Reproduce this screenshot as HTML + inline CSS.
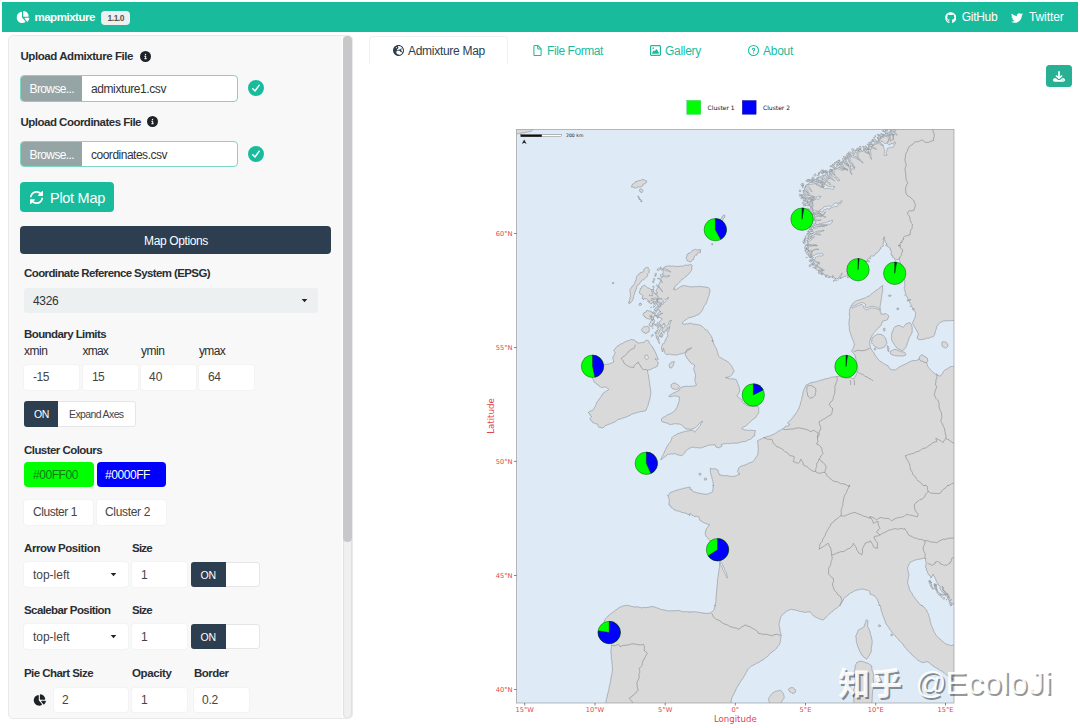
<!DOCTYPE html>
<html lang="en"><head><meta charset="utf-8"><title>mapmixture</title>
<style>
*{box-sizing:border-box;margin:0;padding:0}
html,body{width:1080px;height:728px;overflow:hidden;background:#fff}
body{font-family:"Liberation Sans",sans-serif;font-size:11px;color:#212529;position:relative}
svg{display:block}
.abs{position:absolute}
.t{position:absolute;white-space:nowrap;line-height:16px;height:16px;color:#2a2e33}
#nav{left:2px;top:2px;width:1076px;height:30px;background:#18bc9c}
#nav .t{color:#fff}
.badge{position:absolute;left:101px;top:11px;width:29px;height:13px;border-radius:3px;background:#ecf0f1;color:#555;font-size:8.5px;font-weight:bold;text-align:center;line-height:13px}
#side{left:8px;top:35px;width:345px;height:684px;background:#f8f8f8;border:1px solid #e9e9e9;border-radius:5px}
#sbt{left:343.3px;top:36px;width:8.6px;height:681.5px;background:#f0f0f0;border-radius:4.3px;box-shadow:inset 1px 0 1px #dedede,inset -1px 0 1px #dedede}
#sbh{left:343.3px;top:36px;width:8.6px;height:506px;background:#c8c8cb;border-radius:4.3px}
.inp{position:absolute;background:#fff;border-radius:3px;height:25px;box-shadow:0 0 0 1px #f3f3f3}
.file{position:absolute;left:20px;width:218px;height:26.5px;border-radius:4px;overflow:hidden;background:#fff;border:1px solid #7fd6c2}
.file .br{position:absolute;left:-1px;top:-1px;width:62px;height:27px;background:#95a5a6}
.btn{position:absolute;border-radius:4px;color:#fff}
.dark{background:#2c3e50}
.on{position:absolute;background:#2c3e50;border-radius:3px 0 0 3px}
.tog{position:absolute;background:#fff;border:1px solid #e6e6e6;border-radius:3px}
.teal{color:#18bc9c}
</style></head><body>
<!-- NAVBAR -->
<div id="nav" class="abs">
 <svg class="abs" style="left:14px;top:8.6px" width="13.5" height="12" viewBox="0 0 576 512"><path fill="#fff" d="M512.4 240h-176c-17.700 0-32-14.300-32-32V32c0-17.700 14.400-32.200 31.900-29.900 107 14.200 191.800 99 206 206 2.300 17.500-12.200 31.900-29.900 31.900M222.600 37.200c18.100-3.800 33.800 11 33.800 29.500V264c0 5.600 2 11 5.500 15.300L394 438.700c11.700 14.100 9.200 35.400-6.900 44.100C353 501.400 313.900 512 272.400 512c-132.500 0-240-107.500-240-240 0-115.500 81.500-211.900 190.200-234.800M477.800 288h64c18.500 0 33.300 15.700 29.500 33.800-10.200 48.400-35 91.400-69.600 124.200-12.300 11.700-31.600 9.200-42.400-3.900l-84.400-101.700c-17.300-20.900-2.400-52.400 24.600-52.400h78.200z"/></svg>
 <div class="t" style="left:32.4px;top:7px;font-size:11.5px;letter-spacing:-0.459px;font-weight:bold;color:#fff">mapmixture</div>
 <div class="badge" style="left:99px;top:8.5px;height:14px;width:29px;border-radius:4px"></div><div class="t" style="left:105.5px;top:7.5px;font-size:8.5px;letter-spacing:-0.481px;font-weight:bold;color:#555">1.1.0</div>
 <svg class="abs" style="left:942.5px;top:9.6px" width="11.5" height="11.5" viewBox="0 0 512 512"><path fill="#fff" d="M173.9 397.4c0 2-2.300 3.600-5.200 3.600-3.300.3-5.600-1.300-5.600-3.600 0-2 2.300-3.600 5.200-3.600 3-.3 5.600 1.300 5.600 3.600m-31.100-4.500c-.7 2 1.300 4.300 4.300 4.900 2.600 1 5.600 0 6.200-2s-1.300-4.300-4.300-5.200c-2.600-.7-5.500.3-6.200 2.300m44.200-1.700c-2.900.7-4.900 2.600-4.600 4.900.3 2 2.900 3.300 5.900 2.600 2.900-.7 4.900-2.600 4.600-4.600-.3-1.900-3-3.200-5.900-2.900M252.800 8C114.100 8 8 113.300 8 252c0 110.900 69.800 205.800 169.500 239.200 12.800 2.300 17.300-5.600 17.300-12.100 0-6.200-.3-40.400-.3-61.400 0 0-70 15-84.700-29.800 0 0-11.400-29.100-27.800-36.600 0 0-22.900-15.700 1.600-15.400 0 0 24.900 2 38.600 25.800 21.900 38.600 58.600 27.500 72.900 20.900 2.300-16 8.800-27.100 16-33.700-55.900-6.200-112.300-14.300-112.300-110.500 0-27.500 7.600-41.300 23.600-58.900-2.600-6.500-11.100-33.300 2.600-67.900 20.900-6.500 69 27 69 27 20-5.600 41.500-8.500 62.800-8.500s42.800 2.900 62.800 8.500c0 0 48.100-33.600 69-27 13.700 34.700 5.200 61.400 2.600 67.900 16 17.700 25.800 31.500 25.800 58.900 0 96.500-58.900 104.200-114.800 110.500 9.200 7.900 17 22.900 17 46.400 0 33.700-.3 75.400-.3 83.600 0 6.500 4.600 14.400 17.300 12.100C436.200 457.800 504 362.900 504 252 504 113.300 391.500 8 252.800 8"/></svg>
 <div class="t" style="left:959.7px;top:7px;font-size:12px;letter-spacing:-0.275px;color:#fff">GitHub</div>
 <svg class="abs" style="left:1009px;top:9.6px" width="12" height="12" viewBox="0 0 512 512"><path fill="#fff" d="M459.400 151.700c.3 4.500.3 9.100.3 13.600 0 138.700-105.600 298.600-298.600 298.600-59.500 0-114.700-17.200-161.100-47.100 8.400 1 16.600 1.300 25.300 1.300 49.100 0 94.200-16.600 130.300-44.800-46.100-1-84.800-31.200-98.100-72.800 6.500 1 13 1.600 19.800 1.600 9.400 0 18.800-1.300 27.600-3.600-48.100-9.700-84.100-52-84.100-103v-1.300c14 7.800 30.200 12.700 47.400 13.300-28.300-18.800-46.800-51-46.800-87.400 0-19.500 5.200-37.400 14.300-53C87.400 130.800 165 172.400 252.100 176.900c-1.600-7.800-2.600-15.900-2.600-24C249.500 95.100 296.300 48 354.400 48c30.200 0 57.500 12.700 76.700 33.100 23.700-4.500 46.500-13.300 66.600-25.300-7.800 24.400-24.400 44.800-46.100 57.800 21.100-2.300 41.600-8.100 60.400-16.200-14.300 20.800-32.200 39.300-52.600 54.300"/></svg>
 <div class="t" style="left:1027px;top:7px;font-size:12px;letter-spacing:-0.106px;color:#fff">Twitter</div>
</div>
<!-- SIDEBAR -->
<div id="side" class="abs"></div>
<div class="abs" style="left:340.6px;top:36px;width:2.8px;height:682px;background:linear-gradient(90deg,#f8f8f8,#fff)"></div><div id="sbt" class="abs"></div><div id="sbh" class="abs"></div>
<div class="t" style="left:20.5px;top:48px;font-size:11.5px;letter-spacing:-0.434px;font-weight:bold">Upload Admixture File</div>
<svg class="abs" style="left:140px;top:51px" width="11" height="11" viewBox="0 0 512 512"><path fill="#1f2327" d="M256 512a256 256 0 1 0 0-512 256 256 0 1 0 0 512m-32-352a32 32 0 1 1 64 0 32 32 0 1 1-64 0m-8 64h48c13.300 0 24 10.700 24 24v88h8c13.300 0 24 10.700 24 24s-10.700 24-24 24h-80c-13.300 0-24-10.700-24-24s10.700-24 24-24h24v-64h-24c-13.300 0-24-10.700-24-24s10.700-24 24-24"/></svg>
<div class="file" style="top:75px"><div class="br"></div></div><div class="t" style="left:29.5px;top:81px;font-size:12px;letter-spacing:-0.613px;color:#fff">Browse...</div><div class="t" style="left:91px;top:81px;font-size:12px;letter-spacing:-0.407px;color:#333">admixture1.csv</div>
<svg class="abs" style="left:248px;top:80px" width="16" height="16" viewBox="0 0 512 512"><path fill="#18bc9c" d="M256 512a256 256 0 1 1 0-512 256 256 0 1 1 0 512m118-366.300c-10.700-7.800-25.700-5.400-33.500 5.300L221.100 315.200 169 263.100c-9.400-9.400-24.600-9.400-33.900 0s-9.400 24.600 0 33.900l72 72c5 5 11.800 7.500 18.800 7s13.400-4.100 17.500-9.800l135.900-187c7.800-10.700 5.400-25.700-5.300-33.500"/></svg>
<div class="t" style="left:20.5px;top:114px;font-size:11.5px;letter-spacing:-0.511px;font-weight:bold">Upload Coordinates File</div>
<svg class="abs" style="left:147px;top:116px" width="11" height="11" viewBox="0 0 512 512"><path fill="#1f2327" d="M256 512a256 256 0 1 0 0-512 256 256 0 1 0 0 512m-32-352a32 32 0 1 1 64 0 32 32 0 1 1-64 0m-8 64h48c13.300 0 24 10.700 24 24v88h8c13.300 0 24 10.700 24 24s-10.700 24-24 24h-80c-13.300 0-24-10.700-24-24s10.700-24 24-24h24v-64h-24c-13.300 0-24-10.700-24-24s10.700-24 24-24"/></svg>
<div class="file" style="top:140.5px"><div class="br"></div></div><div class="t" style="left:29.5px;top:146.5px;font-size:12px;letter-spacing:-0.613px;color:#fff">Browse...</div><div class="t" style="left:91px;top:146.5px;font-size:12px;letter-spacing:-0.492px;color:#333">coordinates.csv</div>
<svg class="abs" style="left:248px;top:146px" width="16" height="16" viewBox="0 0 512 512"><path fill="#18bc9c" d="M256 512a256 256 0 1 1 0-512 256 256 0 1 1 0 512m118-366.300c-10.700-7.800-25.700-5.400-33.500 5.300L221.100 315.200 169 263.100c-9.400-9.400-24.600-9.400-33.900 0s-9.400 24.600 0 33.900l72 72c5 5 11.800 7.500 18.800 7s13.400-4.100 17.500-9.800l135.900-187c7.800-10.700 5.400-25.700-5.300-33.500"/></svg>
<div class="btn" style="left:20px;top:182px;width:94px;height:30px;background:#18bc9c">
 <svg class="abs" style="left:10px;top:9px" width="13" height="13" viewBox="0 0 512 512"><path fill="#fff" d="M480.100 192h7.900c13.300 0 24-10.700 24-24V24c0-9.700-5.800-18.500-14.800-22.200S477.900.2 471 7l-51.700 51.800C375 22.100 318 0 256 0 127 0 20.300 95.400 2.600 219.500c-2.500 17.500 9.600 33.700 27.100 36.200s33.700-9.700 36.200-27.100C79.200 135.500 159.300 64 256 64c44.400 0 85.200 15 117.700 40.300L327 151c-6.900 6.900-8.900 17.200-5.200 26.200S334.300 192 344 192zm29.400 100.500c2.500-17.500-9.700-33.700-27.100-36.200s-33.700 9.700-36.200 27.100c-13.300 93-93.400 164.500-190.100 164.500-44.400 0-85.200-15-117.700-40.300L185 361c6.900-6.900 8.900-17.200 5.200-26.200S177.700 320 168 320H24c-13.300 0-24 10.700-24 24v144c0 9.700 5.800 18.500 14.800 22.200s19.300 1.600 26.200-5.200l51.800-51.800C137 489.900 194 512 256 512c129 0 235.700-95.400 253.400-219.500z"/></svg>
 <div class="t" style="left:30px;top:7.7px;font-size:14.5px;letter-spacing:-0.278px;color:#fff">Plot Map</div>
</div>
<div class="btn dark" style="left:20px;top:226px;width:311px;height:28px;border-radius:4px"></div><div class="t" style="left:144px;top:233px;font-size:12px;letter-spacing:-0.367px;color:#fff">Map Options</div>
<div class="t" style="left:24px;top:265px;font-size:11.5px;letter-spacing:-0.601px;font-weight:bold">Coordinate Reference System (EPSG)</div>
<div class="abs" style="left:24px;top:288px;width:294px;height:25px;background:#ecf0f1;border-radius:3px"></div><div class="t" style="left:33px;top:292.5px;font-size:12px;letter-spacing:-0.299px;color:#333">4326</div>
<svg class="abs" style="left:301px;top:297px" width="7" height="7" viewBox="0 0 10 10"><path fill="#222" d="M1 3h8L5 7.500z"/></svg>
<div class="t" style="left:24px;top:326px;font-size:11.5px;letter-spacing:-0.582px;font-weight:bold">Boundary Limits</div>
<div class="t" style="left:24px;top:342.5px;font-size:12px;letter-spacing:-0.459px">xmin</div><div class="t" style="left:82.5px;top:342.5px;font-size:12px;letter-spacing:-0.793px">xmax</div><div class="t" style="left:141px;top:342.5px;font-size:12px;letter-spacing:-0.459px">ymin</div><div class="t" style="left:199px;top:342.5px;font-size:12px;letter-spacing:-0.668px">ymax</div>
<div class="inp" style="left:24px;top:365px;width:55px"></div><div class="inp" style="left:83px;top:365px;width:55px"></div><div class="inp" style="left:141px;top:365px;width:55px"></div><div class="inp" style="left:199px;top:365px;width:55px"></div><div class="t" style="left:33px;top:369px;font-size:12px;letter-spacing:-0.448px;color:#444">-15</div><div class="t" style="left:92px;top:369px;font-size:12px;letter-spacing:-0.674px;color:#444">15</div><div class="t" style="left:149px;top:369px;font-size:12px;letter-spacing:0.076px;color:#444">40</div><div class="t" style="left:208px;top:369px;font-size:12px;letter-spacing:-0.424px;color:#444">64</div>
<div class="tog" style="left:24px;top:401px;width:112px;height:26px"></div>
<div class="on" style="left:24px;top:401px;width:34px;height:26px"></div><div class="t" style="left:34px;top:406px;font-size:10.5px;letter-spacing:-0.375px;color:#fff">ON</div>
<div class="t" style="left:69px;top:406px;font-size:10.5px;letter-spacing:-0.618px;color:#444">Expand Axes</div>
<div class="t" style="left:24px;top:442px;font-size:11.5px;letter-spacing:-0.551px;font-weight:bold">Cluster Colours</div>
<div class="abs" style="left:24px;top:462px;width:70px;height:25px;border-radius:4px;background:#00ff00"></div><div class="t" style="left:33px;top:466.5px;font-size:12px;letter-spacing:-0.433px;color:#127a12">#00FF00</div>
<div class="abs" style="left:97px;top:462px;width:69px;height:25px;border-radius:4px;background:#0000ff"></div><div class="t" style="left:105px;top:466.5px;font-size:12px;letter-spacing:-0.433px;color:#fff">#0000FF</div>
<div class="inp" style="left:24px;top:500px;width:69px"></div><div class="inp" style="left:97px;top:500px;width:69px"></div><div class="t" style="left:33px;top:504px;font-size:12px;letter-spacing:-0.447px;color:#444">Cluster 1</div><div class="t" style="left:105px;top:504px;font-size:12px;letter-spacing:-0.335px;color:#444">Cluster 2</div>
<div class="t" style="left:24px;top:540px;font-size:11.5px;letter-spacing:-0.413px;font-weight:bold">Arrow Position</div><div class="t" style="left:132px;top:540px;font-size:11.5px;letter-spacing:-0.753px;font-weight:bold">Size</div>
<div class="inp" style="left:24px;top:562px;width:104px"></div><div class="t" style="left:33px;top:567px;font-size:12px;letter-spacing:-0.023px;color:#444">top-left</div>
<svg class="abs" style="left:110px;top:571px" width="7" height="7" viewBox="0 0 10 10"><path fill="#222" d="M1 3h8L5 7.500z"/></svg>
<div class="inp" style="left:132px;top:562px;width:55px"></div><div class="t" style="left:141px;top:567px;font-size:12px;letter-spacing:-0.674px;color:#444">1</div>
<div class="tog" style="left:191px;top:562px;width:69px;height:25px"></div><div class="on" style="left:191px;top:562px;width:35px;height:25px"></div><div class="t" style="left:200.5px;top:567px;font-size:10.5px;letter-spacing:-0.125px;color:#fff">ON</div>
<div class="t" style="left:24px;top:601.5px;font-size:11.5px;letter-spacing:-0.589px;font-weight:bold">Scalebar Position</div><div class="t" style="left:132px;top:601.5px;font-size:11.5px;letter-spacing:-0.753px;font-weight:bold">Size</div>
<div class="inp" style="left:24px;top:624px;width:104px"></div><div class="t" style="left:33px;top:629px;font-size:12px;letter-spacing:-0.023px;color:#444">top-left</div>
<svg class="abs" style="left:110px;top:633px" width="7" height="7" viewBox="0 0 10 10"><path fill="#222" d="M1 3h8L5 7.500z"/></svg>
<div class="inp" style="left:132px;top:624px;width:55px"></div><div class="t" style="left:141px;top:629px;font-size:12px;letter-spacing:-0.674px;color:#444">1</div>
<div class="tog" style="left:191px;top:624px;width:69px;height:25px"></div><div class="on" style="left:191px;top:624px;width:35px;height:25px"></div><div class="t" style="left:200.5px;top:629px;font-size:10.5px;letter-spacing:-0.125px;color:#fff">ON</div>
<div class="t" style="left:24px;top:664.8px;font-size:11.5px;letter-spacing:-0.550px;font-weight:bold">Pie Chart Size</div><div class="t" style="left:132px;top:664.8px;font-size:11.5px;letter-spacing:-0.383px;font-weight:bold">Opacity</div><div class="t" style="left:194px;top:664.8px;font-size:11.5px;letter-spacing:-0.534px;font-weight:bold">Border</div>
<svg class="abs" style="left:33px;top:694px" width="13" height="12" viewBox="0 0 576 512"><path fill="#1f2327" d="M512.4 240h-176c-17.700 0-32-14.300-32-32V32c0-17.700 14.400-32.200 31.900-29.900 107 14.200 191.800 99 206 206 2.300 17.500-12.200 31.900-29.900 31.900M222.600 37.200c18.100-3.800 33.800 11 33.800 29.500V264c0 5.600 2 11 5.500 15.300L394 438.700c11.700 14.100 9.200 35.400-6.900 44.100C353 501.400 313.900 512 272.400 512c-132.500 0-240-107.500-240-240 0-115.500 81.500-211.900 190.200-234.800M477.800 288h64c18.500 0 33.300 15.700 29.500 33.800-10.200 48.400-35 91.400-69.600 124.200-12.300 11.700-31.600 9.200-42.400-3.900l-84.400-101.700c-17.300-20.900-2.400-52.400 24.600-52.400h78.200z"/></svg>
<div class="inp" style="left:54px;top:688px;width:74px;height:23.5px"></div><div class="inp" style="left:132px;top:688px;width:55px;height:23.5px"></div><div class="inp" style="left:194px;top:688px;width:55px;height:23.5px"></div><div class="t" style="left:62px;top:692px;font-size:12px;letter-spacing:-0.674px;color:#444">2</div><div class="t" style="left:141px;top:692px;font-size:12px;letter-spacing:-0.674px;color:#444">1</div><div class="t" style="left:202px;top:692px;font-size:12px;letter-spacing:-0.227px;color:#444">0.2</div>
<!-- TABS -->
<div class="abs" style="left:369px;top:36px;width:139px;height:28px;border:1px solid #eef1f2;border-bottom:none;border-radius:4px 4px 0 0"></div>
<svg class="abs" style="left:393px;top:45px" width="11" height="11" viewBox="0 0 512 512"><path fill="#2c3e50" d="M256.200 48C371 48.100 464 141.200 464 256c0 22.100-3.400 43.400-9.800 63.400-2 .4-4.100.6-6.200.6h-2.700c-8.500 0-16.600-3.400-22.600-9.400l-29.300-29.300c-6-6-9.400-14.100-9.400-22.600V208c0-8.800 7.200-16 16-16s16-7.200 16-16-7.200-16-16-16h-24c-13.300 0-24 10.700-24 24s-10.700 24-24 24h-56c-8.800 0-16 7.200-16 16s-7.200 16-16 16h-25.400c-12.500 0-22.600-10.100-22.600-22.600 0-6 2.400-11.800 6.600-16l70.100-70.100c2.100-2.100 3.300-5 3.300-8 0-6.200-5.100-11.300-11.300-11.300h-14.100c-12.500 0-22.600-10.100-22.600-22.600 0-6 2.400-11.800 6.600-16l23.100-23.100c.8-.8 1.600-1.500 2.500-2.200zm182.200 308.100c-32.800 59.600-93.900 101.400-165.200 107.200-.7-2.300-1.100-4.800-1.100-7.300 0-13.300-10.700-24-24-24h-26.700c-8.500 0-16.600-3.400-22.600-9.400l-29.300-29.300c-6-6-9.400-14.100-9.400-22.600V304c0-17.700 14.300-32 32-32h98.700c8.500 0 16.600 3.400 22.600 9.400l29.300 29.300c6 6 14.100 9.400 22.600 9.400h5.500c8.500 0 16.600 3.400 22.600 9.400l16 16c4.200 4.200 10 6.600 16 6.600 4.800 0 9.300 1.500 13 4.100zM282.200 510.700C411.300 497.600 512 388.600 512 256 512 114.600 397.400 0 256 0S0 114.600 0 256c0 127.500 93.200 233.300 215.300 252.800 13.200 2.100 26.800 3.200 40.700 3.200zm-94.900-387.400-32 32c-6.200 6.200-16.400 6.200-22.600 0s-6.200-16.400 0-22.600l32-32c6.200-6.200 16.400-6.200 22.600 0s6.200 16.400 0 22.600"/></svg>
<div class="t" style="left:408px;top:42.5px;font-size:12px;letter-spacing:-0.284px;color:#2c3e50">Admixture Map</div>
<svg class="abs" style="left:533px;top:45px" width="9" height="11" viewBox="0 0 384 512"><path fill="#18bc9c" d="M176 48H64c-8.800 0-16 7.200-16 16v384c0 8.800 7.200 16 16 16h256c8.800 0 16-7.200 16-16V208h-88c-39.800 0-72-32.200-72-72zm140.100 112L224 67.900V136c0 13.300 10.700 24 24 24zM0 64C0 28.700 28.700 0 64 0h133.500c17 0 33.300 6.700 45.300 18.700l122.500 122.600c12 12 18.700 28.300 18.700 45.300V448c0 35.300-28.700 64-64 64H64c-35.300 0-64-28.700-64-64z"/></svg>
<div class="t" style="left:547px;top:42.5px;font-size:12px;letter-spacing:-0.425px;color:#18bc9c">File Format</div>
<svg class="abs" style="left:650px;top:45px" width="11" height="11" viewBox="0 32 448 448" preserveAspectRatio="none"><path fill="#18bc9c" d="M64 80c-8.800 0-16 7.200-16 16v320c0 8.800 7.200 16 16 16h320c8.800 0 16-7.200 16-16V96c0-8.800-7.200-16-16-16zM0 96c0-35.300 28.700-64 64-64h320c35.300 0 64 28.700 64 64v320c0 35.300-28.700 64-64 64H64c-35.300 0-64-28.700-64-64zm128 32a32 32 0 1 1 0 64 32 32 0 1 1 0-64m136 72c8.500 0 16.400 4.500 20.700 11.800l80 136c4.400 7.400 4.400 16.600.1 24.100S352.600 384 344 384H104c-8.900 0-17.200-5-21.300-12.900s-3.500-17.500 1.600-24.800l56-80c4.500-6.400 11.800-10.200 19.700-10.200s15.200 3.800 19.700 10.200l17.200 24.600 46.500-79c4.300-7.300 12.200-11.800 20.700-11.800z"/></svg>
<div class="t" style="left:665px;top:42.5px;font-size:12px;letter-spacing:-0.287px;color:#18bc9c">Gallery</div>
<svg class="abs" style="left:748px;top:45px" width="11" height="11" viewBox="0 0 512 512"><path fill="#18bc9c" d="M464 256a208 208 0 1 0-416 0 208 208 0 1 0 416 0M0 256a256 256 0 1 1 512 0 256 256 0 1 1-512 0m256-80c-17.700 0-32 14.300-32 32 0 13.300-10.700 24-24 24s-24-10.700-24-24c0-44.200 35.800-80 80-80s80 35.800 80 80c0 47.200-36 67.200-56 74.500v3.800c0 13.300-10.700 24-24 24s-24-10.700-24-24v-8.100c0-20.500 14.800-35.200 30.100-40.200 6.400-2.100 13.200-5.500 18.200-10.300 4.300-4.200 7.700-10 7.700-19.600 0-17.700-14.300-32-32-32zm-32 192a32 32 0 1 1 64 0 32 32 0 1 1-64 0"/></svg>
<div class="t" style="left:763px;top:42.5px;font-size:12px;letter-spacing:-0.272px;color:#18bc9c">About</div>
<div class="btn" style="left:1046.4px;top:65px;width:25.4px;height:22.3px;background:#27b093;border-radius:3.5px">
 <svg class="abs" style="left:6.8px;top:5.6px" width="12" height="11.5" preserveAspectRatio="none" viewBox="0 0 448 512"><path fill="#fff" d="M256 32c0-17.700-14.300-32-32-32s-32 14.300-32 32v210.700l-41.400-41.400c-12.500-12.500-32.800-12.500-45.300 0s-12.500 32.800 0 45.300l96 96c12.500 12.500 32.800 12.500 45.300 0l96-96c12.500-12.500 12.500-32.800 0-45.300s-32.800-12.500-45.300 0L256 242.700zM64 320c-35.300 0-64 28.700-64 64v32c0 35.300 28.700 64 64 64h320c35.300 0 64-28.700 64-64v-32c0-35.300-28.700-64-64-64h-46.900l-56.600 56.600c-31.200 31.200-81.900 31.200-113.100 0L110.900 320zm304 56a24 24 0 1 1 0 48 24 24 0 1 1 0-48"/></svg>
</div>
<svg class="abs" style="left:0;top:0" width="1080" height="728" viewBox="0 0 1080 728" font-family="'DejaVu Sans','Liberation Sans',sans-serif">
<defs><clipPath id="fr"><rect x="516.5" y="129.5" width="437.5" height="573.5"/></clipPath></defs>
<rect x="686.8" y="100.4" width="14" height="14" fill="#00ff00" stroke="#2a6" stroke-width=".3"/>
<text x="707.6" y="109.7" font-size="6" fill="#111">Cluster 1</text>
<rect x="742.2" y="100.4" width="14" height="14" fill="#0000ff" stroke="#226" stroke-width=".3"/>
<text x="763" y="109.7" font-size="6" fill="#111">Cluster 2</text>
<rect x="516.5" y="129.5" width="437.5" height="573.5" fill="#deebf7"/>
<g clip-path="url(#fr)">
<g fill="#d9d9d9" stroke="#6f747a" stroke-width=".45" stroke-linejoin="round">
<path d="M513.3,126.7 534.2,126.7 533.0,129.7 532.3,130.3 531.7,130.9 530.8,131.2 530.0,131.7 528.7,131.7 527.5,132.0 526.2,132.2 525.0,132.5 523.8,132.8 522.5,133.0 521.3,133.1 520.0,133.3 516.2,134.2 513.3,134.2Z"/>
<path d="M631.3,187.0 631.9,186.2 631.9,185.2 632.3,184.3 633.0,183.7 633.8,183.6 634.5,183.1 635.1,182.5 635.3,181.7 636.2,181.6 637.0,181.8 637.4,181.0 638.3,180.8 639.1,180.5 639.9,180.6 640.6,180.4 641.3,180.0 641.9,179.5 642.7,179.3 643.4,179.6 644.2,179.7 644.8,180.1 645.2,180.7 645.9,181.0 646.7,180.8 646.6,181.6 646.0,182.0 646.3,182.7 645.8,183.3 645.2,183.5 644.6,183.8 643.9,183.8 643.3,184.2 642.8,184.9 643.1,185.7 642.3,185.9 641.7,186.3 641.0,186.5 640.5,186.8 639.9,187.3 639.2,187.0 638.5,186.6 637.8,186.8 637.4,187.4 636.7,187.5 636.2,188.0 635.5,188.1 634.8,188.3 634.2,188.0 633.8,187.2 633.0,186.8 632.2,187.2Z"/>
<path d="M639.7,189.7 639.8,189.0 640.5,188.8 641.1,188.6 641.7,189.0 642.1,189.5 642.6,190.0 643.0,190.6 642.7,191.3 642.5,191.9 642.2,192.3 641.6,192.5 641.3,193.0 641.1,192.6 641.0,192.0 640.6,191.6 640.0,191.7 639.6,191.3 639.6,190.7 639.3,190.2Z"/>
<path d="M637.7,196.3 638.4,196.1 639.0,196.7 639.4,197.6 639.1,198.5 639.7,199.3 640.7,199.3 641.1,199.9 641.6,200.5 642.1,201.2 642.0,202.0 641.4,201.7 640.7,201.7 640.9,200.8 640.5,200.0 639.9,199.4 639.0,199.3 638.9,198.5 638.9,197.6 638.2,197.1Z"/>
<path d="M895.8,129.7 895.9,130.3 895.4,130.7 895.0,131.1 894.6,131.4 894.1,131.9 893.4,131.8 893.1,131.2 892.5,131.0 891.9,131.3 891.3,131.6 890.6,131.5 890.0,132.0 889.5,132.0 889.0,131.9 888.6,132.3 888.2,132.6 887.7,133.0 887.8,133.6 887.2,133.9 886.7,133.7 885.9,133.8 885.0,133.9 884.4,134.5 884.2,135.3 883.4,135.8 882.6,136.3 881.9,137.0 881.0,137.3 881.4,137.9 881.0,138.4 880.7,138.9 880.4,139.3 879.8,139.5 879.4,139.9 878.9,139.8 878.3,139.7 878.3,140.6 877.7,141.3 877.2,140.9 876.6,141.1 876.1,141.4 876.0,142.0 876.2,142.5 876.4,143.0 876.2,143.5 875.8,143.8 874.8,144.0 874.2,144.7 873.2,145.0 872.6,145.7 872.2,146.1 871.8,146.3 871.7,146.8 871.7,147.3 871.1,148.0 871.2,148.9 870.7,149.6 870.0,150.0 869.5,149.5 869.2,148.9 869.0,148.2 869.2,147.5 868.7,148.3 868.5,149.3 868.3,149.9 867.7,150.0 867.2,150.1 866.7,150.0 865.8,149.6 864.8,149.8 864.3,149.7 863.8,149.9 863.6,150.4 863.3,150.8 862.8,151.0 862.4,151.3 862.0,150.9 861.5,150.7 860.7,150.2 860.0,149.7 859.5,149.8 859.0,149.9 858.7,150.4 858.4,150.8 858.3,150.2 857.7,150.0 857.2,150.1 856.7,150.0 856.0,150.2 855.7,150.8 855.1,151.1 854.8,151.7 855.2,152.4 854.8,153.0 854.3,153.5 854.2,154.2 853.8,154.8 853.1,154.9 852.8,155.5 853.1,156.2 852.5,155.8 851.9,155.6 851.6,156.3 850.8,156.3 850.3,157.2 849.3,157.0 848.7,157.6 848.3,158.3 847.4,158.4 846.5,158.9 846.4,159.9 845.8,160.7 845.4,161.4 844.6,161.5 843.8,161.9 843.3,162.5 842.9,163.2 842.1,163.1 841.5,163.5 841.5,164.2 841.1,164.8 840.9,165.4 840.7,166.0 840.8,166.7 840.0,166.9 839.6,167.7 838.8,167.7 838.0,168.0 837.4,168.6 836.6,168.8 835.8,169.1 835.0,169.2 834.1,169.2 833.3,169.6 833.1,170.5 832.5,171.2 831.7,171.2 830.9,171.2 830.4,171.8 830.0,172.5 829.1,173.0 829.2,173.9 828.3,173.5 827.5,174.0 826.8,174.2 826.1,174.1 825.7,174.8 825.0,175.0 824.3,175.4 824.1,176.3 823.2,176.1 822.5,176.5 822.0,177.1 821.3,177.2 820.6,177.1 820.0,177.5 819.5,177.4 819.0,177.2 818.4,177.4 818.2,177.9 817.6,178.6 817.0,179.3 816.6,179.6 816.2,180.0 815.8,179.5 815.3,179.5 814.5,180.0 814.2,180.8 813.3,180.7 812.4,180.8 812.2,181.7 811.7,182.3 810.9,182.1 810.3,182.4 809.6,182.8 809.2,183.3 809.2,183.9 808.7,184.2 808.2,184.4 807.7,184.2 807.3,185.1 806.7,185.7 806.2,186.2 805.5,186.3 805.6,187.0 805.0,187.5 804.6,188.4 805.2,189.1 804.7,189.8 803.8,190.0 803.5,190.7 803.9,191.3 803.2,191.7 803.3,192.5 803.6,193.0 804.0,193.5 804.2,194.1 804.2,194.7 804.3,195.3 804.9,195.5 805.3,196.1 805.0,196.7 804.9,197.3 805.2,197.8 805.3,198.5 805.8,198.8 805.7,199.4 806.2,199.9 806.2,200.5 806.7,200.8 807.2,201.3 807.0,202.0 807.2,202.7 807.8,203.0 808.6,203.1 808.9,203.7 809.2,204.3 809.2,205.0 809.7,205.3 810.0,205.8 810.4,206.2 810.8,206.7 811.5,206.8 811.9,207.3 812.0,207.9 812.5,208.3 812.6,208.9 813.1,209.2 813.1,209.8 812.7,210.1 813.4,210.8 813.7,211.7 813.1,212.0 813.2,212.6 813.1,213.1 813.5,213.5 814.1,214.3 814.7,215.0 814.1,215.2 814.0,215.8 813.6,216.3 814.0,216.8 814.1,217.4 814.1,217.9 814.7,218.1 815.2,218.3 814.5,219.1 814.7,220.0 814.8,220.9 815.3,221.7 815.7,222.4 815.3,223.0 815.4,223.8 814.8,224.3 814.1,224.6 813.9,225.3 814.5,225.9 814.2,226.7 813.8,227.4 813.6,228.1 813.0,228.7 812.5,229.3 812.0,230.1 812.4,231.0 811.5,231.2 810.8,231.7 810.7,232.4 810.5,233.2 810.1,233.8 809.5,234.3 808.9,234.7 808.9,235.4 808.7,236.0 808.7,236.7 808.9,237.4 808.7,238.1 808.2,238.6 808.2,239.3 808.0,239.9 807.7,240.5 807.5,241.2 808.0,241.7 807.6,242.3 808.1,242.9 808.0,243.5 808.5,244.0 809.0,244.4 809.4,244.8 809.7,245.5 809.2,246.0 808.7,245.6 808.6,245.0 808.1,245.2 807.5,245.0 807.2,245.8 807.7,246.5 807.8,247.3 808.2,248.0 807.8,248.7 807.7,249.5 808.1,250.2 808.7,250.8 808.9,251.5 809.3,252.1 810.0,252.5 809.8,253.3 810.1,254.2 811.0,254.3 811.2,255.1 810.8,255.8 811.3,256.4 811.8,256.9 811.7,257.7 812.0,258.3 812.4,259.1 813.2,259.3 813.0,260.1 813.0,260.8 813.5,261.3 813.8,262.0 813.5,262.6 813.7,263.3 813.9,264.0 813.7,264.6 813.8,265.3 814.2,265.8 814.8,266.2 815.3,266.6 815.6,267.3 815.7,268.0 815.9,268.7 816.2,269.4 816.7,270.0 817.5,270.0 818.1,270.7 818.9,271.0 819.8,271.2 820.3,272.0 820.9,272.7 821.6,273.3 822.5,273.4 823.3,273.7 823.7,274.5 824.6,274.9 825.5,274.9 826.3,275.3 827.2,275.5 828.0,275.4 828.4,276.2 829.2,276.7 830.0,276.7 830.8,276.7 831.6,276.9 832.0,277.7 832.8,277.5 833.6,277.4 834.2,278.1 835.0,278.3 835.7,278.7 836.5,278.8 837.3,278.7 838.0,278.3 838.7,278.0 839.4,277.8 840.1,277.7 840.8,278.0 841.3,277.5 842.0,277.4 842.7,277.3 843.3,277.3 843.7,276.7 844.4,276.3 845.1,276.4 845.8,276.3 846.4,275.8 847.2,275.6 847.6,275.0 848.3,274.7 848.8,274.4 849.1,273.9 849.6,274.0 850.1,273.8 850.6,273.4 851.1,273.4 851.5,273.0 851.7,272.5 852.1,272.2 852.4,271.6 852.8,271.3 853.4,271.1 853.8,270.8 854.0,270.2 854.6,270.1 855.0,269.7 855.4,269.2 855.8,268.7 856.4,268.7 857.0,268.5 857.3,268.0 857.4,267.4 857.9,267.0 858.3,266.7 858.6,266.2 859.2,266.0 859.7,265.8 860.0,265.3 860.6,265.3 861.1,264.9 861.4,264.5 861.7,264.0 861.9,263.5 862.4,263.2 862.7,262.9 863.2,262.7 863.7,262.4 864.1,262.2 864.7,262.1 865.0,261.7 865.6,261.7 866.0,261.2 866.5,261.3 867.0,261.6 867.0,261.0 867.3,260.6 867.5,260.2 867.7,259.7 867.9,258.8 868.8,258.5 869.4,258.1 870.0,257.5 870.0,257.5 870.2,256.7 870.9,256.1 871.7,256.0 872.5,256.0 873.4,256.1 874.2,255.7 874.7,255.0 875.0,254.2 875.4,253.6 876.1,253.4 876.7,253.0 877.3,252.7 877.8,252.2 878.2,251.7 878.7,251.3 879.2,250.8 879.3,250.1 879.7,249.4 880.3,248.9 881.0,248.7 880.6,247.8 881.2,247.0 882.0,246.9 882.7,246.3 883.3,246.0 883.3,245.2 882.9,244.5 883.4,243.8 883.2,243.0 883.3,242.2 883.5,241.5 883.8,240.7 883.3,240.0 883.1,239.3 883.6,238.8 883.8,238.3 883.7,237.7 883.9,237.2 884.2,236.7 884.4,237.2 884.7,237.7 884.1,238.0 884.2,238.6 884.1,239.2 884.3,239.7 884.6,240.2 885.1,240.5 884.8,241.1 885.0,241.7 885.2,242.3 885.7,242.9 886.1,243.4 886.8,243.6 886.7,244.3 886.4,244.9 886.0,245.4 885.7,246.0 886.0,245.3 886.7,245.0 887.3,245.6 887.3,246.4 887.9,246.8 888.7,247.0 889.2,247.5 889.5,248.2 890.3,248.3 890.7,249.0 890.1,249.7 890.5,250.4 891.0,251.0 891.7,251.3 891.4,251.8 891.1,252.3 891.4,252.8 891.3,253.3 891.1,254.2 891.0,255.0 891.9,255.4 892.9,255.7 892.8,256.2 892.5,256.7 892.5,257.3 893.0,257.7 893.9,257.7 894.6,258.3 894.7,259.2 895.0,260.0 895.7,260.3 896.3,260.0 896.9,259.4 897.7,259.7 898.1,259.2 898.7,259.3 899.1,258.9 899.2,258.3 899.3,258.9 899.8,259.2 899.7,259.7 899.3,260.1 899.7,260.9 900.0,261.7 900.4,262.8 900.6,263.9 901.5,264.8 902.0,265.8 902.4,266.9 902.9,267.8 903.3,268.9 903.3,270.0 903.7,271.0 903.8,272.1 903.9,273.1 904.0,274.2 904.0,275.2 904.4,276.2 904.1,277.3 904.2,278.3 904.5,279.1 904.7,280.0 904.7,280.8 904.7,281.7 904.5,282.5 904.5,283.4 904.9,284.1 905.0,285.0 904.5,286.0 904.3,287.0 904.2,288.3 904.5,289.1 904.9,289.9 904.9,290.8 905.0,291.7 905.2,292.5 905.5,293.3 905.6,294.2 905.8,295.0 906.5,295.7 906.9,296.6 907.3,297.4 907.5,298.3 908.2,299.0 908.6,299.9 909.1,300.7 909.2,301.7 909.6,302.5 910.1,303.3 910.6,304.1 910.8,305.0 911.4,305.8 911.7,306.7 912.2,307.4 912.5,308.3 912.9,309.1 913.5,309.6 914.0,310.3 914.3,311.0 915.3,312.1 915.8,313.3 915.4,314.6 915.3,316.0 915.1,317.2 914.7,318.3 914.0,319.7 913.3,321.0 912.9,322.2 912.5,323.3 913.2,324.7 913.8,326.0 914.8,327.0 915.3,328.3 916.1,329.7 917.0,331.0 917.5,332.3 918.3,333.3 918.3,334.7 917.8,336.0 917.2,337.1 917.0,338.3 917.6,338.9 918.3,339.3 919.2,339.5 920.0,339.7 920.8,339.6 921.7,339.5 922.5,339.4 923.3,339.2 924.2,339.2 925.1,339.0 925.9,338.7 926.7,338.3 927.5,338.1 928.4,338.3 929.2,337.9 930.0,337.7 930.8,337.3 931.6,336.8 932.5,336.8 933.3,336.7 934.0,335.5 934.7,334.3 934.9,332.9 935.5,331.7 935.6,330.4 936.2,329.2 936.6,327.9 936.7,326.7 937.5,325.5 938.3,324.3 939.2,323.4 940.0,322.5 941.2,322.1 942.3,321.5 943.6,321.0 945.0,320.8 946.1,320.8 947.2,320.8 948.3,320.8 949.3,320.5 950.5,320.8 951.8,320.6 953.0,320.6 954.2,320.3 963.3,320.3 963.3,118.3 895.8,118.3Z"/>
<path d="M882.8,285.5 882.0,286.1 881.2,286.6 880.1,287.3 879.1,288.2 878.1,289.2 876.8,289.9 875.6,290.8 874.3,291.7 873.7,292.2 873.0,292.6 872.4,293.2 871.9,293.7 870.7,294.7 869.5,295.8 868.7,296.1 867.8,296.2 867.0,296.7 866.4,297.3 865.6,297.6 864.9,298.1 864.2,298.4 863.3,298.5 862.5,298.7 861.6,299.0 860.8,299.5 859.9,299.6 859.1,299.9 858.2,300.1 857.3,300.3 856.5,300.6 855.4,301.4 854.3,302.2 853.2,303.0 852.4,304.0 851.7,305.2 851.0,306.4 850.4,307.6 849.9,308.8 849.6,309.7 849.7,310.5 849.5,311.4 849.6,312.3 849.4,313.1 849.3,314.0 849.3,314.9 849.6,315.7 849.7,316.6 849.7,317.5 849.6,318.3 849.2,319.1 849.2,320.0 849.1,320.9 849.0,321.7 848.9,322.6 849.1,323.4 848.9,324.3 848.9,325.1 849.1,326.0 849.3,326.8 849.5,327.7 849.3,328.6 849.3,329.4 849.6,330.8 850.0,332.2 850.5,333.5 851.0,334.9 851.3,336.4 852.1,337.7 852.4,339.1 853.0,340.4 853.6,341.4 853.9,342.6 854.2,343.6 854.4,344.5 854.1,345.6 853.7,346.7 853.6,347.8 853.0,348.7 852.5,349.3 852.1,350.0 851.7,351.4 852.6,352.5 853.7,353.5 854.4,354.3 854.8,355.2 855.2,356.0 855.4,356.9 855.8,358.2 855.9,359.6 856.0,361.0 856.5,362.4 856.8,363.2 857.1,364.0 857.2,364.9 857.3,365.8 857.4,366.7 857.7,367.5 857.8,368.4 858.1,369.2 857.8,370.4 857.3,371.4 856.9,372.5 856.7,373.7 856.1,375.0 855.3,376.3 854.6,377.5 854.0,378.7 853.0,378.4 852.0,378.3 851.1,377.7 850.0,377.5 848.8,378.0 847.5,378.0 846.2,377.8 845.0,378.0 844.2,377.7 843.4,377.3 842.5,377.1 841.7,377.0 840.9,376.6 840.0,376.4 839.2,376.2 838.3,376.3 837.1,376.6 835.8,376.7 834.6,376.7 833.3,377.0 832.5,377.2 831.6,377.2 830.8,377.5 830.0,377.8 829.2,378.2 828.3,378.3 827.5,378.6 826.7,378.7 825.6,378.7 824.5,379.0 823.6,379.5 822.5,379.8 821.4,379.9 820.4,380.3 819.4,380.8 818.3,381.0 817.3,381.2 816.3,381.8 815.2,381.9 814.2,382.2 813.1,382.2 812.0,382.4 810.9,382.7 810.0,383.3 808.8,383.8 807.7,384.3 806.7,384.7 805.8,385.3 805.4,386.6 804.7,387.7 804.3,388.9 803.7,390.0 803.4,390.8 803.0,391.6 802.8,392.5 802.8,393.3 802.8,394.2 802.6,395.0 802.4,395.9 802.0,396.7 801.7,397.7 801.9,398.8 801.6,399.8 801.2,400.8 800.9,401.9 800.3,402.8 800.4,403.9 800.3,405.0 799.7,405.7 799.4,406.6 799.1,407.5 798.7,408.3 798.3,409.2 797.9,410.0 797.5,410.9 797.0,411.7 796.6,412.6 796.0,413.6 795.2,414.2 794.5,415.0 793.9,415.8 793.3,416.7 792.7,417.6 792.0,418.3 791.5,419.0 791.0,419.7 790.4,420.4 789.7,420.8 788.7,422.0 787.5,423.0 788.6,423.9 790.0,424.3 789.0,425.0 788.3,426.0 787.5,426.0 786.6,426.1 785.8,426.2 785.0,426.7 784.2,428.0 782.9,428.6 781.7,429.3 780.5,430.3 779.2,430.8 778.2,431.2 777.4,431.9 776.6,432.5 775.7,433.0 774.9,433.7 773.9,434.1 773.0,434.6 772.0,435.0 770.9,435.3 770.0,436.0 768.9,436.2 767.8,436.3 766.8,436.8 765.8,437.1 764.7,437.3 763.7,437.5 762.9,437.9 762.3,438.5 761.5,438.9 760.7,439.2 759.8,439.5 759.1,440.0 758.3,440.4 757.5,440.8 757.6,441.8 757.9,442.7 757.8,443.7 758.0,444.7 758.0,445.6 758.0,446.5 758.0,447.4 758.3,448.3 758.2,449.2 758.4,450.0 758.1,450.8 758.0,451.7 758.1,452.5 758.0,453.4 757.8,454.2 757.5,455.0 757.0,455.8 756.7,456.6 756.1,457.2 755.7,458.0 755.2,458.7 754.6,459.4 754.2,460.2 753.7,460.8 752.9,461.4 752.1,462.1 751.1,462.3 750.2,462.7 749.3,463.0 748.3,463.2 747.6,463.8 746.7,464.2 745.9,464.7 745.1,465.0 744.2,465.3 743.3,465.5 742.5,465.7 741.6,466.0 740.9,466.4 740.0,466.7 738.9,467.8 738.3,469.2 738.1,470.5 737.5,471.7 738.2,472.4 738.7,473.3 740.0,474.2 739.2,474.3 738.4,474.6 737.7,475.0 737.0,475.5 736.2,475.7 735.4,476.0 734.5,476.2 733.7,476.3 732.6,476.4 731.6,476.5 730.6,476.1 729.5,476.2 728.4,476.0 727.5,475.6 726.4,475.7 725.3,475.7 723.9,475.7 722.5,475.3 721.1,475.1 719.7,475.0 719.1,473.6 718.3,472.3 718.2,470.9 717.5,469.7 716.7,469.4 715.9,469.1 715.1,468.7 714.2,468.7 713.2,468.7 712.2,468.9 711.3,468.5 710.3,468.3 710.4,469.7 710.3,471.0 710.4,472.2 710.8,473.3 710.9,474.2 711.0,475.1 711.4,475.9 711.7,476.7 711.9,477.5 711.8,478.4 712.3,479.1 712.5,480.0 713.0,481.5 713.0,483.0 713.2,484.5 713.3,486.0 713.3,485.0 713.3,485.8 713.1,486.7 713.1,487.5 713.0,488.3 713.1,489.2 712.9,490.0 712.7,490.8 712.7,491.7 711.9,492.1 711.2,492.5 710.5,492.9 709.7,493.2 708.2,493.9 706.7,494.2 705.8,494.1 705.0,494.3 704.1,494.2 703.3,493.8 702.5,493.7 701.6,493.7 700.8,493.7 700.0,493.3 699.2,493.2 698.3,493.0 697.5,492.7 696.7,492.7 695.8,492.4 695.1,491.9 694.2,492.0 693.3,491.7 692.9,491.2 692.4,491.0 692.2,490.4 692.1,489.8 691.1,489.4 690.0,489.2 690.1,488.1 690.0,487.0 689.2,487.2 688.3,487.3 687.5,487.5 686.7,487.7 685.8,487.8 685.1,488.3 684.2,488.1 683.3,488.3 682.5,488.5 681.7,489.1 680.9,489.2 680.0,489.2 679.1,489.4 678.4,489.9 677.5,490.1 676.7,490.0 675.8,490.3 675.1,491.0 674.2,491.0 673.3,491.3 672.8,492.0 671.9,492.1 671.1,492.1 670.3,492.5 670.0,492.9 669.7,493.3 669.4,493.9 669.4,494.4 669.0,494.8 668.6,495.1 668.0,495.0 667.5,495.3 668.0,496.0 668.6,496.6 668.3,497.5 668.7,498.3 668.9,499.0 669.1,499.6 669.1,500.3 669.7,500.8 669.3,501.3 669.2,501.9 669.0,502.4 669.2,503.0 669.0,503.5 668.8,504.0 669.0,504.5 668.8,505.0 669.7,505.5 670.6,505.9 670.8,506.9 671.3,507.7 672.2,508.0 673.0,508.5 673.8,509.1 674.2,510.0 674.9,509.9 675.7,510.2 676.4,510.6 677.0,511.0 677.8,511.0 678.6,511.0 679.2,511.5 680.0,511.7 680.9,511.8 681.6,512.4 682.5,512.5 683.3,512.7 684.2,512.8 685.0,513.2 685.9,513.3 686.7,513.7 687.1,513.9 687.6,514.2 688.1,514.1 688.6,514.4 688.8,514.9 689.3,515.1 689.8,515.3 690.0,515.8 689.6,515.3 689.6,514.6 689.6,513.9 690.0,513.3 690.5,513.6 691.0,513.8 691.4,514.2 691.7,514.7 692.1,514.9 692.4,515.4 692.9,515.5 693.3,515.8 693.9,516.2 694.5,516.5 695.2,516.4 695.8,516.3 696.5,516.2 697.1,516.1 697.6,516.6 698.3,516.7 698.9,517.0 699.2,517.6 699.3,518.2 699.3,518.8 699.7,519.3 699.7,519.9 700.3,520.8 701.8,521.3 703.0,522.2 704.3,523.0 705.8,523.3 706.8,523.8 707.8,524.2 708.7,524.5 709.7,524.7 708.7,525.6 708.0,526.7 707.5,527.6 706.7,528.3 706.0,529.5 705.7,530.8 705.5,532.1 705.0,533.3 705.4,534.3 705.7,535.3 706.0,536.3 706.7,537.0 707.6,537.9 708.3,539.0 709.3,539.8 710.0,540.8 710.7,542.0 711.7,543.0 712.5,544.0 713.3,545.0 713.8,546.3 714.0,547.6 714.7,548.8 715.3,550.0 716.2,551.1 716.7,552.4 717.1,553.7 717.5,555.0 717.9,555.8 718.1,556.7 718.3,557.5 718.7,558.3 719.1,559.9 719.7,561.3 719.9,562.2 719.8,563.2 719.5,564.1 719.5,565.0 719.7,565.8 719.7,566.7 719.6,567.5 719.3,568.3 719.2,569.2 718.8,570.0 718.9,570.8 718.8,571.7 718.6,572.5 718.5,573.3 718.3,574.2 718.3,575.0 718.0,575.8 718.0,576.7 718.0,577.5 717.8,578.3 717.5,579.1 717.4,580.0 717.3,580.8 717.5,581.7 717.5,582.9 717.2,584.2 717.3,585.4 717.0,586.7 717.0,587.9 716.6,589.2 716.7,590.4 716.7,591.7 716.3,592.9 716.4,594.2 716.2,595.4 716.2,596.7 716.2,597.9 715.8,599.2 716.1,600.4 715.8,601.7 715.6,602.8 715.3,604.0 715.1,605.0 715.0,606.0 715.0,605.0 715.0,606.0 714.7,607.0 714.5,608.1 714.2,609.2 713.6,610.3 712.7,611.2 711.7,612.0 710.8,612.8 709.4,613.1 708.0,613.3 706.5,613.4 705.0,613.3 704.0,613.1 702.9,613.0 701.9,612.7 700.8,612.7 699.8,612.5 698.8,612.3 697.7,612.2 696.7,612.0 695.8,612.0 695.0,611.7 694.2,611.8 693.3,611.8 692.5,611.8 691.7,611.9 690.8,611.7 690.0,611.7 690.0,612.5 688.8,612.0 687.6,611.7 686.3,611.7 685.0,611.7 683.7,611.7 682.4,611.7 681.2,611.2 680.0,610.8 678.8,610.4 677.5,610.5 676.3,610.7 675.0,610.8 673.7,610.8 672.5,610.6 671.3,610.8 670.0,610.8 668.7,610.8 667.4,610.9 666.2,610.5 665.0,610.0 663.7,609.9 662.5,609.7 661.3,609.4 660.0,609.2 659.3,608.6 658.4,608.2 657.5,608.1 656.7,607.8 655.8,607.5 655.1,607.1 654.2,606.9 653.3,606.7 652.1,606.6 650.8,606.7 649.6,607.1 648.3,607.2 647.1,607.6 645.9,607.7 644.6,607.4 643.3,607.5 642.1,607.8 640.8,607.7 639.5,607.4 638.3,607.0 637.1,606.7 635.8,606.9 634.6,606.9 633.3,606.7 632.5,606.7 631.6,606.5 630.8,606.1 630.0,605.8 629.2,605.7 628.4,605.4 627.5,605.5 626.7,605.3 625.4,605.4 624.2,605.7 623.0,606.1 621.7,606.3 620.5,607.1 619.2,607.5 618.4,608.2 617.5,608.7 616.8,609.5 615.8,610.0 615.0,610.6 614.2,611.2 613.4,611.9 612.5,612.5 611.3,613.2 610.3,614.2 609.3,615.0 608.3,615.8 607.6,616.8 606.7,617.5 605.9,618.4 605.0,619.2 604.7,620.2 604.3,621.3 604.1,622.3 604.2,623.3 604.4,624.5 605.0,625.5 605.2,626.6 605.8,627.5 606.2,628.5 606.3,629.6 606.4,630.6 606.7,631.7 607.0,632.5 607.2,633.3 607.3,634.2 607.2,635.1 607.6,635.9 608.1,636.6 608.3,637.5 608.3,638.3 608.6,639.2 608.9,640.0 609.4,640.8 609.7,641.7 610.5,642.8 610.8,644.2 611.7,645.0 611.4,645.8 611.3,646.6 611.3,647.5 611.2,648.3 611.0,649.2 611.0,650.0 610.8,650.8 610.8,651.7 611.0,652.7 611.3,653.7 611.2,654.8 611.2,655.8 611.3,656.9 611.1,658.0 611.4,659.0 611.7,660.0 611.9,661.0 612.1,662.1 611.9,663.1 612.2,664.2 612.3,665.2 612.0,666.3 612.4,667.3 612.5,668.3 612.5,669.2 612.4,670.0 612.3,670.8 612.2,671.7 612.1,672.5 612.0,673.3 611.9,674.2 611.7,675.0 611.4,676.0 611.1,677.1 611.0,678.1 610.8,679.2 610.7,680.2 610.6,681.3 610.2,682.3 610.0,683.3 610.0,684.4 609.6,685.4 609.3,686.4 609.2,687.5 608.9,688.5 608.8,689.6 608.7,690.7 608.3,691.7 608.1,692.5 607.9,693.3 607.5,694.1 607.5,695.0 607.2,695.8 607.3,696.7 606.8,697.5 606.7,698.3 606.3,699.6 606.2,700.8 605.9,701.9 605.8,703.0 605.5,711.7 730.8,711.7 730.8,703.0 731.2,701.9 731.2,700.7 731.6,699.5 731.7,698.3 732.2,697.0 732.8,695.8 733.7,694.7 734.2,693.3 734.5,692.4 735.1,691.7 735.6,690.9 735.8,690.0 736.0,689.1 736.5,688.2 736.9,687.4 737.5,686.7 738.1,685.9 738.5,685.0 738.9,684.1 739.5,683.3 740.1,682.5 740.5,681.6 741.0,680.7 741.7,680.0 742.5,678.8 743.3,677.5 744.0,676.1 745.0,675.0 745.5,673.7 746.2,672.5 746.9,671.3 747.5,670.0 748.4,668.8 749.5,667.8 750.5,666.8 751.7,665.8 752.6,665.6 753.4,665.2 754.2,664.7 755.0,664.2 755.8,663.8 756.6,663.2 757.5,662.9 758.3,662.5 759.3,662.2 760.1,661.6 760.8,661.0 761.7,660.5 762.6,660.2 763.5,659.7 764.2,658.9 765.0,658.3 765.8,657.5 766.8,657.0 767.4,656.2 768.3,655.5 769.2,654.7 769.7,653.7 770.6,653.0 771.7,652.5 772.3,652.0 772.7,651.3 773.4,650.8 774.2,650.5 774.8,649.9 775.4,649.4 776.0,648.8 776.7,648.3 777.3,647.0 778.3,645.8 779.3,644.7 780.0,643.3 780.2,642.5 780.1,641.6 780.5,640.8 780.7,640.0 780.6,639.2 780.5,638.3 780.9,637.5 781.0,636.7 781.1,635.8 781.3,635.0 780.9,633.8 780.5,632.5 780.0,631.3 780.0,630.0 780.0,629.2 779.8,628.3 779.7,627.5 779.5,626.7 779.2,625.9 779.0,625.0 779.0,624.2 779.2,623.3 779.4,622.5 779.7,621.7 779.8,620.9 779.8,620.0 780.2,619.2 780.5,618.4 780.8,617.6 780.8,616.7 781.4,616.0 782.0,615.2 782.7,614.7 783.3,614.0 783.9,613.4 784.7,612.9 785.2,612.3 785.8,611.7 786.5,611.2 787.2,610.8 788.0,610.6 788.7,610.2 790.2,609.8 791.7,609.2 792.4,609.6 793.3,609.8 794.1,609.9 795.0,609.8 795.8,610.1 796.6,610.5 797.5,610.5 798.3,610.8 799.1,611.2 799.9,611.5 800.8,611.6 801.7,611.7 802.5,611.6 803.4,611.9 804.1,612.3 805.0,612.5 806.2,612.0 807.5,612.0 808.8,611.9 810.0,611.7 810.9,612.7 811.8,613.7 812.5,614.8 813.3,615.8 814.2,616.2 815.0,616.8 815.8,617.3 816.7,617.7 817.5,618.0 818.5,618.1 819.1,618.8 820.0,619.2 820.9,619.3 821.7,619.7 822.5,619.9 823.3,620.0 823.8,619.3 824.5,618.7 825.2,618.3 825.8,617.7 826.4,616.9 827.1,616.3 827.6,615.6 828.3,615.0 828.9,614.4 829.5,613.8 830.2,613.4 830.8,612.8 831.4,612.2 831.9,611.6 832.7,611.4 833.3,610.8 833.9,610.2 834.4,609.5 835.0,609.0 835.8,608.7 836.5,608.3 837.2,607.8 837.7,607.2 838.3,606.7 839.2,605.9 840.0,605.0 840.0,606.0 840.1,605.2 840.4,604.4 841.0,603.8 841.3,603.0 842.0,602.4 842.4,601.5 842.9,600.8 843.3,600.0 843.8,598.8 844.6,597.8 845.6,597.0 846.7,596.3 847.6,595.7 848.2,594.7 849.2,594.1 850.0,593.3 850.8,592.9 851.7,592.4 852.6,592.1 853.3,591.5 854.2,591.1 855.0,590.7 855.8,590.3 856.7,590.0 857.5,590.0 858.4,589.9 859.2,589.7 860.0,589.3 860.8,589.1 861.7,589.1 862.5,589.3 863.3,589.2 864.2,589.3 865.0,589.7 865.9,589.9 866.7,590.2 867.6,590.2 868.5,590.6 869.2,591.1 870.0,591.7 869.9,592.9 870.0,594.2 871.3,594.6 872.5,595.0 873.8,595.6 875.0,596.3 875.5,597.0 876.0,597.7 876.4,598.4 877.0,599.0 877.5,600.4 878.3,601.7 878.5,602.9 878.8,604.0 879.0,605.0 879.2,606.0 880.0,605.0 880.3,605.8 880.6,606.6 880.6,607.5 880.8,608.3 881.0,609.2 881.0,610.1 881.2,610.9 881.7,611.7 882.1,612.5 882.3,613.5 882.4,614.5 882.8,615.3 883.1,616.3 883.7,617.2 883.9,618.2 884.2,619.2 884.9,620.5 885.3,622.0 885.5,622.8 886.0,623.5 886.4,624.2 886.7,625.0 887.5,625.7 888.0,626.6 888.7,627.4 889.2,628.3 889.6,629.3 890.4,630.0 891.1,630.8 891.7,631.7 892.1,632.7 892.9,633.5 893.7,634.2 894.5,635.0 895.3,635.8 895.8,636.8 896.6,637.6 897.5,638.3 898.1,639.3 898.9,640.0 899.5,640.9 900.3,641.7 901.1,642.5 902.1,643.1 902.8,644.0 903.3,645.0 903.9,646.0 904.4,646.9 905.3,647.6 906.2,648.3 906.7,649.3 907.4,650.2 908.3,650.9 909.2,651.7 909.8,652.3 910.2,653.2 911.0,653.7 911.7,654.3 912.2,655.0 912.7,655.7 913.4,656.2 914.2,656.7 915.3,657.7 916.3,658.8 917.4,659.7 918.3,660.8 919.7,661.1 920.8,661.8 922.1,662.3 923.3,662.5 924.5,662.4 925.5,662.0 926.5,661.7 927.5,661.7 928.6,662.5 929.7,663.2 930.8,664.0 931.7,665.0 932.9,665.9 934.2,666.7 935.4,667.5 936.7,668.3 938.0,668.8 939.2,669.7 940.3,670.5 941.7,670.8 942.8,671.9 944.2,672.7 944.7,673.3 945.4,673.8 946.0,674.4 946.7,675.0 947.6,675.4 948.5,675.9 949.2,676.7 950.0,677.3 950.9,678.3 951.8,679.1 953.0,679.6 954.2,680.0 958.3,680.8 958.3,645.0 954.2,645.0 952.9,645.0 951.7,645.5 950.4,645.4 949.2,645.0 947.9,644.7 946.7,644.2 945.3,643.6 944.2,642.7 943.0,641.6 941.7,640.8 941.1,640.2 940.6,639.4 939.9,639.0 939.2,638.5 938.6,637.8 937.8,637.3 937.3,636.5 936.7,635.8 936.1,635.2 935.6,634.6 935.4,633.7 935.0,633.0 934.4,632.4 934.0,631.6 933.6,630.8 933.3,630.0 933.0,629.1 932.9,628.2 932.3,627.5 932.0,626.7 931.7,625.8 931.1,625.1 930.9,624.2 930.8,623.3 930.7,622.5 930.2,621.7 930.1,620.9 930.0,620.0 930.0,619.1 929.8,618.3 929.3,617.5 929.2,616.7 928.9,615.8 928.7,614.9 928.4,614.1 928.0,613.3 927.4,612.6 927.0,611.8 926.8,610.9 926.7,610.0 925.9,609.5 925.3,608.9 924.8,608.1 924.3,607.3 923.6,606.8 923.0,606.1 922.3,605.6 921.7,605.0 921.7,606.0 920.6,604.9 919.5,603.8 918.6,602.6 917.5,601.7 917.0,600.7 916.4,599.9 915.7,599.1 915.0,598.3 914.5,597.4 913.8,596.7 913.1,595.9 912.5,595.0 912.3,594.1 911.9,593.2 911.5,592.4 910.8,591.7 910.2,591.0 909.8,590.1 909.4,589.3 909.2,588.3 909.2,587.4 909.0,586.6 908.7,585.7 908.2,585.0 907.9,584.2 907.8,583.3 907.7,582.5 907.5,581.7 907.8,580.9 908.2,580.1 908.1,579.2 908.3,578.3 908.5,577.5 908.6,576.6 908.8,575.8 909.2,575.0 908.9,574.2 908.5,573.4 908.4,572.5 908.2,571.7 908.0,570.8 907.8,570.0 907.8,569.1 907.5,568.3 907.7,567.5 907.9,566.7 908.1,566.0 908.7,565.3 909.2,563.9 910.0,562.5 911.2,561.8 912.5,561.2 913.8,560.7 915.0,560.0 916.3,559.8 917.5,559.5 918.7,559.2 920.0,559.2 921.2,558.7 922.5,558.7 923.7,558.3 925.0,558.3 925.5,558.5 925.8,558.9 925.7,559.4 926.0,559.9 925.6,560.7 925.5,561.7 926.2,562.3 926.2,563.3 925.9,564.1 925.8,565.0 925.8,566.0 925.4,566.9 925.8,567.8 926.7,568.3 926.3,569.2 926.4,570.2 926.9,571.0 927.5,571.7 927.5,572.6 928.0,573.4 928.2,574.4 929.0,575.0 929.4,575.3 929.8,575.6 930.2,576.0 930.6,576.3 930.6,576.9 931.1,577.3 931.0,577.8 930.8,578.3 931.0,577.7 931.2,577.0 931.8,576.7 932.2,576.2 932.4,575.6 932.6,575.1 933.0,574.7 933.3,574.2 933.3,574.8 933.5,575.4 933.8,575.9 934.3,576.3 934.4,576.9 934.9,577.3 935.1,577.8 935.0,578.3 935.5,579.1 935.8,580.0 936.2,580.9 936.7,581.7 937.1,582.5 937.7,583.2 938.3,584.0 938.3,585.0 938.7,585.4 939.2,585.5 939.6,585.8 939.8,586.4 940.2,586.7 940.3,587.3 940.1,587.8 940.0,588.3 939.9,588.9 940.2,589.4 940.6,589.8 941.0,590.2 941.4,590.6 941.5,591.1 941.9,591.5 942.5,591.7 942.7,592.2 943.2,592.4 943.4,592.9 943.9,593.2 944.1,593.7 944.6,594.0 945.0,594.4 945.0,595.0 945.5,595.3 946.0,595.5 946.4,596.0 947.0,596.1 947.1,596.7 947.2,597.2 947.6,597.7 947.5,598.3 947.8,598.9 948.0,599.4 948.5,599.6 949.1,599.7 949.2,600.3 949.7,600.6 949.8,601.2 950.0,601.7 950.3,602.3 950.6,603.0 951.3,603.3 952.0,603.3 952.8,603.4 953.2,604.0 953.9,604.3 954.2,605.0 958.3,605.3 958.3,365.8 954.2,365.8 954.0,366.2 952.6,366.4 951.2,366.5 949.8,367.1 948.5,367.9 947.5,368.7 946.4,369.2 945.3,369.8 944.3,370.6 943.7,371.3 943.1,372.0 942.8,372.8 942.3,373.6 941.9,374.3 941.2,374.8 940.7,375.5 940.2,376.1 939.2,375.9 938.2,375.6 937.1,375.1 936.1,374.7 934.9,373.7 933.6,372.8 933.0,372.4 932.5,371.7 931.9,371.2 931.3,370.6 930.3,369.6 929.5,368.6 928.6,367.6 927.9,366.5 927.5,365.5 927.2,364.4 927.0,363.4 926.5,362.4 925.4,362.2 924.4,361.8 923.4,361.5 922.4,361.0 921.5,360.5 920.7,359.9 919.9,359.3 918.9,358.9 917.8,359.6 916.9,360.3 915.5,360.5 914.1,360.6 912.8,360.7 911.4,361.0 910.0,361.6 908.7,362.4 907.3,363.2 905.9,363.8 904.5,364.5 903.2,365.1 901.8,365.8 900.4,366.5 899.6,366.7 898.9,367.2 898.2,367.7 897.7,368.4 896.4,369.4 894.9,369.9 893.7,369.8 892.4,369.8 891.2,369.7 890.1,369.2 889.7,368.2 889.0,367.3 888.4,366.7 888.1,365.8 887.0,365.4 886.0,364.9 885.0,364.2 883.9,363.8 883.3,363.3 882.5,362.9 881.9,362.2 881.2,361.8 880.4,361.4 879.8,360.8 879.1,360.2 878.4,359.6 878.0,358.9 877.3,358.3 876.8,357.7 876.4,356.9 875.9,356.2 875.4,355.5 874.9,354.8 874.3,354.1 874.2,353.3 873.7,352.6 873.2,352.0 872.7,351.4 872.2,350.7 871.9,350.0 871.4,349.3 870.9,348.7 870.4,347.1 869.9,345.6 869.9,344.8 870.0,344.0 869.8,343.2 869.5,342.5 869.8,341.3 870.2,340.1 870.5,338.9 870.9,337.7 871.3,336.8 871.9,336.0 872.3,335.0 873.0,334.2 873.6,333.3 874.3,332.4 875.0,331.6 875.7,330.8 876.4,330.1 877.1,329.4 877.6,328.6 878.4,328.1 879.0,327.3 879.8,326.7 880.6,326.0 881.2,325.3 881.4,324.2 881.9,323.2 882.2,322.2 882.6,321.2 883.8,320.8 885.0,320.6 886.2,320.2 887.4,319.8 887.9,318.8 888.2,317.8 888.6,316.8 888.7,315.7 888.0,315.2 887.4,314.6 886.6,314.2 886.0,313.6 884.8,313.8 883.7,314.1 882.4,313.9 881.2,314.3 881.0,313.0 880.5,311.9 880.0,310.7 879.8,309.5 880.0,308.4 880.1,307.2 880.1,305.9 880.5,304.7 880.4,303.3 880.8,302.0 881.2,300.6 881.2,299.2 881.3,298.4 881.5,297.5 881.7,296.7 881.7,295.8 881.8,294.9 882.0,294.1 882.2,293.2 882.3,292.4 882.6,291.5 882.8,290.7 882.8,289.8 882.6,288.9 882.4,288.1 882.6,287.2 882.6,286.3Z"/>
<path d="M872.3,337.7 873.6,336.9 874.6,335.7 876.0,335.2 877.1,334.2 878.5,334.1 879.8,334.4 881.2,334.6 882.6,334.9 883.5,335.9 884.5,336.8 885.2,338.0 886.0,339.0 886.1,340.3 886.5,341.5 886.8,342.7 886.7,343.8 885.9,344.7 885.4,345.8 884.7,346.6 883.9,347.3 882.7,347.8 881.5,348.1 880.3,348.3 879.1,348.7 877.9,348.1 876.7,347.4 875.5,346.7 874.3,345.9 873.6,345.0 872.8,344.3 872.1,343.5 871.6,342.5 871.6,341.2 871.9,340.1 871.9,338.8Z"/>
<path d="M892.2,332.2 892.8,330.8 893.4,329.4 893.9,327.9 894.9,326.7 896.0,326.4 897.0,325.9 898.0,325.7 899.0,325.3 900.1,325.8 901.1,326.3 902.1,326.9 903.2,327.4 903.9,326.5 904.5,325.6 905.3,324.9 905.9,323.9 906.9,323.5 908.0,323.1 909.0,322.7 910.0,322.6 910.7,323.6 911.3,324.6 911.5,325.7 912.1,326.7 912.2,328.1 912.2,329.4 912.2,330.8 912.1,332.2 911.8,333.3 911.1,334.4 910.7,335.4 910.0,336.3 909.2,337.6 908.9,339.0 908.3,340.4 908.0,341.8 907.4,343.1 907.0,344.5 906.5,345.9 905.9,347.3 905.1,348.3 904.3,349.2 903.5,350.1 902.5,350.7 901.2,350.3 900.0,349.7 898.9,349.1 897.7,348.7 896.6,347.9 895.9,346.7 895.1,345.6 894.2,344.5 893.5,343.2 892.7,341.8 891.9,340.5 891.5,339.0 891.5,338.2 891.4,337.3 891.7,336.5 891.6,335.6 891.6,334.7 891.7,333.9 891.9,333.0Z"/>
<path d="M890.1,351.4 891.3,350.8 892.4,350.2 893.7,349.7 894.9,349.3 896.3,349.8 897.7,350.3 899.0,350.9 900.4,351.4 901.4,351.8 902.5,351.8 903.5,352.0 904.5,352.1 905.0,352.7 905.4,353.5 905.9,354.8 904.9,355.4 903.8,355.7 902.8,355.8 901.8,356.2 900.9,356.0 900.1,355.9 899.2,356.0 898.4,355.9 897.5,355.9 896.6,355.9 895.7,355.8 894.9,355.5 893.9,355.3 892.9,355.0 891.9,354.5 890.8,354.1 890.4,352.8Z"/>
<path d="M887.4,345.6 888.3,346.6 888.9,347.9 888.9,349.3 888.6,350.5 888.6,351.7 887.8,350.7 887.8,349.5 887.5,348.4 887.2,347.0Z"/>
<path d="M874.1,348.4 875.4,347.8 875.9,348.5 876.2,349.2 875.1,350.3 874.2,349.7Z"/>
<path d="M883.7,328.3 884.8,328.1 885.1,329.1 885.0,330.3 884.2,331.4 883.5,330.0 883.4,329.1Z"/>
<path d="M888.3,295.4 889.5,295.3 890.5,294.8 891.4,295.9 890.3,296.2 889.4,296.8 888.9,296.1Z"/>
<path d="M896.8,308.3 897.6,308.0 898.5,308.0 898.8,309.4 898.0,309.6 897.1,309.7Z"/>
<path d="M942.3,341.8 943.3,341.7 944.3,341.9 945.4,342.0 946.4,342.5 947.0,343.3 947.5,344.1 947.9,345.0 948.2,345.9 947.6,346.5 947.1,347.1 946.4,347.6 945.7,348.0 944.8,347.8 943.9,347.4 943.2,346.9 942.3,346.6 941.9,345.5 941.9,344.3 941.9,343.0Z"/>
<path d="M919.4,356.9 920.3,356.2 921.0,355.2 922.0,355.0 922.9,354.8 923.6,355.5 924.0,356.3 924.9,356.8 925.8,356.9 926.9,357.7 927.6,358.9 927.6,360.1 927.9,361.3 926.9,362.0 926.2,362.9 925.2,362.5 924.0,362.4 923.2,361.8 922.4,361.3 921.6,361.1 920.7,361.0 920.1,360.2 919.6,359.4 919.3,358.1Z"/>
<path d="M664.2,267.5 664.6,266.9 665.1,266.6 665.9,266.6 666.3,266.0 666.8,266.0 667.3,266.1 667.9,266.2 668.3,265.8 669.2,266.0 670.0,266.1 670.9,265.8 671.7,266.3 672.6,266.2 673.4,265.7 674.2,266.2 675.0,266.7 675.5,266.3 676.0,266.6 677.1,266.4 678.1,266.5 679.2,266.3 680.2,266.3 681.2,266.1 682.3,266.1 683.3,265.8 684.3,265.6 685.1,265.0 686.0,265.0 687.0,265.2 688.0,265.4 688.9,265.2 689.3,264.7 689.7,264.3 690.2,264.8 690.8,264.7 691.6,264.9 692.2,265.3 691.9,266.7 691.7,268.0 691.7,269.4 691.3,270.8 690.7,271.4 690.2,272.0 689.8,272.8 689.2,273.3 688.7,274.1 688.0,274.7 687.3,275.2 686.7,275.8 686.0,276.3 685.5,277.0 684.8,277.4 684.2,278.0 683.5,278.5 682.9,278.9 682.2,279.4 681.7,280.0 680.6,280.9 679.7,282.0 678.8,282.8 678.0,283.7 677.3,284.6 676.3,285.3 675.9,285.9 675.2,286.2 674.6,286.7 674.7,287.5 674.7,288.2 674.5,288.8 673.9,288.9 673.3,289.3 673.9,289.4 674.5,289.2 674.8,289.7 675.3,290.0 675.9,289.5 676.6,289.3 677.7,288.3 678.9,287.9 680.0,287.0 680.9,286.4 682.0,286.0 683.5,285.7 685.0,285.7 686.5,286.1 688.0,286.3 689.4,286.7 690.8,286.7 692.0,286.8 693.1,286.8 694.2,286.9 695.3,286.5 696.5,286.6 697.7,286.7 698.8,286.3 700.0,286.3 701.0,286.7 702.1,286.8 703.1,286.7 704.2,286.8 705.2,287.1 706.3,287.1 707.3,287.5 708.3,287.5 709.3,288.6 710.0,290.0 709.9,291.3 709.7,292.5 709.2,293.7 709.2,295.0 708.8,295.8 708.3,296.6 708.2,297.5 708.0,298.3 707.6,299.1 707.3,300.0 707.1,300.9 706.7,301.7 706.3,302.5 706.1,303.5 705.7,304.3 705.0,305.0 704.4,305.7 703.9,306.6 703.6,307.4 703.3,308.3 702.6,309.6 701.7,310.8 701.0,312.2 700.0,313.3 699.0,314.0 698.0,314.7 696.8,315.1 695.8,315.8 694.3,316.2 692.8,316.7 691.5,317.3 690.0,317.5 689.1,317.7 688.2,318.2 687.4,318.8 686.7,319.3 685.9,319.8 685.1,320.2 684.3,320.7 683.7,321.3 683.0,322.5 682.0,323.3 683.3,324.0 684.7,324.3 685.5,324.0 686.5,323.7 687.4,323.9 688.3,323.7 689.8,323.2 691.3,323.3 692.7,324.0 694.2,324.2 695.6,324.2 697.0,324.5 698.5,325.0 700.0,325.0 700.9,325.5 701.8,326.0 702.6,326.8 703.3,327.5 704.0,328.4 704.8,329.0 705.7,329.7 706.7,330.0 707.5,330.6 708.2,331.5 708.6,332.4 709.2,333.3 709.9,334.0 710.5,334.9 711.0,335.8 711.7,336.7 712.0,338.0 712.6,339.1 712.9,340.4 713.3,341.7 712.5,340.9 711.9,340.0 712.3,340.7 712.6,341.5 713.1,342.1 713.5,342.9 714.0,344.4 714.8,345.8 715.2,346.6 715.9,347.4 716.2,348.3 716.3,349.2 716.9,349.9 717.1,350.8 717.5,351.6 717.7,352.5 717.9,353.6 718.3,354.6 718.3,355.5 718.7,356.3 719.8,357.2 721.2,357.9 722.2,358.7 723.5,359.2 724.7,360.0 726.0,360.8 727.1,361.4 728.3,362.1 728.9,362.6 729.5,363.2 730.0,363.8 730.4,364.6 731.4,365.7 732.1,366.9 732.5,368.2 733.3,369.2 733.9,370.4 734.0,371.7 733.0,372.8 732.3,374.2 731.3,375.4 730.2,376.5 729.0,377.0 727.7,377.1 726.5,377.4 725.4,377.7 726.9,377.8 728.3,378.5 729.2,378.8 730.2,379.0 731.1,378.8 732.1,378.8 733.1,378.8 734.1,379.1 735.0,379.3 736.0,379.4 736.4,380.2 736.8,381.0 737.2,381.9 737.5,382.7 737.8,383.6 738.3,384.4 738.4,385.3 738.8,386.2 739.3,387.3 739.4,388.5 739.7,389.7 739.8,391.0 739.2,392.3 738.5,393.5 737.9,394.7 736.9,395.8 737.9,396.7 738.8,397.7 739.6,398.1 740.3,398.6 740.9,399.2 741.7,399.6 742.2,400.6 742.5,401.7 743.0,402.6 743.7,403.5 744.5,403.7 745.3,404.2 746.0,404.7 746.5,405.4 747.5,405.6 748.5,405.9 749.4,406.2 750.4,406.5 751.3,406.4 752.3,406.5 753.3,406.6 754.2,406.5 755.2,406.5 756.2,406.6 757.1,406.3 758.1,406.3 758.7,407.7 758.7,409.2 758.6,410.7 759.0,412.1 758.2,413.3 757.7,414.6 756.7,415.6 756.2,416.9 755.1,418.0 753.8,418.8 752.5,419.7 751.3,420.8 750.4,421.7 749.4,422.7 748.4,423.6 747.5,424.6 746.4,425.6 745.0,426.2 743.9,426.9 742.7,427.5 742.3,428.2 741.7,428.8 743.2,429.4 744.6,430.0 745.6,429.9 746.6,429.9 747.5,430.3 748.5,430.4 749.3,430.4 750.2,430.2 751.0,430.4 751.9,430.4 752.7,430.5 753.6,430.4 754.4,430.5 755.2,430.4 755.2,431.9 754.8,433.3 754.7,434.7 754.2,436.2 753.9,435.6 753.2,436.6 752.5,437.6 751.5,438.4 750.6,439.2 749.4,439.5 748.3,440.0 747.3,440.5 746.3,441.1 745.2,441.4 744.2,441.8 742.9,441.6 741.7,441.9 740.5,442.3 739.3,442.6 738.0,442.8 736.9,443.4 735.7,443.2 734.4,443.2 733.0,443.1 731.7,443.2 730.3,443.6 728.9,443.6 727.5,443.3 726.1,443.6 724.7,443.8 723.3,443.9 722.3,444.3 721.2,444.4 721.6,445.4 721.9,446.4 720.6,447.0 719.4,447.8 718.6,447.6 717.8,447.4 717.0,447.3 716.1,447.2 715.5,445.9 715.0,444.4 714.0,444.8 712.9,445.0 711.9,445.1 710.8,445.0 709.8,445.0 708.7,445.3 707.6,445.4 706.7,446.0 705.8,446.2 704.9,446.5 704.0,446.8 703.2,447.2 702.3,447.5 701.5,447.8 700.6,447.9 699.7,448.1 698.7,447.9 697.7,447.5 696.6,447.7 695.6,447.8 694.6,447.4 693.5,447.2 692.5,447.5 691.4,447.4 690.0,448.1 688.6,448.9 687.9,449.3 687.2,449.9 686.5,450.3 685.8,450.8 685.2,452.2 684.2,453.3 683.7,454.1 683.0,454.6 682.4,455.2 681.7,455.7 680.8,455.6 679.9,455.3 679.1,455.0 678.2,455.0 677.3,454.8 676.4,454.4 675.6,453.9 674.7,453.6 673.9,453.9 673.0,454.0 672.1,454.1 671.2,453.9 670.4,454.1 669.5,454.3 668.7,454.2 667.8,454.3 667.1,455.2 666.1,455.8 665.3,456.5 664.3,457.1 663.6,457.9 662.6,458.5 661.8,459.3 660.8,459.9 661.1,458.8 661.5,457.8 662.2,456.4 662.7,455.6 663.3,454.8 663.7,453.9 663.9,452.9 664.5,452.1 664.7,451.1 665.1,450.2 665.7,449.4 666.2,448.0 667.0,446.6 667.9,445.3 668.5,443.9 669.2,443.3 669.8,442.7 670.2,441.8 670.8,441.1 671.2,440.3 671.5,439.4 671.8,438.5 671.9,437.6 672.8,436.7 673.8,435.9 674.9,435.3 676.1,434.9 677.0,434.1 678.1,433.6 679.2,433.3 680.3,432.8 681.1,432.6 681.8,432.3 682.6,432.1 683.4,432.0 684.2,431.7 684.9,431.3 685.7,431.2 686.5,431.1 688.1,430.8 689.7,430.7 691.2,430.4 692.8,430.0 693.7,431.2 694.6,432.3 695.0,431.5 695.6,430.8 696.3,430.3 696.9,429.6 697.6,428.9 698.2,428.1 698.8,427.3 699.4,426.5 700.1,425.8 700.5,424.9 700.8,423.9 701.3,423.1 702.2,422.2 702.7,421.2 701.7,421.7 700.8,422.3 700.1,422.8 699.5,423.3 698.9,423.9 698.5,424.6 697.7,425.3 696.9,426.0 696.3,426.7 695.6,427.5 694.3,428.1 693.1,428.7 691.9,429.0 690.8,429.4 689.3,429.2 687.9,429.0 686.4,428.9 685.0,428.5 684.2,427.3 683.1,426.5 682.1,425.6 681.2,424.6 679.8,424.1 678.3,424.0 676.8,423.9 675.4,423.7 674.1,423.8 672.9,424.2 671.7,424.3 670.6,424.6 669.3,424.2 668.1,423.7 667.0,423.1 665.8,422.7 664.8,422.6 663.8,422.3 662.9,421.9 661.9,421.7 661.5,420.4 661.5,418.8 662.7,417.9 663.8,416.9 664.6,416.7 665.4,416.3 666.1,415.9 666.7,415.4 668.1,414.6 669.6,414.0 670.9,413.4 672.1,412.7 673.2,411.8 674.4,411.2 675.4,410.1 676.0,408.8 676.9,407.7 677.3,406.3 677.7,405.1 678.3,403.8 678.5,402.6 679.2,401.5 679.1,400.4 679.2,399.2 679.4,398.0 679.2,396.7 678.2,396.6 677.3,396.2 676.3,396.1 675.4,395.8 674.0,396.1 672.5,396.3 671.1,396.7 669.6,396.7 668.7,396.2 669.8,395.2 671.0,394.4 672.2,393.7 673.5,392.9 674.8,392.6 676.0,391.9 677.1,391.4 678.3,391.0 679.1,390.1 679.8,389.0 680.4,388.1 681.2,387.1 682.6,386.9 684.0,386.5 685.5,386.3 686.9,386.2 688.4,386.4 689.8,386.2 691.2,386.3 692.7,386.2 693.7,386.0 694.6,385.8 695.6,385.6 696.5,385.2 696.0,384.0 695.6,382.7 695.2,381.5 694.6,380.4 695.2,379.0 695.2,377.5 695.5,376.1 695.6,374.6 694.9,373.2 694.6,371.7 694.0,370.3 693.7,368.8 694.0,367.9 694.2,366.9 694.5,366.0 694.6,365.0 693.6,364.6 692.7,364.0 691.7,363.6 690.8,363.1 690.1,362.0 689.2,361.2 688.6,360.2 687.9,359.2 687.0,358.1 686.3,356.9 685.7,355.7 685.0,354.4 685.7,353.3 686.0,351.9 686.3,350.7 686.9,349.6 688.1,349.1 689.2,348.7 690.5,348.2 691.7,347.7 691.3,348.3 690.6,348.8 689.9,349.3 689.1,349.7 688.3,350.0 687.7,350.5 687.2,351.2 686.5,351.6 685.8,352.0 684.6,352.7 683.3,353.3 682.5,353.4 681.7,353.7 680.9,354.0 680.0,354.0 679.2,354.2 678.3,354.6 677.5,354.9 676.7,355.0 675.4,355.0 674.2,354.7 672.9,354.8 671.7,355.0 670.5,354.3 669.2,354.0 668.0,354.5 666.7,354.7 665.8,354.1 665.0,353.3 664.8,352.5 664.7,351.6 664.4,350.8 664.2,350.0 663.7,349.2 663.3,348.3 663.2,349.3 663.1,350.2 663.0,351.2 662.5,352.0 662.0,350.5 661.3,349.2 661.6,348.4 661.7,347.5 661.7,346.6 662.0,345.8 662.4,345.0 662.4,344.0 663.2,343.4 664.2,343.3 664.6,342.5 665.0,341.7 664.9,341.2 665.0,340.6 665.2,340.1 665.8,340.0 666.0,339.1 666.1,338.2 666.6,337.5 667.0,336.7 667.5,336.5 667.9,336.2 668.0,335.6 668.0,335.1 667.6,334.8 667.4,334.3 667.3,333.8 667.5,333.3 667.7,332.5 668.2,331.7 668.0,330.8 668.7,330.0 669.3,329.3 669.3,328.3 669.4,327.4 670.0,326.7 669.4,327.3 668.5,327.1 668.0,327.7 667.5,328.3 667.3,329.1 666.7,329.6 666.3,330.2 665.8,330.8 665.0,331.0 664.3,331.6 664.3,332.5 664.2,333.3 663.6,332.6 663.6,331.7 662.9,331.3 662.0,331.3 661.8,330.4 662.4,329.7 662.6,328.8 663.3,328.3 664.0,327.7 664.4,326.9 664.8,326.0 665.3,325.3 664.5,325.2 664.2,324.5 664.2,323.7 664.2,323.0 663.6,323.8 663.3,324.7 662.8,324.9 662.3,325.0 662.1,325.5 661.7,325.8 661.1,326.2 661.0,326.9 661.4,327.4 661.2,328.1 661.3,328.7 661.0,329.3 660.6,329.7 660.0,330.0 659.8,330.6 659.9,331.2 659.8,331.8 659.1,332.0 658.9,332.5 658.7,333.0 658.4,333.6 658.7,334.2 659.1,334.6 659.6,335.0 659.6,335.7 659.6,336.3 659.0,336.6 658.5,337.0 658.6,337.7 658.3,338.3 657.6,338.8 657.5,339.7 657.2,338.9 656.8,338.2 656.6,337.4 656.3,336.7 656.0,336.2 656.1,335.6 656.2,335.0 655.9,334.5 655.6,334.0 656.0,333.4 656.4,333.0 656.7,332.5 656.8,331.9 656.9,331.4 657.2,330.9 657.6,330.5 657.8,330.0 658.2,329.4 658.0,328.8 657.7,328.3 658.1,327.9 658.6,327.5 658.5,326.9 658.3,326.3 658.9,326.0 659.1,325.3 659.0,324.8 659.0,324.2 659.0,323.6 659.3,323.2 659.3,322.6 658.9,322.2 659.6,321.4 660.3,320.8 661.0,320.4 661.6,319.9 662.0,319.1 661.7,318.3 661.0,318.4 660.5,317.9 659.9,317.7 659.7,317.0 659.0,317.2 658.2,317.1 658.2,317.9 657.5,318.3 657.5,317.6 657.4,316.8 656.7,316.5 656.3,315.8 656.6,315.0 657.4,314.6 657.5,313.7 658.3,313.3 658.6,312.6 659.3,312.1 660.0,311.5 660.8,311.7 660.1,311.7 659.7,311.2 659.4,310.6 659.2,310.0 658.4,309.9 657.6,310.1 656.9,310.5 656.7,311.3 655.9,311.3 655.2,311.1 654.8,310.4 654.2,310.0 654.4,309.2 655.2,308.9 655.7,308.3 655.8,307.5 656.4,307.2 657.1,306.9 657.6,306.2 658.3,306.3 658.0,305.8 658.0,305.2 657.6,304.7 657.5,304.2 656.9,303.8 656.1,303.8 655.6,304.3 655.0,304.7 654.5,304.1 653.8,303.9 653.6,303.2 653.7,302.5 654.5,302.3 654.8,301.4 655.4,300.9 655.8,300.3 656.5,299.9 656.8,299.2 657.6,298.8 658.3,299.2 657.6,299.2 657.3,298.6 657.0,298.0 656.7,297.5 656.2,298.1 655.5,298.0 654.8,298.3 654.2,298.3 653.7,297.9 653.7,297.2 653.2,296.9 653.0,296.3 653.5,295.8 654.0,295.3 654.3,294.5 655.0,294.2 655.4,293.6 656.1,293.2 656.8,293.2 657.5,293.0 657.0,292.6 656.7,292.0 656.1,291.6 656.0,290.8 656.1,290.1 656.7,289.6 656.8,288.8 657.5,288.3 658.0,287.9 658.4,287.3 659.0,287.1 659.7,287.5 659.1,287.0 658.4,286.8 658.7,286.0 658.3,285.3 659.0,285.0 659.1,284.3 659.5,283.7 659.3,283.0 659.8,282.6 660.1,282.0 660.7,281.8 661.3,281.7 661.5,281.0 661.2,280.5 661.0,279.9 660.3,279.7 660.4,279.0 660.9,278.5 661.1,277.9 661.7,277.5 662.3,277.4 662.8,277.0 663.0,276.4 663.3,275.8 663.2,275.2 662.6,274.8 662.6,274.2 662.3,273.7 663.0,273.5 663.2,272.8 663.6,272.3 663.3,271.7 663.0,271.2 663.0,270.7 663.1,270.2 662.8,269.7 663.2,269.1 663.4,268.5 664.0,268.1Z"/>
<path d="M671.2,387.3 671.2,386.1 670.8,385.0 671.8,384.3 672.7,383.5 674.0,383.1 675.4,383.1 676.5,383.9 677.7,384.6 678.7,385.4 679.4,386.5 679.0,387.7 678.5,388.8 676.9,389.2 675.4,389.6 674.1,389.1 672.7,388.8 672.1,387.9Z"/>
<path d="M669.7,367.8 669.4,366.6 668.9,365.3 669.5,364.2 670.2,363.2 671.0,362.4 671.9,361.9 673.0,361.9 674.2,361.5 674.2,362.6 673.8,363.7 673.5,364.7 673.2,365.8 672.2,366.9 671.5,368.1 670.6,367.9Z"/>
<path d="M660.3,333.3 661.2,332.9 662.0,332.5 661.7,333.2 661.8,334.0 662.7,334.2 663.0,335.0 662.8,335.8 661.9,336.0 662.2,336.8 662.0,337.5 661.5,337.2 661.4,336.6 660.9,336.7 660.3,336.7 660.6,335.8 661.0,335.0 660.5,334.2Z"/>
<path d="M686.7,256.7 687.0,256.2 687.2,255.7 686.8,255.3 686.9,254.7 687.4,254.4 688.0,254.5 688.5,254.0 688.3,253.3 689.2,253.1 690.0,253.0 690.8,252.7 691.3,252.0 691.9,251.5 692.1,250.7 692.6,250.1 693.3,250.0 694.0,250.0 694.6,249.8 695.2,249.4 695.8,249.2 696.2,249.8 696.9,250.2 697.6,249.8 698.3,250.0 698.8,249.8 699.3,249.9 699.8,249.7 700.0,249.2 700.3,249.7 700.0,250.2 700.6,250.4 701.0,250.7 700.6,251.0 700.4,251.5 700.7,252.0 700.5,252.5 700.0,252.5 699.5,252.3 699.2,252.8 698.7,253.0 697.7,252.9 696.9,253.6 697.2,254.5 696.7,255.3 695.9,254.9 695.1,255.4 694.5,255.9 694.3,256.7 694.0,257.4 693.8,258.2 693.9,259.0 693.3,259.7 692.6,259.6 692.2,260.3 691.6,260.7 691.3,261.3 690.8,261.5 690.4,261.8 689.9,261.6 689.3,261.7 688.8,261.1 688.0,261.2 687.3,260.8 687.3,260.0 686.6,259.4 686.2,258.5 686.4,257.6Z"/>
<path d="M718.0,223.0 718.6,223.0 719.0,222.7 719.3,222.2 719.2,221.6 719.8,220.9 720.0,220.0 720.3,219.6 720.3,219.0 720.9,218.9 721.4,218.7 721.8,217.9 722.0,217.0 722.2,216.1 723.1,215.9 723.6,215.3 724.0,214.7 724.3,215.4 725.0,215.7 724.8,216.5 724.8,217.4 723.9,217.5 723.3,218.3 723.2,219.2 723.1,220.1 722.3,220.7 721.7,221.3 721.0,222.0 720.3,222.5 719.8,223.4 720.0,224.3 719.4,224.8 718.7,225.0 719.0,224.4 718.9,223.8 718.4,223.5Z"/>
<path d="M711.7,243.7 712.7,243.7 712.7,244.7 711.7,244.7Z"/>
<path d="M648.3,267.5 648.2,268.3 648.6,269.0 649.1,269.5 649.7,270.0 649.2,270.5 649.2,271.2 648.9,271.9 649.3,272.5 648.6,272.9 647.9,273.6 647.6,274.4 647.7,275.3 647.4,276.2 646.8,276.9 646.0,277.4 645.3,278.0 644.6,278.5 644.3,279.3 643.6,279.9 642.7,279.7 642.1,280.3 641.7,281.0 640.9,281.4 640.3,282.0 640.2,282.9 639.6,283.7 638.9,284.2 638.3,285.0 637.4,285.1 636.9,286.0 636.8,286.8 636.7,287.7 636.4,288.5 636.4,289.3 635.5,289.8 635.3,290.7 635.4,291.6 634.7,292.1 634.7,292.9 634.3,293.7 634.5,294.5 634.0,295.2 633.4,295.8 633.7,296.7 633.4,297.4 633.3,298.2 633.3,299.1 632.7,299.7 632.7,300.6 632.0,301.1 631.4,301.6 631.0,302.3 630.5,302.8 629.9,302.7 629.9,303.3 629.3,303.7 628.8,303.4 628.5,303.0 628.6,302.5 628.3,302.0 629.3,301.8 629.6,301.0 629.6,300.1 629.7,299.3 630.0,298.5 629.6,297.6 630.2,297.1 630.7,296.3 630.4,295.6 630.6,294.8 630.2,294.1 630.3,293.3 630.2,292.6 630.1,291.8 629.7,291.1 630.0,290.3 629.9,289.5 630.5,288.8 631.0,288.1 631.7,287.7 631.8,286.8 632.3,286.0 633.1,285.8 633.7,285.0 634.1,284.3 634.4,283.5 634.7,282.7 635.0,282.0 635.1,281.1 635.9,280.6 636.2,279.8 636.0,279.0 636.3,278.3 636.4,277.5 636.9,276.8 636.7,276.0 637.2,275.7 637.7,275.2 638.0,274.6 638.7,274.3 639.6,274.0 640.0,273.1 640.1,272.6 640.6,272.3 641.2,272.2 641.7,272.5 642.4,272.1 643.2,271.9 643.9,271.3 643.7,270.3 643.6,269.6 644.2,269.1 644.9,268.9 645.3,268.3 645.8,267.6 646.7,267.5 647.5,267.4Z"/>
<path d="M640.0,288.7 640.5,288.6 641.0,288.6 641.4,288.2 641.5,287.7 641.5,287.2 641.7,286.7 642.2,286.7 642.7,286.3 643.3,285.7 644.1,285.4 645.0,285.3 645.7,286.0 646.3,286.7 646.9,287.4 647.7,287.9 648.7,288.0 649.4,288.4 650.2,288.8 650.7,289.4 651.3,290.0 652.2,290.2 652.7,290.9 653.6,291.1 654.0,292.0 654.3,292.9 654.8,293.8 655.7,294.3 656.7,294.3 657.0,295.1 657.2,296.0 658.1,296.4 658.3,297.3 657.9,298.2 657.1,298.8 657.2,299.4 656.9,299.9 657.1,300.5 657.7,300.7 657.3,301.4 656.5,301.6 656.1,302.3 655.3,302.7 654.9,302.1 654.2,302.1 653.6,302.1 653.0,302.0 652.4,302.2 652.0,302.7 652.0,303.4 651.3,303.7 650.6,303.7 650.0,303.4 649.6,302.7 649.0,302.3 649.2,301.6 648.7,301.0 648.1,300.6 647.7,300.0 647.0,299.6 646.8,298.8 646.1,298.4 645.3,298.7 644.7,298.6 644.0,298.9 643.6,299.4 643.3,300.0 643.5,299.2 643.1,298.5 642.2,298.7 641.7,298.0 642.1,297.4 642.8,297.1 642.7,296.4 643.0,295.7 642.6,295.1 642.0,294.9 641.7,294.4 641.0,294.3 640.3,294.0 639.7,293.5 639.3,292.8 639.7,292.0 639.5,291.1 640.1,290.4 640.1,289.5Z"/>
<path d="M643.3,313.3 643.8,313.1 644.1,312.6 644.6,312.6 645.1,312.3 645.7,312.2 646.2,311.8 646.3,311.3 646.3,310.7 646.8,310.5 647.3,310.3 647.6,310.8 648.2,310.9 649.1,310.9 650.0,311.0 650.6,311.1 651.1,311.1 651.1,311.7 651.6,312.1 652.5,312.5 653.3,313.0 654.1,313.4 654.8,313.9 655.2,314.8 655.0,315.7 654.3,316.1 653.8,316.8 653.4,317.6 653.0,318.3 652.1,318.2 651.3,318.8 650.3,318.6 649.7,319.3 648.9,319.0 648.0,318.7 647.2,318.5 646.3,318.3 645.9,317.6 645.2,317.4 644.9,316.5 644.0,316.3 643.5,315.7 643.2,314.9 643.2,314.1Z"/>
<path d="M642.0,328.7 642.8,328.2 643.3,327.3 644.0,326.7 644.7,326.0 645.3,326.6 646.1,326.9 646.8,326.4 647.7,326.3 648.5,326.7 648.9,327.4 649.3,328.2 649.3,329.0 649.4,329.9 649.0,330.7 649.1,331.2 649.1,331.7 648.6,331.8 648.3,332.3 647.5,332.6 646.7,332.7 646.0,333.2 645.7,334.0 645.2,333.3 644.6,332.7 643.8,332.4 643.0,332.3 642.8,331.8 642.3,331.5 642.0,331.2 641.8,330.7 641.9,330.1 641.4,329.6 641.6,329.1Z"/>
<path d="M649.3,323.7 650.0,323.0 650.6,322.3 650.7,321.8 650.5,321.3 651.1,321.2 651.3,320.7 652.0,320.3 652.9,320.3 653.2,319.6 653.7,319.0 653.9,319.6 654.2,320.1 654.7,320.5 655.0,321.0 654.6,321.4 654.2,321.6 654.0,322.1 654.2,322.6 653.6,322.8 653.5,323.3 653.7,323.8 653.7,324.3 652.8,324.6 652.3,325.4 652.3,326.3 651.7,327.0 650.9,326.4 650.0,326.3 649.7,325.5 648.9,325.2 649.4,324.5Z"/>
<path d="M639.2,303.7 640.1,303.3 641.0,303.0 641.0,303.5 640.9,304.0 641.4,304.2 641.7,304.7 640.8,305.2 640.0,305.7 639.4,305.5 639.0,304.9 639.0,304.3Z"/>
<path d="M612.5,282.5 613.7,282.5 613.7,283.7 612.5,283.7Z"/>
<path d="M633.5,339.8 634.2,339.9 634.8,340.3 635.2,340.9 635.6,341.4 636.3,341.6 637.0,341.7 637.1,342.5 637.6,343.1 638.2,342.8 638.8,343.1 639.5,343.0 640.1,342.7 640.7,342.7 641.4,342.8 642.0,342.6 642.5,342.3 643.2,342.6 644.0,342.4 644.4,341.8 645.0,341.4 645.4,340.7 646.0,340.3 646.8,340.0 647.5,340.6 648.3,340.5 648.9,341.2 649.0,342.0 649.1,342.7 649.5,343.2 649.9,343.8 650.3,344.3 650.8,344.7 651.3,345.3 651.8,345.8 652.3,346.4 652.4,347.2 652.6,348.0 653.4,348.3 654.1,349.7 654.6,351.0 655.4,352.1 655.8,353.4 656.5,354.6 656.9,355.9 657.5,357.1 657.9,358.3 658.2,359.6 657.2,359.3 656.4,358.9 654.9,358.7 655.9,359.5 656.7,360.5 657.4,361.4 658.2,362.0 658.0,363.1 658.0,364.2 657.5,365.1 657.4,366.2 656.6,366.7 655.7,367.1 654.8,367.4 654.1,367.8 653.2,368.2 652.4,368.6 651.5,368.9 650.8,369.5 650.0,369.8 649.1,369.9 648.3,370.1 647.5,370.3 647.6,371.4 647.8,372.4 647.9,373.4 648.3,374.4 648.7,375.6 648.8,376.9 648.7,378.1 649.1,379.3 649.1,380.2 649.3,381.0 649.6,381.8 649.6,382.6 649.5,383.5 649.6,384.3 649.8,385.1 649.9,385.9 650.0,386.8 650.3,387.6 650.4,388.4 650.4,389.2 650.6,390.1 650.8,390.9 650.7,391.7 650.8,392.5 650.8,393.4 650.6,394.2 650.5,395.0 650.4,395.8 650.2,396.6 650.1,397.5 650.0,398.3 649.9,399.1 649.4,400.3 649.1,401.6 648.5,402.7 648.3,404.1 648.1,405.4 647.5,406.5 646.9,407.7 646.6,409.0 646.2,410.0 645.8,410.7 644.6,411.0 643.4,411.2 642.1,411.5 640.9,411.5 640.1,411.8 639.2,412.0 638.4,412.2 637.6,412.3 636.4,412.9 635.1,413.1 633.9,413.6 632.6,414.0 631.3,414.4 630.2,415.3 628.9,415.8 627.7,416.4 626.5,417.0 625.2,417.3 624.0,417.8 622.7,418.1 621.6,418.7 620.3,418.9 619.0,419.3 617.8,419.7 617.1,420.4 616.2,420.9 615.3,421.6 614.5,422.2 613.4,422.4 612.4,423.0 611.3,423.3 610.4,423.8 609.1,424.1 607.9,424.7 606.7,425.1 605.4,425.5 604.9,426.2 604.1,426.8 603.6,427.4 603.0,428.0 601.9,427.8 600.8,427.6 599.8,427.4 599.4,427.2 598.8,427.1 598.2,426.5 598.0,425.5 597.7,424.6 597.2,423.8 596.6,423.9 596.1,423.7 595.6,423.7 595.1,423.5 594.7,423.1 594.1,423.0 593.6,423.2 593.1,423.0 592.7,422.5 592.4,421.8 592.1,421.2 591.4,420.9 590.8,420.6 590.5,420.0 590.3,419.3 589.8,418.9 590.2,418.2 590.6,417.6 591.2,417.1 591.4,416.4 590.8,416.1 590.4,415.5 590.1,414.9 589.8,414.3 589.4,413.7 589.3,413.0 588.7,412.7 588.1,412.3 588.8,412.2 589.4,411.7 589.9,411.2 590.6,411.0 591.3,410.8 591.8,410.4 592.5,410.3 593.1,409.8 593.4,409.3 593.7,408.8 594.1,408.2 594.4,407.7 594.7,407.1 595.2,406.8 595.3,406.2 595.5,405.7 595.8,405.2 596.2,404.8 596.1,404.3 596.4,403.7 596.3,403.1 596.5,402.5 596.8,402.1 597.2,401.6 597.9,401.4 598.4,400.8 598.6,400.1 598.8,399.5 599.3,398.9 599.6,398.4 600.5,397.5 601.3,396.2 602.1,395.0 602.8,393.7 603.8,392.5 605.2,391.9 606.3,390.9 607.6,390.3 608.7,389.2 607.8,388.7 607.1,387.9 606.3,387.3 605.4,386.8 604.4,387.1 603.3,387.3 602.3,387.5 601.3,387.6 600.4,387.0 599.7,386.3 599.2,386.0 598.9,385.6 598.6,385.2 598.0,385.1 597.6,384.8 597.1,384.7 596.9,384.2 596.4,384.0 596.2,383.4 595.8,383.0 595.3,382.7 594.7,382.6 594.0,382.0 593.9,381.0 593.6,380.1 593.1,379.3 592.7,378.7 592.2,378.3 592.5,377.6 592.3,376.9 592.0,376.2 591.4,375.8 591.7,375.1 591.4,374.4 591.0,373.6 590.4,373.0 589.6,372.5 589.0,371.9 588.3,371.3 587.9,370.5 587.2,369.9 586.5,369.5 586.7,368.4 586.9,367.4 587.1,366.4 587.1,365.3 587.4,364.3 587.4,363.2 587.8,362.2 588.1,361.2 589.2,361.1 590.2,360.9 591.2,360.9 592.3,360.7 593.3,360.8 594.3,360.8 595.3,360.5 596.4,360.4 597.2,360.9 597.9,361.7 598.7,362.2 599.7,362.5 600.8,362.8 601.9,363.2 602.8,363.9 603.8,364.5 605.2,364.4 606.6,364.2 608.1,364.1 609.6,363.7 610.7,363.4 611.7,362.9 612.7,362.4 613.7,362.0 613.6,360.8 613.2,359.6 612.8,358.4 612.9,357.1 613.7,356.1 614.2,354.9 614.7,353.9 615.3,353.0 614.5,351.6 613.7,350.5 614.5,349.4 615.3,348.4 616.3,347.5 617.0,346.4 618.1,345.7 619.1,345.1 620.1,344.5 621.1,343.9 622.5,343.5 623.6,342.6 624.8,342.0 626.0,341.4 627.0,340.9 628.0,340.6 628.6,340.6 629.2,340.4 629.7,340.2 630.2,339.8 631.0,339.6 631.8,339.5 632.6,339.8Z"/>
<path d="M584.2,358.2 585.1,358.1 585.8,357.6 586.0,358.4 586.2,359.2 585.4,359.5 584.5,359.6Z"/>
<path d="M768.3,698.3 769.0,697.6 769.6,696.8 770.3,696.1 770.8,695.3 771.2,694.4 771.8,693.7 772.5,693.0 773.3,692.5 774.2,692.2 774.9,691.5 775.8,691.2 776.7,691.0 777.5,690.8 778.4,690.7 779.2,690.4 780.0,690.0 781.0,690.8 782.0,691.7 782.6,692.6 783.3,693.3 783.7,694.3 783.8,695.3 784.1,696.4 784.2,697.5 784.0,698.3 783.6,699.1 782.9,699.6 782.5,700.3 781.8,701.8 780.8,703.0 780.8,705.0 770.0,705.0 770.0,703.0 769.3,701.9 768.7,700.8 768.7,699.6Z"/>
<path d="M788.3,689.2 789.5,688.3 790.8,687.7 792.3,687.6 793.7,688.0 794.8,689.1 795.8,690.3 795.5,691.5 795.0,692.7 793.5,693.2 792.0,693.3 791.0,692.3 789.7,691.7 788.9,690.4Z"/>
<path d="M865.8,620.8 866.3,620.2 867.0,619.7 867.7,620.6 868.0,621.7 867.9,622.9 867.8,624.2 867.5,625.4 867.7,626.7 868.1,627.5 868.7,628.2 869.1,629.1 869.2,630.0 869.7,630.7 870.1,631.6 870.1,632.5 870.3,633.3 870.6,634.6 871.0,635.8 871.4,637.1 871.7,638.3 871.8,639.2 872.0,640.0 872.2,640.8 872.2,641.6 872.0,642.5 872.1,643.3 872.1,644.2 872.0,645.0 871.7,645.8 871.5,646.6 871.4,647.5 871.1,648.3 871.3,649.1 871.4,650.0 871.2,650.8 871.3,651.7 870.7,652.7 870.1,653.7 869.5,654.7 869.2,655.8 868.5,656.6 867.9,657.5 867.2,658.3 866.7,659.2 865.4,658.3 864.2,657.5 863.5,656.9 863.0,656.1 862.5,655.4 861.7,655.0 861.1,653.7 860.3,652.5 859.8,651.2 859.2,650.0 858.8,649.2 858.7,648.2 858.2,647.5 857.8,646.7 857.5,645.8 857.3,645.0 857.1,644.1 856.7,643.3 856.6,642.5 856.4,641.7 856.3,640.8 856.2,640.0 856.1,639.1 856.2,638.3 856.0,637.5 855.8,636.7 855.9,635.8 856.3,635.0 856.7,634.1 857.0,633.3 857.3,632.5 857.5,631.6 858.0,630.8 858.3,630.0 859.0,629.5 859.9,629.3 860.6,628.8 861.3,628.3 862.1,628.1 862.8,627.6 863.5,627.1 864.2,626.7 864.4,625.1 865.0,623.7 865.7,622.3Z"/>
<path d="M856.7,662.5 857.6,662.4 858.3,661.9 859.1,661.4 860.0,661.3 861.1,661.4 862.1,661.4 863.2,661.6 864.2,662.0 865.1,662.5 866.2,662.8 867.3,663.1 868.3,663.3 869.2,663.9 869.9,664.7 870.8,665.3 871.7,665.8 871.9,667.3 871.8,668.8 872.1,670.3 872.8,671.7 873.2,672.7 873.3,673.7 873.5,674.8 873.7,675.8 873.3,676.8 873.1,677.9 873.0,678.9 873.3,680.0 873.6,681.5 873.7,682.9 873.8,684.4 873.4,685.9 873.4,687.3 873.1,688.8 872.8,690.2 872.5,691.7 871.7,708.3 854.2,708.3 853.7,698.3 853.5,697.1 853.7,695.8 853.9,694.6 853.8,693.3 853.8,692.1 853.6,690.8 853.7,689.5 854.2,688.3 854.7,687.2 854.8,685.9 855.0,684.6 855.1,683.4 855.2,682.1 855.5,680.8 855.1,679.6 855.0,678.3 854.9,677.5 854.7,676.7 854.5,675.9 854.4,675.0 854.6,674.2 854.4,673.3 854.1,672.5 854.2,671.7 854.4,670.2 855.1,668.8 855.1,667.3 855.0,665.8 855.6,665.1 855.9,664.2 856.4,663.4Z"/>
<path d="M878.3,625.3 879.1,624.9 880.0,624.7 880.4,625.5 880.7,626.3 879.8,626.5 879.0,627.0 878.6,626.2Z"/>
<path d="M891.0,634.3 892.3,634.3 892.3,635.7 891.0,635.7Z"/>
<path d="M928.7,580.8 929.5,580.7 930.0,580.0 930.1,580.7 930.4,581.3 930.8,581.9 931.3,582.4 931.0,583.1 931.0,583.9 931.7,584.3 932.0,585.0 931.7,585.5 931.7,586.2 931.8,586.8 932.3,587.2 932.8,587.5 933.3,587.9 933.5,588.5 933.3,589.2 932.6,589.1 932.0,588.7 931.9,588.1 931.8,587.5 931.3,587.1 930.8,586.8 930.5,586.2 930.6,585.6 930.5,585.1 930.0,584.7 929.6,584.3 929.4,583.8 929.5,583.3 929.2,582.8 929.1,582.3 928.9,581.8 928.9,581.3Z"/>
<path d="M934.2,585.0 934.8,585.0 935.3,584.7 935.7,585.1 936.0,585.5 936.2,586.0 936.6,586.4 936.5,587.0 936.7,587.5 936.5,588.0 936.1,588.5 936.5,588.9 937.0,589.0 937.2,589.5 937.3,590.1 937.3,590.6 937.4,591.1 937.9,591.3 938.3,591.7 938.7,592.2 939.0,592.7 939.4,593.2 939.9,593.5 940.4,594.0 940.8,594.5 941.1,595.2 940.8,595.8 940.3,595.6 939.7,595.7 939.2,595.1 938.6,594.6 938.3,593.9 937.7,593.4 937.5,592.6 936.7,592.2 937.0,591.4 936.7,590.7 935.9,590.4 935.4,589.6 935.1,588.9 934.6,588.2 934.6,587.4 934.5,586.6 934.0,585.9Z"/>
<path d="M941.7,586.7 942.2,586.5 942.7,586.3 942.7,586.9 943.0,587.4 943.5,587.7 943.6,588.3 943.3,588.8 943.0,589.4 943.0,590.0 943.5,590.5 944.0,590.7 944.5,591.0 944.9,591.2 945.3,591.6 945.8,591.9 946.0,592.5 946.3,592.9 946.7,593.3 947.4,593.7 947.8,594.4 948.2,595.0 948.8,595.4 948.7,596.2 949.2,596.9 949.4,597.6 949.7,598.3 949.1,597.9 948.3,598.0 948.4,597.1 948.1,596.2 947.7,595.4 947.8,594.4 947.3,594.4 946.9,594.1 946.4,594.2 945.9,594.2 945.3,594.1 945.0,593.6 945.0,593.1 944.7,592.7 944.8,591.7 944.2,590.9 943.3,590.7 942.8,589.9 942.9,589.0 942.7,588.1 942.0,587.5Z"/>
<path d="M698.9,473.6 699.7,473.3 700.6,473.1 700.8,473.9 701.1,474.7 700.3,475.1 699.4,475.3 699.1,474.5Z"/>
<path d="M704.2,478.3 705.3,478.0 706.4,478.1 706.6,478.9 706.7,479.7 705.7,479.9 704.7,480.3 704.5,479.3Z"/>
</g>
<g fill="#deebf7" stroke="#6f747a" stroke-width=".4" stroke-linejoin="round">
<path d="M851.7,306.8 852.6,306.1 853.7,305.5 855.1,305.3 856.5,304.7 857.8,303.9 859.2,303.3 860.6,302.8 862.0,302.7 863.0,302.8 864.0,303.1 864.7,303.7 865.4,304.2 865.4,305.5 865.1,306.9 866.1,308.0 867.1,307.6 868.1,307.2 869.6,307.0 870.9,306.4 872.3,306.4 873.6,306.4 875.0,306.8 876.4,307.2 877.5,307.9 878.7,308.3 879.6,308.8 880.6,309.1 880.6,310.2 879.5,309.9 878.4,309.4 877.1,309.2 876.0,308.6 874.7,308.4 873.5,308.0 872.1,307.9 870.8,308.0 869.5,308.6 868.3,309.1 867.2,309.6 866.1,309.9 865.3,309.3 864.4,308.8 863.8,307.5 863.6,306.1 862.7,305.3 862.0,304.4 860.7,304.7 859.5,305.0 858.2,305.7 856.8,306.1 855.4,306.7 854.0,307.2 853.1,307.7 852.1,308.0Z"/>
<path d="M719.7,561.3 721.0,562.0 721.6,563.1 722.3,564.0 722.8,565.0 723.0,566.1 723.7,567.0 724.2,568.0 724.5,568.9 724.7,569.8 725.1,570.6 725.7,571.3 726.1,572.2 726.4,573.1 726.7,574.0 726.8,575.0 727.4,576.4 727.8,577.8 727.0,578.0 726.4,577.2 726.0,576.3 725.8,575.2 725.3,574.3 725.0,573.4 724.4,572.5 724.0,571.6 723.7,570.7 723.0,569.9 722.6,568.9 722.4,567.9 722.0,567.0 721.6,566.3 721.1,565.6 720.7,564.8 720.5,564.0 720.0,562.7Z"/>
<path d="M813.7,212.3 814.4,212.0 815.0,211.3 815.9,211.5 816.7,211.0 817.2,210.8 817.7,211.2 818.2,211.4 818.8,211.4 819.1,210.8 819.8,210.8 819.9,210.2 820.0,209.7 821.0,209.5 821.6,208.8 822.1,208.5 822.7,208.8 822.9,208.3 823.3,208.0 823.5,207.5 823.9,207.1 824.1,206.6 824.6,206.4 825.1,206.6 825.6,206.7 826.1,206.3 826.7,206.7 827.5,206.1 828.4,205.9 829.4,206.1 830.3,206.0 830.7,206.4 831.3,206.3 831.6,205.9 832.2,205.8 832.7,205.1 833.3,204.3 834.2,204.0 834.8,203.2 835.2,202.7 835.8,202.6 836.1,203.1 836.7,203.3 837.3,203.3 837.7,203.8 837.9,203.3 838.5,203.1 839.3,202.6 840.0,202.0 840.7,201.7 840.8,201.0 841.3,200.6 842.0,200.8 842.1,201.6 841.7,202.2 840.9,202.5 840.8,203.3 840.5,203.8 839.9,203.8 839.4,203.7 838.9,203.5 838.3,204.2 837.7,205.0 837.8,205.6 837.5,206.2 837.1,206.8 836.4,206.7 835.9,206.6 835.4,206.2 834.9,206.1 834.3,206.3 833.6,206.9 832.8,207.3 831.9,207.5 831.0,207.7 830.5,208.1 829.9,208.0 829.8,208.5 829.5,209.1 828.9,209.0 828.4,209.3 828.0,208.8 827.7,208.3 826.8,208.7 826.1,209.3 825.2,209.6 824.3,209.7 823.8,209.9 823.3,210.3 823.6,211.0 823.2,211.5 822.5,211.4 822.0,211.9 821.4,211.8 821.0,211.3 820.2,211.6 819.3,211.9 818.8,211.6 818.3,211.9 818.2,212.5 817.7,212.7 817.9,213.2 817.5,213.7 816.9,213.7 816.5,214.1 815.6,214.2 814.7,214.0 814.4,213.5 814.5,213.0 814.0,212.7Z"/>
<path d="M814.2,227.0 814.5,226.6 814.6,226.1 815.0,225.7 815.5,225.5 816.0,225.5 816.5,225.3 817.0,225.6 817.5,225.7 818.1,225.2 818.9,225.1 819.1,224.4 819.2,223.7 819.8,223.4 820.5,223.6 821.2,223.9 821.7,224.3 821.8,223.8 822.1,223.2 822.7,223.3 823.3,223.0 823.8,222.7 824.3,222.5 824.7,223.0 825.3,223.0 825.8,222.8 826.4,222.6 826.8,222.2 827.2,221.8 827.7,221.9 828.3,222.0 828.7,221.5 829.3,221.7 829.3,221.0 829.8,220.7 830.3,221.0 830.9,220.7 831.7,220.4 832.7,220.3 832.2,220.8 832.4,221.5 832.3,222.1 831.7,222.3 831.4,222.9 830.9,223.2 830.8,223.8 830.3,224.2 829.7,224.4 829.0,224.5 828.4,224.1 828.0,223.7 827.6,224.1 827.4,224.6 826.8,225.0 826.3,224.6 825.8,224.8 825.3,225.0 824.8,225.3 824.3,225.0 823.9,225.4 823.7,225.9 823.5,226.5 822.8,226.5 822.2,226.5 821.8,226.0 821.2,225.9 820.7,226.3 820.5,225.6 819.7,225.5 819.0,225.3 818.5,225.9 818.0,226.3 818.2,227.0 817.8,227.4 817.3,227.7 816.6,228.1 815.9,227.9 815.2,228.2 814.7,228.7 814.3,227.9Z"/>
<path d="M806.7,200.3 807.3,200.5 807.8,200.1 808.1,199.6 808.1,199.0 809.1,199.1 810.0,199.3 810.6,199.4 811.1,199.6 811.7,199.8 812.3,199.6 813.1,199.6 813.5,199.0 813.8,198.4 813.7,197.7 814.3,197.9 814.6,198.5 815.2,198.0 815.9,198.2 816.3,197.7 816.3,197.0 816.9,196.9 817.5,196.7 818.3,196.3 819.2,196.2 819.7,196.4 820.1,196.9 820.7,196.9 821.0,196.3 820.4,196.5 820.2,197.0 819.9,197.5 820.0,198.0 819.2,198.5 818.5,199.1 817.5,199.2 816.7,198.7 816.1,199.4 815.1,199.6 814.2,199.6 813.3,199.7 812.8,199.7 812.3,199.8 811.7,199.8 811.3,199.4 811.2,199.9 810.9,200.4 810.5,200.8 810.0,201.0 809.2,201.0 808.5,201.0 808.2,201.9 807.3,202.0 807.5,201.5 807.4,201.0 806.9,200.9Z"/>
<path d="M816.0,181.7 816.8,181.6 817.1,180.9 817.8,180.9 818.4,181.2 818.0,182.0 818.6,182.7 819.3,182.8 820.0,183.0 820.4,183.4 821.0,183.6 821.4,184.1 821.3,184.7 821.8,184.9 822.3,184.8 822.8,184.8 823.3,185.0 823.9,185.4 824.5,185.2 824.9,184.9 825.4,184.5 825.9,185.1 826.6,184.9 826.7,185.5 827.0,186.0 827.6,186.0 828.0,186.3 828.4,186.7 828.9,187.0 829.4,186.6 829.9,186.4 830.5,186.7 831.0,187.0 831.3,186.5 831.9,186.5 832.4,186.1 832.9,186.1 833.3,186.7 833.8,187.1 834.3,186.7 835.0,186.7 834.4,186.7 834.0,187.2 833.6,187.7 833.7,188.3 833.5,188.9 833.1,189.4 832.5,189.2 831.9,189.2 831.5,188.8 831.0,188.6 830.5,188.8 830.0,188.7 829.1,188.6 828.1,188.5 827.2,188.3 826.3,188.0 826.1,188.7 825.4,188.9 824.7,189.1 824.2,188.6 824.1,188.0 823.6,187.6 823.3,187.1 822.7,187.0 822.1,187.3 821.6,187.8 821.2,187.3 820.5,187.2 820.2,186.7 819.7,186.4 819.3,185.9 819.3,185.3 818.8,185.5 818.3,185.7 817.7,185.8 817.2,185.4 816.7,185.1 816.6,184.6 816.6,183.9 816.0,183.7 816.5,183.3 816.5,182.7 816.4,182.1Z"/>
<path d="M831.7,173.3 832.5,173.6 833.1,174.4 833.8,174.9 834.7,175.0 835.5,175.6 835.7,176.5 836.1,176.9 836.2,177.5 836.8,177.3 837.3,177.3 837.6,177.8 837.9,178.2 838.2,178.6 838.1,179.2 838.5,179.6 838.9,180.0 839.5,180.1 840.0,180.0 839.3,180.4 838.7,181.0 837.7,180.7 837.3,179.8 836.8,179.1 836.0,178.7 835.5,178.2 835.7,177.6 835.2,177.5 834.7,177.5 833.8,177.2 833.3,176.3 832.7,176.0 832.0,175.8 831.5,175.2 831.0,174.7 831.0,173.8Z"/>
<path d="M845.0,162.7 845.2,163.3 845.8,163.4 846.2,163.7 846.3,164.3 846.7,164.0 847.3,164.1 847.8,164.2 848.3,164.3 848.1,165.0 848.5,165.7 849.1,165.9 849.7,166.1 850.5,166.0 850.9,166.6 851.4,166.3 852.0,166.0 852.5,166.3 852.9,166.7 853.0,167.3 853.1,167.8 853.7,167.7 854.3,167.7 854.5,168.3 855.0,168.7 854.1,168.9 853.3,169.3 852.8,169.1 852.5,168.6 852.1,169.2 851.5,169.2 851.2,168.7 850.6,168.6 850.5,168.1 850.3,167.7 849.8,166.9 849.2,166.2 848.3,165.9 847.3,166.0 847.2,165.0 846.2,164.8 845.3,164.9 844.7,164.3 844.9,163.5Z"/>
<path d="M880.0,143.3 880.4,142.4 881.0,141.7 881.5,141.3 882.0,141.0 882.3,141.6 883.0,141.7 883.4,142.5 884.2,143.1 884.6,143.4 885.1,143.6 885.7,143.5 886.0,143.0 886.6,143.0 887.2,143.0 887.4,143.6 887.8,144.0 888.3,144.4 888.9,144.3 889.1,144.8 889.7,145.0 890.2,144.7 890.4,144.1 890.9,143.8 891.1,143.2 891.8,143.5 892.1,144.1 892.7,143.8 893.3,143.7 893.9,143.2 894.0,142.5 894.3,141.9 895.0,141.7 895.1,142.6 896.0,143.0 895.4,143.7 894.4,143.9 894.3,144.8 894.3,145.7 893.7,145.9 893.2,146.2 892.9,146.8 892.9,147.4 892.4,147.8 891.8,147.7 891.2,147.4 890.7,147.3 889.8,147.6 889.1,148.2 888.6,148.0 888.2,147.7 887.8,148.1 887.3,148.3 887.4,149.2 887.0,150.0 886.7,150.8 886.7,151.7 886.5,152.2 886.1,152.5 885.9,153.0 886.1,153.5 886.0,154.1 886.4,154.5 886.9,154.7 887.3,155.0 886.8,154.8 886.2,155.1 885.7,155.2 885.3,155.7 884.7,155.5 884.0,155.3 884.2,154.5 883.7,153.9 884.1,153.5 884.4,152.9 884.6,152.3 884.3,151.7 884.8,151.2 884.7,150.6 884.6,150.0 885.1,149.6 884.5,149.3 884.0,149.0 883.6,148.3 884.0,147.7 883.5,146.8 883.5,145.9 883.4,145.2 882.7,145.0 882.3,145.5 881.7,145.3 881.1,144.7 881.3,143.9 880.8,143.3Z"/>
<path d="M812.5,256.7 812.9,255.9 813.5,255.4 814.3,255.7 815.0,255.0 815.6,254.3 816.5,254.2 817.2,253.9 818.0,253.7 818.9,253.6 819.6,254.2 820.2,253.7 821.0,253.3 821.7,253.3 822.4,253.7 823.0,254.0 823.3,254.7 823.0,255.2 822.8,255.7 822.2,255.7 821.7,256.0 821.0,256.2 820.3,255.8 819.6,256.0 819.0,255.7 818.4,256.0 817.9,256.4 817.2,256.5 816.7,257.0 815.9,257.1 815.2,257.6 815.4,258.5 814.7,259.0 813.9,259.6 813.0,259.3 812.8,258.5 813.4,257.9 813.2,257.1Z"/>
<path d="M658.7,306.3 658.9,305.8 658.6,305.3 659.0,305.0 659.2,304.5 660.2,304.4 661.0,304.0 661.5,303.3 662.0,302.7 662.5,301.9 663.3,301.7 663.3,300.7 663.9,299.9 664.3,299.5 664.7,299.2 665.1,299.6 665.7,299.3 666.2,298.8 666.9,298.4 667.5,297.9 668.0,297.3 668.6,297.6 669.0,298.0 668.2,298.0 667.4,298.4 667.6,299.3 667.0,300.0 666.3,300.4 665.6,300.9 665.2,301.7 664.7,302.3 663.7,302.4 663.2,303.2 663.2,304.2 662.3,304.7 661.4,304.7 660.6,305.2 660.1,306.1 660.0,307.0 659.4,306.5Z"/>
<path d="M665.8,330.8 666.1,330.2 666.2,329.5 666.8,329.3 667.5,329.1 667.3,328.3 666.7,328.0 667.2,327.4 667.0,326.7 667.3,326.2 667.3,325.7 667.4,325.2 667.8,324.8 668.1,324.3 668.8,324.1 668.8,323.6 668.7,323.0 668.8,322.0 669.6,321.4 670.0,320.7 670.7,320.0 671.1,320.5 671.7,320.7 671.2,320.9 670.6,320.8 670.1,321.2 670.2,321.8 670.6,322.2 670.6,322.8 670.1,323.1 670.0,323.7 669.6,324.5 669.2,325.3 669.3,325.8 669.4,326.3 669.1,326.7 668.7,327.0 668.8,327.6 668.9,328.2 668.4,328.7 668.0,329.2 668.2,329.8 667.7,330.3 667.6,330.8 667.3,331.3 666.6,331.1Z"/>
<path d="M645.0,355.4 646.2,355.2 647.5,354.9 647.9,356.3 648.5,357.6 647.9,358.6 647.1,359.6 646.2,359.1 645.2,358.6 644.9,357.0Z"/>
<path d="M893.5,129.6 893.9,131.3 894.6,132.9 895.9,134.2 897.2,135.4 897.4,135.1 896.3,133.8 895.3,132.7 894.8,131.1 894.6,129.4Z"/>
<path d="M890.5,130.8 890.8,132.4 891.9,134.0 892.6,135.4 892.9,137.0 893.1,138.6 892.7,140.1 893.0,140.2 893.6,138.6 893.5,136.9 893.3,135.1 892.6,133.5 891.8,132.3 891.7,130.6Z"/>
<path d="M887.5,132.4 888.8,133.7 889.5,135.0 889.4,136.4 889.2,138.0 888.6,139.4 888.1,140.9 887.4,142.4 887.7,142.6 888.6,141.1 889.2,139.7 890.0,138.1 890.4,136.4 890.4,134.6 889.7,132.9 888.7,131.9Z"/>
<path d="M884.8,134.4 885.9,135.4 886.7,136.5 887.9,137.7 889.4,138.6 890.3,139.7 890.6,141.0 891.2,140.9 890.9,139.2 889.9,137.8 888.7,137.0 887.9,135.8 887.0,134.2 885.9,133.1Z"/>
<path d="M879.7,138.0 881.5,138.0 883.2,137.4 884.6,136.7 886.0,136.1 887.4,136.0 889.0,135.3 890.4,134.7 891.8,134.8 893.3,135.0 895.0,134.7 894.9,134.4 893.4,134.5 891.9,134.2 890.2,134.1 888.7,134.7 887.4,135.3 885.7,135.3 884.3,135.9 882.8,136.4 881.6,136.9 880.3,136.9Z"/>
<path d="M874.5,142.6 876.3,143.6 878.3,143.7 880.0,143.8 881.2,144.5 882.6,145.3 882.9,144.8 881.6,143.7 880.1,142.6 878.5,142.3 877.2,142.1 876.2,141.5Z"/>
<path d="M873.1,145.2 875.0,144.8 876.5,143.6 877.7,142.5 879.0,141.5 880.3,140.5 880.1,140.2 878.6,141.0 877.2,141.9 875.9,142.8 874.8,143.6 873.5,143.8Z"/>
<path d="M870.8,147.4 872.8,148.3 874.8,148.7 876.5,149.4 876.7,149.1 875.0,148.0 873.2,147.5 871.8,146.6Z"/>
<path d="M868.9,149.0 868.8,150.6 869.0,152.3 869.7,153.8 869.6,155.0 870.1,156.7 870.4,158.1 871.2,159.5 871.7,159.2 871.1,158.0 871.0,156.4 870.8,155.1 871.0,153.3 870.5,152.1 870.5,150.8 870.8,149.4Z"/>
<path d="M865.9,150.1 867.4,151.5 868.0,152.9 869.2,154.5 869.7,154.2 868.9,152.6 868.4,150.5 867.5,149.2Z"/>
<path d="M863.0,150.2 864.0,151.6 865.6,152.6 867.3,153.1 869.0,153.4 869.1,153.0 867.5,152.6 866.0,152.0 864.8,151.1 864.0,149.8Z"/>
<path d="M856.7,152.4 857.2,153.9 856.9,155.3 857.2,157.1 858.2,158.6 859.4,159.8 860.6,160.9 861.6,162.2 863.0,163.1 863.2,162.8 862.0,161.9 861.0,160.5 859.9,159.3 858.9,158.2 858.1,157.0 858.0,155.5 858.3,153.6 857.9,151.9Z"/>
<path d="M850.6,155.5 852.1,156.9 854.0,157.6 855.6,158.0 856.7,158.9 858.3,159.7 859.5,160.7 859.9,160.3 858.6,159.0 857.3,158.2 856.0,156.9 854.4,156.3 853.2,155.8 852.3,154.9Z"/>
<path d="M848.5,157.8 849.0,158.9 849.1,160.2 849.8,161.8 851.0,163.1 852.1,164.1 852.7,165.4 853.8,166.7 854.7,167.9 855.0,167.7 854.2,166.4 853.3,165.2 852.7,163.6 851.7,162.4 850.8,161.4 850.3,160.1 850.2,158.3 849.4,156.6Z"/>
<path d="M845.6,159.7 846.7,160.9 847.1,162.0 847.7,163.4 848.7,164.8 849.2,166.0 849.1,167.2 849.6,168.9 850.0,170.3 850.2,171.8 850.8,173.3 851.6,174.6 852.1,174.4 851.4,173.0 851.0,171.7 850.9,170.1 850.7,168.6 850.3,167.3 850.5,165.6 849.9,163.9 849.2,162.8 848.7,161.4 848.1,159.7 847.2,158.6Z"/>
<path d="M843.6,161.6 844.7,162.6 846.1,163.5 847.3,164.6 848.0,165.9 848.3,165.8 847.7,164.2 846.6,163.0 845.4,161.9 844.1,160.6Z"/>
<path d="M840.7,163.5 841.5,164.9 842.3,166.3 843.3,167.7 844.9,168.7 846.3,169.6 847.6,170.6 847.9,170.2 846.6,169.2 845.3,168.0 844.1,167.3 843.3,165.8 842.6,164.3 841.9,162.7Z"/>
<path d="M838.4,165.5 839.7,166.5 840.8,167.5 842.3,168.3 843.8,168.9 845.3,169.3 845.5,169.0 844.0,168.4 842.7,167.8 841.5,166.9 840.4,165.6 839.3,164.6Z"/>
<path d="M835.9,167.7 837.2,168.5 838.9,168.9 839.9,169.6 841.5,170.2 843.2,170.2 844.7,169.7 846.2,169.4 847.5,169.6 847.6,169.1 846.1,168.7 844.5,168.9 843.2,169.3 841.9,169.2 840.6,168.6 839.2,167.5 838.0,167.3 836.8,166.4Z"/>
<path d="M832.9,169.0 832.6,170.2 832.6,172.0 833.4,173.7 834.0,175.2 834.5,175.1 834.3,173.4 833.9,172.1 834.1,170.7 834.8,168.8Z"/>
<path d="M830.2,170.7 830.0,171.9 830.5,173.7 830.4,175.0 829.8,176.2 829.0,177.4 828.5,179.1 829.1,179.2 829.5,177.9 830.7,176.7 831.6,175.2 831.9,173.4 831.6,172.2 832.0,170.3Z"/>
<path d="M827.4,172.3 827.6,173.9 827.2,175.1 826.7,176.7 826.1,178.1 825.9,180.0 825.4,181.4 824.5,182.6 823.8,184.3 824.3,184.5 825.0,183.1 826.2,181.8 827.0,180.1 827.2,178.7 828.0,177.2 828.7,175.6 829.4,173.7 829.3,171.9Z"/>
<path d="M825.0,174.2 825.8,175.5 827.1,176.8 828.7,177.7 830.3,178.3 831.8,179.0 833.0,180.0 834.3,181.1 834.6,180.7 833.4,179.6 832.1,178.4 830.7,177.5 829.2,176.8 828.0,176.0 827.0,174.9 826.1,173.3Z"/>
<path d="M822.0,175.4 822.1,176.9 822.7,178.6 823.8,180.1 825.3,181.0 826.7,181.8 828.1,182.6 829.3,183.6 829.9,184.9 830.4,184.7 829.7,183.1 828.5,181.9 827.2,181.0 825.9,180.1 824.8,179.4 824.0,178.2 823.6,176.9 823.6,175.2Z"/>
<path d="M819.6,177.3 821.1,178.2 821.8,179.5 821.9,180.9 822.0,182.6 822.0,184.3 822.1,186.0 822.8,187.7 823.1,187.6 822.6,186.0 822.6,184.3 822.7,182.6 822.8,180.9 822.7,178.9 821.7,177.2 820.4,176.3Z"/>
<path d="M816.8,178.8 817.6,179.9 818.7,181.0 820.3,181.8 821.2,182.8 821.5,182.6 820.6,181.3 819.3,180.5 818.4,179.3 817.6,177.8Z"/>
<path d="M813.7,180.3 815.7,181.2 817.7,181.2 819.4,181.5 820.6,182.6 820.9,182.2 819.6,180.8 817.8,180.2 816.3,180.0 815.0,179.3Z"/>
<path d="M811.2,182.2 812.5,183.0 814.0,183.7 815.8,183.9 817.2,184.3 818.5,185.0 819.5,186.0 821.0,186.8 822.8,186.7 824.3,186.8 824.4,186.4 822.8,186.1 821.3,186.1 820.1,185.5 819.0,184.2 817.5,183.3 815.9,182.8 814.6,182.6 813.3,181.9 812.0,180.9Z"/>
<path d="M808.4,184.1 810.2,184.5 812.0,184.0 813.4,183.9 815.0,183.3 816.3,183.2 817.9,182.7 819.3,182.1 820.7,182.0 822.1,182.2 823.3,182.9 824.3,183.8 824.7,183.4 823.6,182.3 822.2,181.5 820.6,181.1 819.0,181.2 817.5,181.6 816.2,181.9 814.6,182.0 813.3,182.4 811.6,182.4 810.6,182.7 809.4,182.5Z"/>
<path d="M805.7,186.1 807.0,186.6 808.1,187.4 809.1,188.3 809.7,189.5 810.5,190.8 811.8,191.8 812.1,191.4 811.1,190.5 810.5,189.1 809.9,187.6 808.9,186.4 807.6,185.3 806.1,184.6Z"/>
<path d="M804.3,189.0 805.4,189.7 806.1,190.8 807.0,192.1 808.0,193.4 808.8,194.7 810.1,195.8 811.6,196.5 813.3,196.7 814.8,197.2 814.9,196.7 813.4,196.1 811.9,195.9 810.7,195.2 809.6,194.2 808.9,192.8 808.1,191.4 807.3,190.0 806.2,188.5 804.7,187.4Z"/>
<path d="M803.1,191.8 804.7,191.9 806.5,192.1 808.0,192.9 808.2,192.5 806.6,191.4 804.9,190.9 803.1,190.4Z"/>
<path d="M804.2,195.3 805.7,194.9 807.3,195.2 809.0,195.7 809.2,195.3 807.5,194.5 805.5,193.9 803.5,194.1Z"/>
<path d="M804.9,198.3 806.7,198.0 808.2,198.4 810.0,198.7 811.9,198.3 813.7,197.8 813.6,197.5 811.8,197.8 810.2,198.0 808.4,197.6 806.5,197.0 804.8,197.2Z"/>
<path d="M806.0,201.5 807.4,200.7 808.6,199.5 809.8,198.6 811.0,197.9 810.8,197.5 809.3,198.0 808.0,198.8 806.9,199.6 805.7,200.1Z"/>
<path d="M808.4,204.1 809.7,203.5 810.9,201.9 812.3,201.2 813.9,200.7 813.8,200.2 812.0,200.5 810.2,201.3 809.2,202.3 807.2,203.1Z"/>
<path d="M810.3,206.7 811.0,204.5 810.9,202.4 811.6,200.7 811.2,200.5 810.1,202.4 809.9,204.1 809.3,205.6Z"/>
<path d="M812.2,208.9 812.7,207.2 813.0,205.5 813.0,203.7 812.5,202.0 812.2,202.1 812.4,203.7 812.3,205.3 811.8,206.9 811.2,208.4Z"/>
<path d="M812.6,212.3 814.1,212.3 815.5,212.6 817.1,213.0 818.4,213.7 819.7,214.6 821.0,215.6 822.7,216.1 824.0,217.0 825.7,217.3 825.8,216.8 824.4,216.5 823.0,215.3 821.6,214.8 820.3,213.8 819.0,212.6 817.5,211.7 815.9,211.2 814.1,210.6 812.3,210.6Z"/>
<path d="M813.1,215.0 815.0,214.5 816.6,214.1 818.2,213.6 819.7,213.9 821.2,214.6 822.7,215.3 822.8,215.1 821.4,214.2 819.8,213.4 818.1,213.0 816.4,213.3 814.7,213.6 813.3,214.0Z"/>
<path d="M814.0,218.1 815.5,217.2 816.9,216.7 818.3,216.3 819.6,216.4 821.2,216.4 822.7,215.8 823.8,214.6 824.7,213.3 825.5,212.0 825.3,211.9 824.3,213.1 823.4,214.3 822.5,215.3 821.2,215.8 819.7,215.8 818.1,215.5 816.6,215.9 815.1,216.4 814.0,217.1Z"/>
<path d="M813.9,221.0 815.8,220.8 817.7,220.5 819.4,220.6 821.2,219.8 821.1,219.5 819.4,220.1 817.5,219.8 815.8,220.0 814.1,220.0Z"/>
<path d="M813.4,224.4 815.0,224.9 816.1,225.8 817.8,226.4 819.5,226.8 821.3,226.7 823.0,226.4 824.6,226.3 824.6,225.9 822.9,225.8 821.3,225.9 819.8,225.9 818.2,225.4 816.9,224.8 815.4,223.6 814.0,223.0Z"/>
<path d="M813.1,227.3 815.0,227.0 816.6,226.4 817.9,226.3 819.5,225.9 821.1,225.4 822.5,225.4 824.1,225.4 825.6,225.5 827.1,225.8 827.2,225.3 825.7,224.9 824.1,224.6 822.5,224.5 820.8,224.4 819.4,224.8 817.9,224.9 816.1,225.0 814.7,225.5 813.5,225.7Z"/>
<path d="M811.2,229.5 811.7,231.0 812.0,232.6 811.6,234.1 811.2,235.7 810.7,237.3 810.2,238.9 809.7,240.6 810.0,240.7 810.6,239.1 811.2,237.5 811.8,235.9 812.4,234.3 812.9,232.4 812.6,230.7 812.1,228.9Z"/>
<path d="M809.5,232.8 811.1,233.3 812.9,233.5 814.0,234.1 815.9,234.4 817.4,234.7 819.1,234.7 820.5,235.2 820.7,234.7 819.1,234.0 817.6,233.8 816.1,233.3 814.7,233.0 813.1,232.0 811.7,231.7 810.4,231.1Z"/>
<path d="M808.6,236.0 810.4,236.0 812.2,235.8 813.8,234.8 815.2,233.6 816.5,232.7 817.9,232.1 819.4,231.9 821.0,231.8 822.6,231.0 824.1,230.7 824.0,230.2 822.3,230.4 821.0,231.0 819.2,231.0 817.5,231.2 815.8,231.7 814.3,232.6 813.1,233.6 812.0,234.2 810.4,234.4 809.0,234.3Z"/>
<path d="M807.3,242.3 809.3,241.5 810.7,240.1 812.0,239.2 813.4,238.1 814.5,236.6 814.1,236.3 812.9,237.4 811.5,238.2 809.8,239.1 808.7,240.0 807.5,240.5Z"/>
<path d="M806.9,245.1 808.4,244.9 809.8,245.5 811.3,246.0 813.1,245.9 814.7,245.3 816.3,245.3 816.3,244.9 814.5,244.9 813.1,245.4 811.6,245.4 810.1,244.7 808.4,244.0 806.6,244.1Z"/>
<path d="M808.0,248.5 808.8,246.9 809.9,246.1 811.2,245.7 812.6,245.5 814.1,245.7 815.6,245.9 817.2,245.8 817.2,245.4 815.7,245.4 814.2,245.1 812.6,244.8 810.9,244.9 809.3,245.3 807.8,246.4 807.2,247.5Z"/>
<path d="M808.4,251.7 810.1,251.6 811.6,251.5 813.1,250.9 814.5,250.0 815.8,249.7 817.3,249.5 818.8,249.5 818.8,249.2 817.3,249.0 815.7,249.1 814.1,249.4 812.9,250.1 811.5,250.4 810.0,250.4 808.6,250.4Z"/>
<path d="M810.8,257.6 811.7,256.2 811.9,254.4 811.9,252.8 812.3,251.4 812.0,251.3 811.4,252.8 811.2,254.3 811.0,255.7 810.2,256.8Z"/>
<path d="M811.7,260.8 813.4,260.9 814.9,261.4 816.3,262.3 818.1,263.1 819.4,264.1 819.7,263.8 818.3,262.6 816.8,261.8 815.3,260.6 813.5,259.8 811.6,259.6Z"/>
<path d="M812.8,263.8 814.1,264.4 815.2,265.5 816.6,266.5 818.3,267.2 819.5,268.2 821.3,268.6 821.4,268.3 819.9,267.8 818.5,266.6 817.1,265.9 815.9,264.8 814.5,263.4 812.8,262.6Z"/>
<path d="M815.5,268.4 816.9,266.8 817.5,264.9 818.7,263.7 819.2,261.9 818.9,261.8 818.3,263.4 816.9,264.7 816.3,266.3 815.2,267.4Z"/>
<path d="M819.2,271.3 820.7,270.8 822.6,270.3 824.3,270.4 824.4,270.1 822.4,269.7 820.5,269.9 818.4,270.4Z"/>
<path d="M823.0,274.0 822.6,272.0 822.3,270.4 822.8,268.9 822.3,268.8 821.5,270.4 821.4,272.2 821.4,273.5Z"/>
<path d="M835.9,278.8 834.5,277.7 833.4,276.7 832.8,275.4 832.4,275.5 832.8,277.2 833.7,278.5 834.6,279.4Z"/>
<path d="M840.4,278.5 840.6,276.5 841.6,275.1 842.2,273.1 841.8,273.0 841.0,274.6 839.5,276.3 839.0,278.1Z"/>
<path d="M848.7,275.1 848.5,273.8 847.8,272.3 846.8,271.0 846.6,271.2 847.4,272.5 847.8,273.9 848.1,275.6Z"/>
<path d="M856.1,269.7 855.9,268.1 855.3,266.4 855.4,264.8 855.8,263.2 855.5,263.1 854.9,264.7 854.6,266.6 855.0,268.2 855.0,270.0Z"/>
<path d="M863.0,263.9 861.8,263.2 860.5,262.8 859.1,262.8 859.1,263.2 860.2,263.3 861.3,264.0 862.2,264.8Z"/>
<path d="M866.4,261.1 864.8,260.5 862.9,260.7 861.3,261.4 859.7,262.0 859.8,262.2 861.4,261.8 862.9,261.3 864.5,261.2 865.9,261.9Z"/>
<path d="M662.6,269.6 664.4,269.8 665.6,270.6 667.6,270.8 669.0,271.5 670.6,272.2 670.8,271.7 669.4,270.9 667.7,269.8 666.3,269.6 664.6,268.5 663.0,268.1Z"/>
<path d="M660.3,276.3 661.6,276.6 663.4,276.5 664.7,276.9 666.5,277.0 668.2,276.6 669.7,276.1 669.6,275.6 668.0,275.9 666.6,276.1 665.1,275.9 663.4,275.2 662.0,275.1 660.3,274.5Z"/>
<path d="M658.9,279.3 660.1,280.1 660.9,281.3 662.0,282.7 662.4,282.4 661.6,280.9 660.7,279.2 659.2,277.9Z"/>
<path d="M656.1,285.6 656.9,286.6 658.6,287.3 659.6,288.3 660.5,289.4 661.4,290.7 662.4,291.9 662.7,291.7 661.8,290.4 661.0,289.1 660.1,287.7 658.9,286.5 657.7,285.9 656.5,284.5Z"/>
<path d="M653.5,299.7 655.3,299.0 656.9,299.0 658.5,299.3 660.4,299.0 662.1,299.2 662.1,298.8 660.3,298.5 658.7,298.6 656.9,298.1 654.9,297.9 653.3,298.4Z"/>
<path d="M654.0,303.2 655.5,302.9 657.3,302.5 658.8,302.8 660.3,303.5 661.9,304.2 662.1,303.8 660.6,302.9 659.0,302.0 657.1,301.4 655.3,301.6 653.4,301.9Z"/>
<path d="M654.3,306.8 655.6,305.6 656.3,303.8 657.0,302.5 657.2,300.7 657.3,299.2 656.9,299.1 656.5,300.6 656.2,302.0 655.2,303.4 654.7,304.5 653.5,305.3Z"/>
<path d="M655.5,313.6 656.4,311.9 657.0,310.3 657.9,309.0 659.0,307.9 660.1,306.7 661.0,305.3 660.7,305.0 659.7,306.3 658.5,307.4 657.2,308.5 656.1,309.9 655.4,311.4 654.7,312.6Z"/>
<path d="M656.0,317.0 658.0,316.4 659.6,315.2 661.0,313.9 662.7,313.4 662.6,313.0 660.7,313.5 659.2,314.6 657.8,315.5 656.2,315.9Z"/>
<path d="M656.9,324.0 658.1,324.6 659.5,325.1 660.4,326.0 661.3,327.1 662.8,328.0 663.1,327.5 662.0,326.7 661.2,325.3 660.1,324.0 658.8,323.2 657.3,322.3Z"/>
<path d="M657.7,327.5 658.7,326.5 659.5,325.9 660.4,325.7 660.4,325.2 659.1,325.1 657.9,325.5 657.1,325.8Z"/>
<path d="M656.4,337.6 657.4,338.5 657.9,339.7 658.2,341.0 658.6,342.5 659.6,343.8 660.0,343.5 659.2,342.4 659.1,340.9 658.9,339.3 658.3,337.6 657.2,336.3Z"/>
<path d="M944.3,595.4 945.2,594.6 946.3,594.2 947.4,594.4 947.4,594.1 946.1,593.8 944.8,594.1 943.8,594.7Z"/>
<path d="M949.2,601.7 949.9,600.9 950.6,600.2 951.6,599.9 951.6,599.7 950.4,599.9 949.5,600.5 948.6,601.3Z"/>
<path d="M907.9,300.8 908.9,300.5 909.9,300.1 910.9,299.8 910.9,299.6 909.8,299.6 908.8,299.7 907.7,299.8Z"/>
<path d="M912.7,309.6 913.2,309.5 913.8,309.3 914.4,309.1 914.4,308.8 913.7,308.9 913.2,308.9 912.5,308.8Z"/>
</g>
<g fill="#d9d9d9" stroke="#6f747a" stroke-width=".4" stroke-linejoin="round">
<path d="M895.1,129.3 894.3,129.0 894.7,128.1 895.5,127.9 895.8,128.8Z"/>
<path d="M893.6,128.5 892.6,128.5 892.2,127.5 892.8,126.9 893.8,127.2 894.3,128.1Z"/>
<path d="M892.7,127.8 892.8,128.6 892.1,129.0 891.3,128.5 891.4,127.7 891.9,127.1Z"/>
<path d="M889.7,129.1 889.0,128.7 889.6,127.6 890.7,127.5 890.6,128.8Z"/>
<path d="M889.7,129.0 889.9,128.9 890.2,128.8 890.3,129.2 890.3,129.7 890.0,129.8 889.7,129.6 889.6,129.4Z"/>
<path d="M891.4,130.7 890.8,130.7 890.4,130.3 890.1,129.5 890.7,129.2 891.3,128.8 891.7,129.6 891.8,130.3Z"/>
<path d="M886.8,129.5 887.3,129.5 887.8,129.7 887.8,130.0 887.6,130.2 887.1,130.2 886.6,130.0 886.4,129.7Z"/>
<path d="M886.1,129.6 885.7,129.7 885.3,129.2 885.6,128.7 886.0,128.6 886.3,128.9 886.5,129.4Z"/>
<path d="M887.5,130.8 886.9,131.2 886.0,131.2 885.3,130.4 886.0,129.7 887.1,130.0Z"/>
<path d="M882.5,131.3 882.3,131.1 882.3,130.8 882.9,130.7 883.4,130.9 883.8,131.1 883.6,131.5 883.0,131.6Z"/>
<path d="M885.7,131.9 886.3,132.1 886.0,132.8 885.4,133.1 884.8,132.6 885.2,132.0Z"/>
<path d="M885.0,131.8 884.0,131.7 883.5,131.2 883.4,130.3 884.4,129.6 885.2,129.7 885.7,130.1 885.5,130.8Z"/>
<path d="M882.2,136.7 880.7,136.7 880.1,135.8 879.8,134.8 881.1,134.6 882.6,134.5 882.5,135.7Z"/>
<path d="M882.7,135.5 882.3,134.8 882.3,134.2 883.0,133.9 884.0,134.3 884.0,135.0 883.7,135.6Z"/>
<path d="M881.3,134.0 881.0,134.1 880.7,134.0 880.8,133.7 881.0,133.4 881.3,133.2 881.5,133.4 881.5,133.8Z"/>
<path d="M878.6,134.8 878.3,135.3 877.7,135.3 877.3,134.9 877.3,134.2 877.9,134.0 878.4,134.3Z"/>
<path d="M878.0,136.6 879.1,135.7 880.1,136.7 880.2,137.9 879.5,139.0 877.9,138.8 877.7,137.5Z"/>
<path d="M879.1,135.9 878.7,135.6 878.6,135.1 878.8,134.7 879.2,134.9 879.7,135.3 879.4,135.7Z"/>
<path d="M874.9,136.2 875.0,135.4 875.5,135.6 875.7,136.2 875.8,136.9 875.3,136.8Z"/>
<path d="M878.6,137.8 878.9,138.3 878.6,138.8 877.7,138.8 877.0,138.5 876.9,138.0 877.3,137.6 878.1,137.2Z"/>
<path d="M874.6,137.6 874.2,138.0 873.7,137.7 873.7,137.2 874.1,137.0 874.6,137.1Z"/>
<path d="M873.7,141.1 873.3,141.4 872.5,141.4 871.8,140.7 872.1,140.1 872.2,139.4 873.2,139.7 873.9,140.5Z"/>
<path d="M871.5,141.1 872.3,140.5 873.2,140.8 873.1,141.7 872.1,142.0Z"/>
<path d="M873.2,141.0 873.2,139.9 873.7,138.9 875.0,138.9 875.7,139.9 875.2,141.0 874.2,141.6Z"/>
<path d="M871.7,143.4 871.5,144.4 870.6,144.4 869.6,144.4 869.3,143.2 869.8,142.3 870.7,142.0 871.6,142.3Z"/>
<path d="M869.5,143.7 868.6,143.0 869.4,142.1 870.3,142.3 870.5,143.0Z"/>
<path d="M872.6,144.4 873.1,145.5 872.0,146.2 871.3,145.2 871.7,144.0Z"/>
<path d="M868.9,144.3 868.8,144.7 868.5,145.1 867.8,145.0 867.2,144.7 867.2,144.2 867.7,143.9 868.3,144.1Z"/>
<path d="M869.0,146.7 869.0,147.2 868.6,147.4 868.3,147.2 868.4,146.6 868.7,146.2Z"/>
<path d="M868.4,145.9 868.7,145.1 869.5,144.4 870.4,145.0 870.5,146.1 869.8,146.8 868.8,146.9Z"/>
<path d="M869.5,145.7 870.1,144.8 870.8,144.3 871.7,144.5 872.5,145.2 872.0,146.2 871.1,146.6 870.3,146.5Z"/>
<path d="M866.7,150.1 865.5,148.9 866.2,147.5 867.7,147.9 868.4,149.1Z"/>
<path d="M866.5,146.5 866.1,147.0 865.3,146.8 865.1,146.0 866.0,145.8Z"/>
<path d="M866.7,149.5 865.6,148.4 866.0,147.7 867.2,147.9 867.8,149.2Z"/>
<path d="M862.7,147.1 862.3,146.4 863.3,146.3 864.1,146.5 864.3,147.2 863.5,147.5Z"/>
<path d="M864.8,147.8 864.8,148.4 864.7,148.9 864.2,149.3 863.5,149.4 863.1,149.0 863.5,148.4 864.1,148.1Z"/>
<path d="M858.4,149.3 859.2,148.0 860.4,147.9 861.0,148.9 860.2,150.0 859.1,150.2Z"/>
<path d="M860.1,149.0 859.0,148.9 859.0,147.6 859.4,146.6 860.4,146.0 860.9,147.2 860.8,148.3Z"/>
<path d="M858.9,151.7 858.9,150.7 859.7,149.9 861.1,149.5 861.7,150.6 861.1,151.6 860.0,151.9Z"/>
<path d="M858.2,149.8 858.2,151.2 857.3,150.9 856.6,150.4 856.5,149.0 857.1,148.0 857.9,148.6Z"/>
<path d="M855.5,150.2 855.3,150.5 854.7,150.4 854.6,150.0 855.3,149.9Z"/>
<path d="M852.6,151.5 853.8,152.3 853.3,153.5 852.1,153.7 851.7,152.8Z"/>
<path d="M853.0,148.7 853.6,149.2 854.0,149.9 853.5,150.7 852.6,151.3 852.0,150.5 851.7,149.8 851.9,148.7Z"/>
<path d="M849.8,155.9 848.8,156.0 848.4,155.2 848.7,154.3 849.8,153.9 850.3,154.7 850.7,155.5Z"/>
<path d="M850.9,152.6 850.4,153.4 849.6,154.2 848.8,153.3 848.4,152.3 849.3,151.8 850.2,151.9Z"/>
<path d="M848.8,153.4 849.4,153.1 850.1,153.8 850.0,154.7 849.6,155.2 849.1,154.4Z"/>
<path d="M846.8,154.2 846.9,153.7 847.4,153.6 848.1,153.7 848.2,154.4 847.7,154.8 847.1,154.7Z"/>
<path d="M846.2,157.0 847.3,155.8 848.2,156.4 848.1,157.3 847.0,157.6Z"/>
<path d="M846.4,158.5 845.9,159.5 844.9,159.1 844.6,158.2 845.0,157.3 846.0,157.5Z"/>
<path d="M844.0,156.1 844.5,156.8 844.2,157.3 843.7,157.0 843.4,156.3Z"/>
<path d="M847.0,155.5 847.4,156.7 847.1,157.5 846.5,157.7 845.9,157.1 845.6,156.1 846.1,155.6Z"/>
<path d="M843.0,159.2 843.7,158.7 844.2,158.9 844.3,159.5 843.4,159.8Z"/>
<path d="M843.4,161.3 843.0,162.1 842.3,162.4 841.7,161.9 842.1,161.2 842.8,160.5Z"/>
<path d="M842.8,159.7 842.5,158.5 843.9,158.0 845.1,158.3 844.8,159.7 843.6,160.5Z"/>
<path d="M839.0,160.0 839.1,159.7 839.5,159.9 839.8,160.3 839.7,160.7 839.6,160.9 839.3,161.0 839.0,160.4Z"/>
<path d="M839.7,164.6 839.7,163.3 840.2,162.3 841.1,161.7 841.1,163.0 840.7,164.4Z"/>
<path d="M838.9,160.6 839.4,160.9 839.5,161.5 839.2,161.8 838.7,161.8 838.4,161.2 838.5,160.6Z"/>
<path d="M839.0,161.5 839.1,162.5 837.9,162.8 837.0,162.4 836.4,161.8 837.1,161.0 838.0,160.2 839.0,160.7Z"/>
<path d="M836.3,162.6 836.5,161.8 837.3,161.9 837.6,162.7 837.0,163.1Z"/>
<path d="M837.8,163.4 838.3,162.7 839.1,163.1 839.5,163.6 839.6,164.3 839.0,164.6 838.2,164.7 837.8,164.1Z"/>
<path d="M837.6,164.4 837.7,165.3 837.0,165.9 836.4,165.9 836.1,165.3 836.3,164.6 836.8,164.2Z"/>
<path d="M834.2,163.8 834.4,162.6 835.2,162.0 835.5,162.9 835.3,163.8 834.7,164.2Z"/>
<path d="M833.8,164.1 834.5,164.8 833.3,165.4 831.9,165.3 832.6,164.2Z"/>
<path d="M831.1,167.1 830.3,166.9 830.0,166.2 830.3,165.8 831.0,165.7 831.2,166.4Z"/>
<path d="M831.9,166.6 831.5,165.7 832.7,165.6 833.8,165.4 834.4,166.3 833.9,167.0 833.1,167.5 832.1,167.3Z"/>
<path d="M834.3,168.3 833.5,167.8 834.3,167.3 835.5,167.5 836.0,168.2 835.1,168.5Z"/>
<path d="M830.9,170.7 830.5,171.7 829.2,171.7 829.0,170.3 830.0,169.7Z"/>
<path d="M831.8,170.6 831.2,170.4 830.9,169.9 831.1,169.2 831.8,169.3 832.3,169.5 832.1,170.1Z"/>
<path d="M830.9,169.1 831.4,170.3 831.1,171.6 830.3,170.8 830.1,169.6Z"/>
<path d="M826.1,170.2 826.8,171.4 826.1,171.9 825.1,171.5 825.4,170.4Z"/>
<path d="M825.8,171.9 825.7,171.3 826.3,170.8 827.1,170.9 827.3,171.5 827.5,172.1 826.9,172.5 826.0,172.6Z"/>
<path d="M824.1,170.4 824.7,171.6 823.7,171.9 822.5,171.7 822.2,170.2 823.3,169.9Z"/>
<path d="M826.3,171.9 826.5,172.3 826.5,172.7 826.1,172.8 825.7,172.5 825.5,172.1 825.7,171.7Z"/>
<path d="M824.1,172.8 823.1,172.5 823.2,171.5 824.2,171.2 825.0,171.7 825.0,172.6Z"/>
<path d="M821.6,170.8 822.5,170.5 823.1,171.5 823.5,172.5 823.1,173.4 822.2,173.3 821.4,172.7 820.9,171.6Z"/>
<path d="M823.0,171.4 823.5,172.3 823.0,173.6 822.2,174.0 821.7,173.1 822.3,171.8Z"/>
<path d="M822.6,170.4 823.0,171.3 822.4,172.0 821.7,172.4 821.1,172.0 820.8,171.3 820.8,170.3 821.8,170.1Z"/>
<path d="M819.6,174.2 818.7,174.5 818.5,173.7 818.9,172.5 819.8,172.2 820.1,173.0Z"/>
<path d="M818.9,175.5 818.7,176.1 818.1,176.2 817.7,175.8 817.4,175.3 817.8,174.9 818.3,174.7 818.8,174.9Z"/>
<path d="M818.3,172.9 818.8,172.5 819.2,172.1 819.8,172.4 819.7,172.9 819.5,173.3 819.1,173.8 818.5,173.5Z"/>
<path d="M813.9,175.5 814.3,174.4 815.1,173.6 816.0,174.3 816.0,175.4 815.5,176.1 814.7,176.1Z"/>
<path d="M816.7,177.8 817.0,177.5 817.2,177.3 817.5,177.5 817.4,178.0 817.2,178.3 816.9,178.5 816.7,178.2Z"/>
<path d="M813.1,177.9 813.1,178.6 812.8,178.9 812.2,178.7 812.0,178.1 812.5,177.8Z"/>
<path d="M811.9,177.8 812.5,176.9 813.5,177.2 814.1,178.0 814.3,179.1 813.5,179.3 812.7,178.9Z"/>
<path d="M812.3,179.5 812.8,179.4 813.0,180.0 812.8,180.3 812.3,180.3Z"/>
<path d="M809.8,180.4 808.8,180.7 808.2,179.7 808.8,179.0 809.6,179.4Z"/>
<path d="M812.1,179.5 811.7,180.7 810.4,181.2 810.0,180.3 810.9,179.5Z"/>
<path d="M807.6,180.0 808.4,179.5 809.4,179.8 809.7,180.4 809.2,180.9 808.2,180.9Z"/>
<path d="M808.3,180.5 808.9,181.1 807.8,181.5 806.4,181.3 806.0,180.6 806.5,180.1 807.6,179.9Z"/>
<path d="M809.1,180.5 809.5,181.2 808.3,181.4 807.1,181.7 806.6,181.1 806.5,180.4 807.6,180.0 808.6,180.1Z"/>
<path d="M803.5,186.1 802.9,186.1 802.6,185.9 802.4,185.6 802.5,185.2 803.1,184.9 803.6,185.1 803.8,185.6Z"/>
<path d="M801.7,183.4 803.3,183.3 803.6,184.7 802.8,185.6 801.5,185.8 800.8,184.6Z"/>
<path d="M802.5,184.7 803.2,185.2 802.9,185.8 802.0,185.5 802.0,184.9Z"/>
<path d="M802.5,187.8 802.3,187.3 802.9,187.1 803.4,187.3 803.1,187.7Z"/>
<path d="M803.3,185.9 802.9,186.1 802.5,186.3 802.1,186.1 802.1,185.8 802.5,185.6 803.0,185.4 803.3,185.6Z"/>
<path d="M799.0,190.5 800.3,189.8 800.9,190.8 800.3,192.0 799.4,191.8Z"/>
<path d="M802.1,196.6 800.5,197.1 799.5,196.1 800.7,195.2 802.4,195.5Z"/>
<path d="M802.3,195.6 801.8,195.2 801.2,194.8 801.5,194.5 802.0,194.4 802.6,194.4 802.8,195.0 803.0,195.5Z"/>
<path d="M800.6,194.6 800.7,195.4 799.5,195.3 799.1,194.6 799.8,194.3Z"/>
<path d="M803.2,197.5 803.5,198.3 802.3,198.6 801.1,198.8 800.9,198.0 801.7,197.3 802.8,197.0Z"/>
<path d="M804.1,197.4 803.7,198.1 803.0,197.8 802.4,197.4 802.8,196.7 803.4,196.2 803.9,196.9Z"/>
<path d="M802.7,196.9 803.1,196.8 803.3,197.0 803.3,197.2 803.1,197.5 802.6,197.5 802.6,197.2Z"/>
<path d="M805.3,200.4 804.6,200.9 803.7,200.9 803.0,200.0 803.7,199.2 804.2,198.6 805.2,198.6 805.4,199.6Z"/>
<path d="M803.9,201.7 804.3,200.2 805.5,200.2 805.7,201.8 804.6,202.5Z"/>
<path d="M802.8,202.4 803.4,202.3 803.6,202.9 803.4,203.3 803.1,203.9 802.5,203.5 802.2,203.1 802.4,202.6Z"/>
<path d="M805.1,205.3 805.1,204.9 805.4,204.5 805.9,204.6 806.2,205.0 806.0,205.5 805.7,205.8 805.3,205.7Z"/>
<path d="M803.6,204.3 804.3,204.0 805.2,204.2 805.3,205.0 804.9,205.6 804.2,206.2 803.3,205.7 803.3,204.9Z"/>
<path d="M807.3,203.2 808.3,204.2 807.8,205.6 806.3,205.6 805.2,205.1 805.0,203.9 806.0,203.2Z"/>
<path d="M807.1,210.3 806.4,209.1 807.6,207.9 808.8,208.8 808.6,209.8Z"/>
<path d="M808.7,205.9 808.5,205.4 809.1,205.2 809.5,205.6 809.3,206.0Z"/>
<path d="M808.3,211.6 808.2,210.7 808.7,210.2 809.4,210.2 809.9,210.7 809.9,211.4 809.5,212.1 808.9,212.1Z"/>
<path d="M810.0,208.5 810.4,207.6 811.3,207.6 812.0,208.4 812.2,209.5 811.2,209.6Z"/>
<path d="M810.0,209.6 810.7,210.7 810.3,211.2 809.6,211.3 808.8,210.6 808.3,209.7 808.9,209.3Z"/>
<path d="M810.9,214.0 810.3,214.6 809.9,214.1 810.1,213.3 810.4,212.7 810.9,212.4 811.4,212.7 811.4,213.5Z"/>
<path d="M811.5,211.4 811.9,210.9 812.8,211.3 813.2,212.3 813.7,213.4 812.9,213.5 812.0,213.3 811.2,212.2Z"/>
<path d="M811.1,216.3 810.7,216.0 810.6,215.4 810.9,214.9 811.5,214.9 812.0,215.6 811.8,216.4Z"/>
<path d="M812.1,213.8 812.8,214.0 812.9,214.6 812.7,215.1 812.0,215.1 811.3,214.7 811.6,214.1Z"/>
<path d="M808.1,214.2 809.7,214.2 810.5,215.3 810.5,216.6 809.1,216.6 808.0,215.8Z"/>
<path d="M810.1,219.2 811.0,219.0 811.5,219.7 811.3,220.3 810.6,220.3 809.8,219.8Z"/>
<path d="M811.6,218.8 812.1,219.2 811.9,219.5 811.4,219.6 811.1,219.0Z"/>
<path d="M812.9,218.4 813.9,218.6 814.2,219.7 813.2,220.4 812.0,220.2 812.1,219.0Z"/>
<path d="M811.6,219.6 811.3,220.0 810.8,219.8 810.1,219.6 810.3,219.0 810.7,218.7 811.3,218.7 811.9,219.0Z"/>
<path d="M811.1,220.9 811.6,221.4 811.6,222.1 811.2,222.4 810.6,222.5 810.5,221.7 810.7,221.1Z"/>
<path d="M811.7,223.9 810.2,223.5 810.4,221.9 811.6,221.3 812.8,221.8 812.6,223.0Z"/>
<path d="M811.7,222.7 811.2,223.5 810.1,223.1 809.4,222.2 809.9,221.4 810.7,221.1 811.8,221.0 811.9,222.0Z"/>
<path d="M811.4,227.9 810.7,227.2 810.2,226.3 810.8,225.7 811.4,225.4 812.1,225.7 812.5,226.5 812.0,227.2Z"/>
<path d="M810.8,226.3 810.7,225.3 811.5,224.9 812.1,225.2 812.4,225.8 812.1,226.6 811.3,226.9Z"/>
<path d="M810.7,228.8 810.4,229.6 809.6,229.9 809.1,229.1 809.7,228.3Z"/>
<path d="M809.3,227.6 810.1,227.1 811.1,227.5 811.4,228.4 811.1,229.0 810.5,229.7 809.5,229.3 809.2,228.4Z"/>
<path d="M810.1,229.7 810.0,229.2 810.2,228.9 810.6,229.2 810.9,229.7 810.8,230.2 810.5,230.0Z"/>
<path d="M809.9,231.7 809.6,232.3 809.4,232.8 808.7,232.5 807.9,232.1 808.0,231.5 808.5,231.2 809.1,231.2Z"/>
<path d="M807.4,231.0 808.1,230.4 808.8,230.8 808.7,231.5 807.8,231.5Z"/>
<path d="M808.1,236.1 807.0,235.1 806.8,233.7 808.1,233.3 809.1,234.1 809.1,235.3Z"/>
<path d="M808.2,234.0 807.8,234.0 807.5,233.8 807.3,233.4 807.6,233.1 808.0,232.9 808.3,233.2 808.4,233.6Z"/>
<path d="M807.1,238.3 807.2,237.8 807.7,237.5 808.3,237.5 808.5,238.0 808.2,238.5 807.6,238.6Z"/>
<path d="M805.7,237.6 806.3,238.0 805.7,239.0 804.5,239.7 803.8,239.3 804.4,238.3Z"/>
<path d="M805.9,237.2 805.2,237.3 805.2,236.6 805.9,235.7 806.3,236.2Z"/>
<path d="M803.9,240.4 804.2,240.0 804.8,240.0 805.5,240.1 805.8,240.7 805.6,241.1 805.3,241.3 804.6,241.0Z"/>
<path d="M806.4,240.2 805.4,241.2 804.2,240.6 804.6,239.5 805.7,239.1Z"/>
<path d="M803.5,240.7 804.4,241.6 804.2,242.8 803.2,242.8 802.8,241.9Z"/>
<path d="M806.4,245.6 805.7,246.0 805.4,245.5 805.4,245.0 805.9,244.5 806.6,244.3 806.8,244.9Z"/>
<path d="M805.0,243.6 803.8,243.7 803.7,242.5 804.5,241.5 805.4,242.5Z"/>
<path d="M805.7,248.2 806.1,248.0 806.6,247.9 806.9,248.2 806.6,248.6 806.0,248.6Z"/>
<path d="M804.4,247.5 805.0,246.3 806.3,247.3 806.6,249.0 805.0,249.1Z"/>
<path d="M808.3,250.6 806.8,251.1 805.6,251.3 804.8,250.5 805.2,249.4 806.6,248.9 807.8,249.5Z"/>
<path d="M807.8,251.1 806.7,251.9 805.7,251.8 805.9,250.7 806.8,249.8 807.7,250.1Z"/>
<path d="M808.5,249.9 808.1,251.2 807.5,252.0 806.5,252.7 805.5,251.9 805.5,250.7 806.1,249.9 807.3,249.4Z"/>
<path d="M808.2,255.0 808.7,254.7 809.3,254.6 809.6,254.9 809.6,255.3 808.9,255.5 808.3,255.4Z"/>
<path d="M808.4,253.0 808.7,254.1 807.7,254.8 806.2,253.6 807.1,252.5Z"/>
<path d="M810.0,255.6 811.2,256.2 810.8,257.6 809.4,257.5 808.8,256.2Z"/>
<path d="M810.6,257.0 810.5,257.5 810.0,257.5 809.6,257.4 809.5,256.9 809.8,256.7 810.2,256.7Z"/>
<path d="M807.0,257.9 806.5,257.8 806.3,257.4 806.6,257.0 807.1,257.1 807.3,257.5Z"/>
<path d="M810.0,262.0 808.7,260.9 809.6,260.0 810.8,259.6 811.7,260.6 811.7,261.9Z"/>
<path d="M810.6,260.1 811.3,259.8 811.8,260.3 811.5,261.0 810.8,261.2 810.5,260.8Z"/>
<path d="M810.0,267.1 809.1,266.4 809.0,265.2 809.7,264.7 810.4,264.8 810.8,265.6 810.7,266.5Z"/>
<path d="M811.2,265.1 811.0,264.3 811.3,263.5 812.5,263.4 813.4,263.9 812.9,264.7 812.2,265.1Z"/>
<path d="M813.5,264.0 813.7,264.7 813.2,265.0 812.6,265.1 812.4,264.5 812.5,263.8 813.0,263.5Z"/>
<path d="M812.7,267.6 813.0,267.3 813.4,267.3 813.5,267.5 813.5,267.7 813.4,268.0 813.0,268.0 812.8,267.8Z"/>
<path d="M815.2,268.2 814.8,268.5 814.3,268.1 814.7,267.6 815.1,267.8Z"/>
<path d="M819.1,272.6 819.6,273.2 819.4,273.6 818.7,273.7 818.1,273.0 818.3,272.4Z"/>
<path d="M820.3,271.6 819.7,272.0 819.1,271.9 818.7,271.5 818.9,271.0 819.4,270.6 820.0,271.0Z"/>
<path d="M821.3,273.8 820.8,273.8 820.4,273.5 820.7,273.1 821.3,273.3Z"/>
<path d="M822.5,274.6 822.4,275.0 821.9,275.1 821.5,274.9 821.2,274.5 821.5,274.2 822.0,274.0 822.5,274.2Z"/>
<path d="M826.1,276.4 826.5,276.4 826.8,276.8 826.7,277.2 826.2,277.2 825.8,277.2 825.8,276.7Z"/>
<path d="M826.2,276.4 825.5,276.7 825.1,276.1 825.6,275.4 826.1,275.2 826.5,275.6Z"/>
<path d="M829.6,276.9 829.8,277.2 829.8,277.5 829.6,277.7 829.3,277.5 829.1,277.2 829.3,276.9Z"/>
<path d="M828.1,277.1 828.3,277.1 828.5,277.4 828.5,277.7 828.4,277.9 828.2,277.7 828.0,277.5 827.9,277.2Z"/>
<path d="M836.0,279.9 836.7,280.2 836.4,280.6 835.7,280.7 835.5,280.2Z"/>
<path d="M833.4,280.9 833.5,280.5 834.1,280.3 834.5,280.5 834.6,280.9 834.0,281.3 833.3,281.4Z"/>
<path d="M840.9,278.0 841.2,278.2 841.2,278.5 840.8,278.6 840.6,278.4 840.6,278.2Z"/>
<path d="M838.5,279.7 838.4,280.0 838.1,280.3 837.9,280.3 838.0,279.9 838.3,279.6Z"/>
<path d="M849.6,275.9 849.9,276.2 850.1,276.7 849.8,276.9 849.4,276.8 849.1,276.5 848.9,276.1 849.1,275.7Z"/>
<path d="M847.2,277.4 847.3,276.8 847.9,276.4 848.5,276.8 848.7,277.6 848.1,278.1 847.5,278.0Z"/>
<path d="M853.2,272.7 853.4,272.3 853.7,272.0 854.1,272.4 854.3,272.8 854.4,273.4 853.8,273.5 853.3,273.1Z"/>
<path d="M853.7,272.6 854.0,272.9 853.8,273.2 853.4,273.4 853.2,272.9 853.3,272.6Z"/>
<path d="M855.1,272.8 854.3,272.9 853.9,272.3 854.0,271.7 854.5,271.2 855.1,271.5 855.6,272.1Z"/>
<path d="M857.7,268.6 857.7,269.1 857.4,269.5 857.1,269.2 857.1,268.6 857.5,268.4Z"/>
<path d="M861.5,266.4 862.6,266.1 862.3,267.1 861.6,267.7 860.9,267.3Z"/>
<path d="M858.3,269.4 857.9,269.3 857.7,269.0 858.0,268.7 858.3,268.7 858.5,268.8 858.5,269.1Z"/>
<path d="M867.5,261.3 867.4,261.0 867.7,260.7 868.1,261.0 868.1,261.3 867.8,261.4Z"/>
<path d="M865.5,261.7 865.8,261.9 865.8,262.4 865.7,262.9 865.4,262.9 865.2,262.6 865.2,262.1Z"/>
<path d="M869.6,260.8 869.6,261.4 869.4,261.9 868.8,262.3 868.1,261.9 868.1,261.1 868.3,260.6 868.9,260.7Z"/>
<path d="M870.7,258.3 870.7,258.7 870.3,259.0 869.8,258.7 870.1,258.2 870.5,258.0Z"/>
<path d="M662.2,268.4 662.3,269.6 661.4,270.2 660.5,269.5 660.4,268.7 661.0,267.9Z"/>
<path d="M660.0,266.9 660.6,266.9 660.9,267.3 660.4,267.7 660.0,267.5Z"/>
<path d="M657.6,270.7 657.1,269.9 657.4,268.9 658.4,268.2 659.5,268.6 659.7,269.7 658.8,270.4Z"/>
<path d="M656.6,274.0 656.2,274.8 655.6,275.3 654.9,275.5 654.9,274.5 655.0,273.7 655.6,273.1 656.3,273.2Z"/>
<path d="M658.5,278.4 658.4,278.7 658.2,279.0 657.8,278.8 657.6,278.4 657.6,278.0 658.0,278.0 658.4,278.0Z"/>
<path d="M655.8,275.4 656.3,275.7 655.8,276.2 655.1,276.4 654.6,276.1 655.1,275.6Z"/>
<path d="M654.9,279.2 654.7,279.9 653.7,279.5 653.3,278.5 654.0,278.2Z"/>
<path d="M654.1,280.7 654.0,281.3 653.7,281.4 653.4,281.3 653.4,280.8 653.7,280.4 654.1,280.3Z"/>
<path d="M653.7,282.6 653.0,282.9 652.5,282.2 652.7,281.3 653.5,281.5 654.1,282.0Z"/>
<path d="M653.9,289.2 653.9,289.6 653.5,289.8 653.1,289.6 653.0,289.3 653.2,289.0 653.4,288.7 653.8,288.8Z"/>
<path d="M653.4,287.7 652.6,287.1 652.8,286.3 653.8,286.3 654.4,287.3Z"/>
<path d="M652.3,293.8 652.0,293.6 651.9,293.1 652.4,292.7 652.7,292.8 653.1,293.0 652.8,293.6Z"/>
<path d="M651.5,291.3 651.3,289.7 652.7,289.0 653.4,290.3 652.8,291.6Z"/>
<path d="M651.9,296.2 651.3,295.5 652.1,295.0 652.7,295.3 652.5,296.0Z"/>
<path d="M650.7,295.6 650.2,296.1 649.4,295.5 649.2,294.9 650.0,294.8Z"/>
<path d="M652.9,298.6 653.4,300.0 652.3,301.2 651.1,300.3 651.2,298.6Z"/>
<path d="M648.2,300.9 649.1,300.7 649.7,301.2 649.9,301.7 649.6,302.1 648.9,302.2 648.1,302.0 647.6,301.4Z"/>
<path d="M650.7,307.6 650.7,307.3 650.9,306.9 651.2,306.9 651.4,307.0 651.3,307.4 651.1,307.8 650.8,307.9Z"/>
<path d="M653.7,306.5 653.9,306.6 653.9,307.0 653.7,307.4 653.4,307.5 653.4,307.2 653.4,306.8Z"/>
<path d="M653.6,311.7 654.0,312.3 653.4,313.4 652.3,313.4 652.5,312.1Z"/>
<path d="M652.0,316.3 650.6,316.7 649.6,316.0 650.3,315.4 651.5,315.4Z"/>
<path d="M654.7,314.8 655.0,314.7 655.3,315.1 655.5,315.6 655.4,315.9 655.1,315.8 654.8,315.5 654.6,315.1Z"/>
<path d="M651.6,316.2 651.8,316.8 651.6,317.2 651.2,317.3 650.7,317.4 650.4,316.9 650.7,316.5 650.9,316.0Z"/>
<path d="M653.0,319.7 652.2,320.0 651.8,318.8 652.6,318.2 653.2,318.6Z"/>
<path d="M653.3,317.9 653.5,319.1 652.2,319.8 651.0,319.3 650.8,318.2 652.0,317.4Z"/>
<path d="M654.0,323.3 654.9,324.5 653.7,325.4 652.6,325.1 652.3,323.6Z"/>
<path d="M656.6,324.2 657.5,325.1 656.6,326.2 655.4,325.6 655.3,324.3Z"/>
<path d="M653.1,327.6 653.3,328.1 653.0,328.5 652.6,328.4 652.7,327.9Z"/>
<path d="M656.7,330.6 657.0,330.3 657.3,330.4 657.4,330.7 657.5,331.0 657.2,331.3 656.9,331.2 656.7,331.0Z"/>
<path d="M656.1,332.7 656.0,333.1 655.6,333.3 655.0,333.3 654.8,332.7 655.0,332.2 655.6,332.0 656.1,332.2Z"/>
<path d="M651.8,334.7 652.7,334.7 653.4,334.7 653.2,335.4 652.7,336.0 651.8,336.8 651.1,336.4 651.3,335.6Z"/>
<path d="M929.4,581.4 929.9,580.9 930.9,581.7 931.2,582.6 930.2,582.4Z"/>
<path d="M930.7,582.4 930.6,582.1 931.0,582.1 931.2,582.2 931.5,582.4 931.2,582.6 930.8,582.7Z"/>
<path d="M934.6,585.2 933.9,584.7 934.1,583.7 935.0,583.8 935.7,584.3 935.5,585.1Z"/>
<path d="M934.8,584.9 934.8,584.6 935.2,584.3 935.7,584.2 935.7,584.5 935.6,584.7 935.2,584.9Z"/>
<path d="M935.1,586.5 935.1,585.9 935.4,585.8 935.6,586.1 935.4,586.5Z"/>
<path d="M935.5,585.6 935.5,584.9 935.9,584.5 936.5,584.3 937.2,584.6 936.9,585.3 936.6,585.8 936.0,585.9Z"/>
<path d="M935.9,588.0 936.3,588.0 936.4,588.3 936.3,588.5 935.9,588.5 935.7,588.3 935.7,588.1Z"/>
<path d="M935.8,587.3 936.4,587.8 936.7,588.7 936.7,589.5 936.0,589.6 935.3,588.7 935.5,587.9Z"/>
<path d="M940.4,594.9 940.1,594.3 940.4,593.7 941.1,593.6 941.6,594.1 941.7,594.9 941.0,595.3Z"/>
<path d="M943.5,594.7 943.4,595.3 942.7,595.3 942.1,594.9 942.3,594.2 943.1,594.2Z"/>
<path d="M941.2,596.8 941.6,596.6 942.2,596.7 942.3,597.2 941.8,597.3 941.2,597.2Z"/>
<path d="M945.9,599.8 946.0,599.7 946.3,599.6 946.6,599.6 946.8,599.8 946.7,600.0 946.4,600.0 946.0,600.0Z"/>
<path d="M944.9,597.9 944.6,598.8 944.1,599.2 943.3,599.2 942.8,598.4 943.4,597.8 944.0,597.6Z"/>
<path d="M949.7,602.5 950.1,602.7 950.4,603.0 950.1,603.3 949.7,603.6 949.4,603.4 949.1,603.1 949.4,602.7Z"/>
<path d="M951.4,605.1 950.6,605.4 950.3,604.9 950.7,604.3 951.4,603.9 952.0,604.2 951.9,604.7Z"/>
<path d="M950.4,604.3 951.2,604.0 952.1,604.5 951.9,605.5 950.9,605.8 949.9,605.3Z"/>
<path d="M905.2,295.6 904.9,295.8 904.6,295.7 904.6,295.5 904.9,295.3Z"/>
<path d="M907.6,300.6 907.6,300.9 907.3,301.2 907.0,301.2 906.9,301.0 907.2,300.6 907.5,300.3Z"/>
<path d="M910.3,306.3 910.4,306.5 910.4,306.7 910.3,306.9 910.0,306.9 909.9,306.7 909.8,306.5 910.0,306.4Z"/>
</g>
<g fill="none" stroke="#6f747a" stroke-width=".5" stroke-linejoin="round">
<path d="M806.7,386.7 807.8,385.9 809.2,385.7 810.4,385.5 811.7,385.8 812.9,386.6 814.2,387.3 815.2,388.1 815.8,389.3 815.8,390.9 815.7,392.5 815.3,393.9 815.0,395.3 814.0,396.3 813.0,397.3 811.8,397.6 810.8,398.3 809.7,397.8 808.7,397.0 808.1,396.0 807.5,395.0 807.5,393.9 807.4,392.8 806.9,391.9 806.7,390.8 806.8,389.8 807.1,388.8 807.0,387.7 806.7,386.7"/>
<path d="M932.5,128.3 932.5,129.7 933.1,130.9 933.3,132.3 934.0,133.6 934.2,135.0 934.2,136.5 933.6,137.9 933.6,139.4 933.3,140.8 932.0,140.8 930.7,141.4 929.5,141.8 928.3,142.5 926.5,142.4 924.7,142.0 923.3,140.8 921.7,140.0 920.1,140.8 918.5,141.5 916.8,141.8 915.0,141.7 913.6,143.0 912.5,144.6 910.7,145.4 909.2,146.7 908.3,148.3 907.6,150.0 907.0,151.9 905.8,153.3 905.7,155.0 905.4,156.7 905.1,158.3 905.0,160.0 905.2,161.3 905.6,162.5 905.9,163.8 906.3,165.0 905.9,166.3 905.4,167.5 905.0,168.7 905.1,169.4 904.7,170.0 905.3,170.7 905.3,171.6 905.8,173.2 905.7,175.0 905.8,176.7 906.1,178.2 906.0,179.8 906.8,181.1 907.5,182.5 907.4,183.7 906.7,184.7 906.4,185.9 905.9,187.0 905.7,188.1 905.5,189.3 905.7,190.5 905.8,191.7 905.9,192.8 906.3,193.9 906.8,194.9 907.5,195.8 908.9,196.4 910.2,197.2 911.2,198.3 912.5,199.2 913.4,200.0 914.0,201.1 914.3,202.3 915.0,203.3 915.2,205.0 915.2,206.7 914.4,208.3 914.2,210.0 913.0,210.7 911.7,210.9 910.5,210.8 909.2,210.8 908.1,211.9 907.5,213.3 908.1,214.6 909.0,215.7 909.7,217.0 910.0,218.3 910.2,219.9 910.6,221.5 911.3,223.0 912.5,224.2 912.2,225.7 912.2,227.2 911.8,228.8 910.8,230.0 910.4,231.2 910.3,232.5 910.2,233.7 910.0,235.0 908.9,235.0 907.9,235.4 906.9,235.8 905.8,235.8 904.6,236.5 904.0,237.0 903.4,237.3 903.3,238.1 903.7,238.9 903.4,239.7 902.5,240.0 901.9,240.4 901.7,241.0 902.0,241.6 902.3,242.2 901.7,242.5 901.1,242.0 900.7,242.4 900.3,242.9 900.2,243.5 899.8,244.0 900.3,244.4 900.2,245.0 899.7,245.4 899.1,245.2 898.7,245.6 898.3,246.0 898.5,245.5 898.3,245.0 898.7,245.6 899.4,245.8 900.0,245.9 900.7,245.8 900.3,246.5 900.1,247.1 900.2,247.9 900.8,248.3 901.5,248.9 902.3,249.1 902.8,249.9 902.3,250.7 902.6,251.5 902.4,252.2 901.7,252.6 901.3,253.3 901.6,254.3 901.3,255.3 900.7,256.0 900.0,256.7 900.0,257.2 900.0,257.7 899.7,258.2 899.2,258.3"/>
<path d="M853.7,351.4 854.8,351.3 855.9,351.1 856.8,350.5 857.8,350.3 858.9,350.2 859.9,350.6 861.0,350.6 862.0,350.8 863.0,350.6 864.1,350.6 865.0,350.2 866.1,350.0 867.0,349.6 867.9,349.0 868.9,348.7 869.9,348.7"/>
<path d="M836.7,377.0 837.2,378.6 837.1,380.2 836.6,381.8 836.0,383.3 835.5,385.0 834.8,386.6 835.0,388.3 835.0,390.0 834.7,391.1 834.9,392.1 834.6,393.2 834.6,394.3 834.0,395.2 833.5,396.2 833.2,397.2 833.3,398.3 832.7,400.0 831.6,401.5 830.2,402.6 829.2,404.2 830.0,405.2 830.5,406.5 831.4,407.6 832.5,408.3 832.6,410.1 832.0,411.8 831.8,413.5 830.8,415.0 829.8,415.4 828.9,416.0 827.9,416.3 827.1,417.1 826.1,417.6 825.4,418.4 824.3,418.7 823.3,419.2 822.4,420.0 821.3,420.4 820.2,421.1 819.2,421.7 819.3,423.4 819.8,425.0 820.7,426.6 820.8,428.3 820.2,430.0 819.3,431.5 819.0,433.2 819.2,435.0 818.0,436.5 817.5,438.3 817.6,440.0 818.0,441.7 817.1,442.8 816.7,444.2"/>
<path d="M783.3,429.2 785.0,429.7 786.7,429.5 788.3,429.3 790.0,429.2 791.7,429.1 793.4,429.0 795.1,428.5 796.7,428.0 797.7,428.0 798.8,427.9 799.9,428.0 800.8,428.5 801.9,428.3 803.0,428.6 804.0,428.8 805.0,429.2 806.3,429.7 807.8,429.8 809.0,430.6 810.0,431.7 811.2,431.2 812.4,430.7 813.7,430.6 815.0,430.8 815.7,431.6 816.7,432.0 817.4,432.8 818.3,433.3 817.9,434.6 817.4,435.7 817.6,437.0 817.5,438.3"/>
<path d="M763.3,437.5 764.3,438.2 765.4,438.4 766.4,438.8 767.5,439.2 768.5,439.2 769.6,439.2 770.6,439.4 771.7,439.2 772.3,440.1 772.5,441.2 773.0,442.3 773.3,443.3 774.4,443.9 775.2,444.8 775.9,445.8 776.7,446.7 777.8,446.9 778.9,447.2 779.7,448.0 780.8,448.3 782.0,449.0 783.1,449.8 784.1,450.7 785.0,451.7 786.5,452.3 787.9,453.2 789.0,454.5 790.0,455.8 791.1,455.8 792.2,455.9 793.1,456.3 794.2,456.7 794.2,458.0 793.9,459.2 793.6,460.4 793.3,461.7 794.6,462.1 795.9,462.4 797.1,463.0 798.3,463.3 799.1,462.4 800.1,461.5 800.2,460.3 800.8,459.2 801.6,460.6 802.7,461.8 803.1,463.4 803.3,465.0 804.2,465.5 805.1,466.0 806.1,466.3 807.1,466.4 807.6,467.3 808.4,468.0 809.1,468.7 810.0,469.2 811.2,470.3 812.7,470.9 814.2,471.4 815.8,471.7"/>
<path d="M816.7,444.2 818.3,444.6 819.6,445.7 820.8,446.9 821.7,448.3 822.0,449.6 822.1,451.0 822.5,452.3 823.3,453.3 822.1,454.7 820.8,455.9 820.2,457.7 819.2,459.2 818.5,460.2 818.3,461.5 817.7,462.6 816.7,463.3 816.6,464.4 816.8,465.5 816.6,466.5 816.1,467.5 816.0,468.5 815.7,469.6 815.7,470.6 815.8,471.7 816.7,472.4 817.8,472.9 818.9,473.1 820.0,473.3 821.2,472.9 822.4,472.4 823.7,472.4 825.0,472.5 825.1,470.8 825.6,469.2 826.1,467.5 825.8,465.8 825.1,464.5 823.9,463.6 823.0,462.4 821.7,461.7 820.7,460.2 819.2,459.2"/>
<path d="M825.0,472.5 826.4,473.9 827.1,475.7 828.5,477.2 830.0,478.3 831.4,479.6 833.0,480.7 834.7,481.6 836.7,481.7 837.7,482.0 838.7,482.4 839.6,483.1 840.6,483.6 841.7,483.8 842.8,483.7 844.0,483.8 845.0,484.2 846.1,484.9 847.3,485.5 848.6,486.1 850.0,486.0 849.2,485.0 849.0,486.8 848.2,488.4 847.2,489.9 846.7,491.7 846.3,492.7 845.7,493.7 845.0,494.6 844.6,495.7 844.2,496.7 843.8,497.8 843.8,499.0 843.3,500.0 843.4,501.1 843.0,502.1 842.8,503.2 843.0,504.3 842.8,505.3 842.3,506.3 842.1,507.3 841.7,508.3 841.1,510.2 841.3,512.1 841.3,514.0 840.8,515.8"/>
<path d="M840.8,515.8 842.3,516.0 843.8,516.1 845.3,515.8 846.7,515.0 847.8,514.7 848.8,514.2 849.9,513.9 850.8,513.3 851.9,513.3 852.9,512.9 853.9,512.5 855.0,512.5 856.6,513.2 858.3,513.7 859.9,514.6 861.7,515.0 862.6,515.7 863.6,516.2 864.7,516.5 865.8,516.7 866.9,516.9 867.9,517.5 868.9,518.0 870.0,518.3 870.0,516.7 871.8,517.1 873.6,517.7 875.2,518.8 876.7,520.0 877.7,519.1 878.9,518.3 880.2,517.7 881.7,517.5 883.3,518.1 884.9,518.4 886.6,518.4 888.3,518.3 889.1,519.0 890.0,519.5 890.8,520.3 891.7,520.8 893.2,519.8 894.8,518.8 896.6,518.1 898.3,517.5 899.4,517.6 900.3,517.2 901.4,517.2 902.4,517.1 903.2,516.5 904.3,516.3 905.0,515.6 905.8,515.0 907.5,514.2 908.8,515.0 910.4,515.2 911.9,515.3 913.3,515.8 914.3,516.2 915.4,516.3 916.4,516.5 917.5,516.7 917.8,515.4 918.3,514.2 917.5,513.1 916.4,512.3 915.7,511.2 915.0,510.0 914.8,508.7 914.5,507.5 914.5,506.2 914.2,505.0 915.1,503.8 915.9,502.6 917.2,501.8 918.3,500.8 919.2,500.4 919.9,499.6 921.0,499.5 921.9,499.1 923.4,497.8 925.0,496.7 925.2,495.1 926.1,493.8 927.0,492.5 928.3,491.7"/>
<path d="M840.8,515.8 839.3,516.8 838.0,518.0 836.5,519.1 835.0,520.0 834.2,521.3 833.1,522.3 831.8,523.0 830.8,524.2 830.5,525.2 830.1,526.2 829.4,527.1 828.8,528.0 828.4,528.9 827.7,529.8 827.1,530.7 826.7,531.7 825.7,533.3 825.3,535.2 824.3,536.7 823.3,538.3 822.5,539.9 822.2,541.6 821.0,542.8 820.0,544.2 819.7,545.4 819.6,546.7 819.4,547.9 819.2,549.2 820.3,548.6 821.2,547.8 822.2,547.2 823.3,546.7 824.5,545.8 825.7,544.9 827.0,544.0 828.3,543.3 829.0,544.6 829.1,546.1 830.2,547.0 830.8,548.3 830.9,550.1 831.5,551.6 831.5,553.3 831.7,555.0 833.0,554.7 834.2,554.2 835.4,553.8 836.7,553.3 838.2,552.6 839.9,552.1 841.6,551.5 843.3,551.7 845.1,550.9 846.5,549.6 848.2,548.7 850.0,548.3 851.1,547.3 851.9,546.0 852.9,544.8 853.3,543.3 854.4,544.9 855.4,546.5 856.5,548.1 856.7,550.0 858.0,551.2 858.7,553.0 860.3,553.8 861.7,555.0 862.2,553.5 862.5,552.0 862.5,550.4 862.2,548.8 863.0,547.6 863.7,546.2 864.6,544.8 865.0,543.3 866.3,542.9 867.4,542.2 868.8,542.2 870.0,541.7 870.0,540.8 871.2,542.0 872.1,543.5 873.1,545.0 873.3,546.7 874.2,547.4 875.3,547.8 876.4,547.9 877.5,548.3 877.2,546.6 877.6,544.9 877.5,543.2 876.7,541.7 875.6,540.7 874.9,539.4 874.3,538.1 874.2,536.7 875.6,536.1 877.1,536.1 878.6,535.6 880.0,535.0 879.2,534.1 878.2,533.5 877.2,532.8 876.7,531.7 877.6,530.9 878.2,529.8 879.2,529.2 880.0,528.3 879.3,526.7 878.4,525.2 878.1,523.4 878.3,521.7 877.0,521.6 875.7,522.2 874.6,522.8 873.3,523.3 872.9,521.5 872.0,519.8 871.1,518.2 870.0,516.7"/>
<path d="M831.7,555.0 831.8,556.1 832.2,557.1 832.1,558.2 832.0,559.2 831.8,560.3 831.2,561.2 831.0,562.3 830.8,563.3 830.7,564.7 830.2,566.0 829.4,567.0 828.6,568.1 828.6,569.4 828.6,570.7 828.7,572.0 828.3,573.3 829.4,574.8 830.5,576.2 831.7,577.5 833.3,578.3 833.5,580.0 833.5,581.7 832.6,583.3 832.5,585.0 833.2,586.8 833.8,588.5 834.4,590.3 835.8,591.7 837.0,593.0 837.8,594.7 839.3,595.7 840.8,596.7 841.0,597.9 841.6,599.1 841.9,600.4 841.7,601.7 840.9,602.9 840.5,604.3"/>
<path d="M945.8,438.3 945.2,439.4 944.3,440.2 943.7,441.3 943.3,442.5 942.4,442.0 941.5,441.5 940.6,440.9 940.0,440.0 938.8,439.9 937.8,439.5 936.9,438.7 935.8,438.3 936.3,440.0 936.7,441.7 934.8,442.0 933.0,442.7 931.5,443.8 930.0,445.0 928.3,445.9 927.0,447.3 925.3,448.2 923.3,448.3 921.6,449.2 920.3,450.5 918.5,451.3 916.7,451.7 915.1,452.5 913.5,453.5 911.8,453.8 910.0,454.2 908.7,454.3 907.5,454.9 906.3,455.6 905.0,455.8 905.8,456.8 906.2,458.0 906.6,459.1 907.5,460.0 908.1,461.3 909.0,462.4 909.3,463.7 910.0,465.0 909.9,466.3 910.3,467.5 910.3,468.8 910.8,470.0 911.6,471.2 912.3,472.4 912.5,473.8 913.3,475.0 914.7,475.9 915.7,477.3 916.3,478.9 917.5,480.0 918.4,481.2 919.8,481.9 920.8,482.9 921.7,484.2 923.2,485.3 925.0,486.0 925.0,485.0 926.4,485.6 927.5,486.7 927.3,488.0 927.5,489.2 927.9,490.5 928.3,491.7 929.5,492.4 930.7,493.0 932.0,493.3 933.3,493.3 935.0,493.4 936.7,493.4 938.3,493.6 940.0,493.3 941.3,492.1 942.1,490.4 943.4,489.1 945.0,488.3 946.0,487.6 946.5,486.5 947.3,485.6 948.3,485.0 948.3,486.0 949.2,485.5 949.9,484.7 950.9,484.3 951.7,483.7 955.0,482.7"/>
<path d="M936.7,373.3 937.2,375.0 936.9,376.8 936.7,378.5 935.8,380.0 936.0,381.7 935.6,383.4 935.7,385.2 936.7,386.7 936.1,388.6 935.3,390.4 935.0,392.3 934.2,394.2 934.7,395.2 935.0,396.3 935.6,397.2 935.8,398.3 936.9,399.4 938.1,400.5 938.5,402.0 939.2,403.3 938.9,405.0 939.1,406.7 939.5,408.4 940.0,410.0 940.6,411.2 941.3,412.3 941.5,413.7 941.7,415.0 941.8,416.3 941.8,417.6 941.5,418.9 940.8,420.0 941.1,421.8 942.1,423.3 942.9,424.9 943.3,426.7 944.1,427.8 944.7,429.0 944.7,430.3 945.0,431.7 945.3,433.3 945.7,435.0 946.1,436.6 945.8,438.3 946.8,439.1 948.0,439.5 949.1,440.0 950.0,440.8 955.0,444.2"/>
<path d="M880.0,535.0 881.3,534.3 882.3,533.3 883.6,532.9 885.0,532.5 886.1,531.7 887.4,531.0 888.6,530.2 890.0,530.0 891.9,529.6 893.7,528.8 895.6,528.7 897.5,529.2 899.4,528.9 901.2,528.4 903.1,529.0 905.0,528.7 905.5,529.9 906.5,530.9 907.2,532.0 907.5,533.3 908.5,534.9 910.0,535.9 911.8,536.4 913.3,537.5 914.8,538.1 916.3,538.1 917.6,539.0 919.2,539.2 920.7,539.4 922.3,539.4 923.5,540.3 925.0,540.8 926.5,540.6 928.0,540.8 929.4,541.5 930.8,542.0 932.3,542.0 933.8,542.3 935.3,542.3 936.7,543.0 937.3,542.2 938.1,541.5 939.0,541.2 940.0,540.8 941.6,539.9 943.3,539.2 944.6,539.2 945.9,539.3 947.1,538.7 948.3,538.3 955.0,538.0"/>
<path d="M925.0,540.8 925.0,542.6 924.7,544.3 923.8,545.8 923.3,547.5 923.1,549.1 923.6,550.6 924.0,552.1 925.0,553.3 925.2,554.8 925.1,555.6 925.1,556.3 924.7,557.1 925.0,557.8 925.5,558.5 925.8,559.2"/>
<path d="M927.5,563.3 928.2,563.7 928.9,563.8 929.6,564.3 930.4,564.3 930.9,565.0 931.7,565.3 932.5,565.1 933.3,565.0 933.9,564.2 934.7,563.9 935.2,563.0 935.0,562.1 935.9,562.3 936.6,561.7 937.5,561.5 938.3,561.7 938.9,562.3 939.8,562.4 940.1,563.2 940.4,563.9 941.2,564.2 941.9,564.3 942.7,564.4 943.3,565.0 943.8,565.3 944.3,565.4 944.7,565.1 945.2,564.9 946.0,565.3 946.9,565.3 947.6,564.6 948.4,564.2 948.6,563.7 949.0,563.4 949.5,563.4 950.0,563.3 950.4,562.6 950.1,561.9 950.9,561.7 951.2,561.0 951.7,560.4 951.7,559.7 951.6,559.0 951.7,558.3 955.0,556.7"/>
<path d="M711.7,613.3 712.7,614.9 713.3,616.6 714.5,617.9 715.8,619.2 716.8,619.6 717.9,619.8 718.9,620.3 719.8,620.8 720.8,621.4 721.4,622.3 722.3,622.9 723.3,623.3 725.0,624.2 726.8,624.7 728.4,625.6 730.0,626.7 731.1,627.0 732.2,627.0 733.1,627.5 734.2,627.9 735.3,627.9 736.4,628.2 737.4,628.6 738.3,629.2 739.3,628.9 740.2,628.4 740.8,627.6 741.5,626.9 743.4,626.2 745.0,625.0 746.3,625.3 747.4,626.0 748.7,626.4 750.0,626.7 751.3,627.7 752.8,628.5 754.3,629.3 755.8,630.0 756.6,630.8 757.4,631.4 757.9,632.3 758.3,633.3 760.0,633.7 761.6,633.9 763.3,634.4 765.0,634.2 766.7,634.3 768.4,634.9 770.0,635.3 771.7,635.8 772.9,635.4 774.0,634.6 775.4,634.6 776.7,634.2 777.7,634.5 778.8,634.8 779.9,635.2 780.8,635.8"/>
<path d="M611.7,645.8 613.4,645.5 615.2,645.8 616.8,645.1 618.3,644.2 619.3,645.3 620.0,646.7 621.6,646.1 623.2,645.3 625.0,645.4 626.7,645.0 627.7,645.1 628.8,644.8 629.8,644.4 630.8,644.1 631.8,643.9 632.9,643.8 634.0,643.9 635.0,644.2 636.1,644.2 637.1,644.6 638.1,644.5 639.2,644.9 640.2,645.0 641.3,644.7 642.4,644.6 643.3,644.2 644.1,645.5 644.4,647.0 644.3,648.5 644.2,650.0 644.7,651.1 645.7,651.8 646.7,652.5 647.5,653.3 646.7,654.0 646.1,654.8 645.9,655.8 645.5,656.7 644.9,657.6 644.8,658.6 643.9,659.1 643.3,660.0 643.1,661.2 642.4,662.2 642.2,663.4 642.2,664.7 641.9,665.8 641.0,666.7 640.2,667.7 639.2,668.3 639.2,669.4 639.7,670.4 639.7,671.4 639.7,672.5 639.1,673.4 638.9,674.5 639.1,675.6 639.2,676.7 638.9,678.4 638.3,680.1 637.4,681.7 636.7,683.3 637.3,685.0 637.2,686.8 637.6,688.4 638.3,690.0 637.2,691.4 635.8,692.5 634.8,694.0 633.3,695.0 632.5,696.1 631.4,696.8 630.2,697.5 629.2,698.3 630.1,699.4 631.1,700.5 632.1,701.6 632.5,703.0 633.3,706.7"/>
<path d="M635.1,344.7 635.1,345.6 634.8,346.5 634.6,347.4 634.2,348.2 632.5,348.8 631.0,349.7 629.6,350.7 628.2,351.8 627.3,353.4 626.0,354.6 624.8,355.7 623.4,356.4 622.3,357.7 621.1,358.7 622.2,359.7 623.3,360.9 623.7,362.3 624.4,363.7 625.7,364.4 626.7,365.5 628.2,366.0 629.3,367.0 630.4,366.9 631.4,367.2 632.5,367.5 633.5,367.8 634.0,366.7 634.3,365.5 635.2,364.6 635.9,363.7 637.3,363.0 638.4,362.0 638.8,363.2 639.2,364.4 640.2,365.1 640.9,366.2 641.2,367.2 641.7,368.1 642.5,368.8 643.4,369.5 644.4,369.5 645.5,369.5 646.5,369.7 647.5,370.3"/>
<path d="M857.3,371.3 858.1,372.0 858.8,372.7 859.6,373.3 860.6,373.6 861.7,374.2 862.9,374.4 863.8,375.2 864.7,376.0 865.8,376.7 867.0,376.9 868.0,377.5 868.9,378.4 870.0,378.7 871.0,379.3 871.9,380.2 873.0,380.6"/>
<path d="M850.2,380.1 850.5,381.3 850.7,382.6 850.6,383.7 850.5,384.8"/>
<path d="M854.0,379.8 854.3,381.2 854.6,382.6 854.4,383.9 854.3,385.3"/>
</g>
<rect x="520.8" y="134.6" width="41" height="2.2" fill="#fff" stroke="#222" stroke-width=".3"/>
<rect x="520.8" y="134.6" width="21" height="2.2" fill="#111"/>
<text x="566" y="137.3" font-size="4.6" fill="#222">200 km</text>
<path d="M524.2,139.4 L526.6,144 L524.2,142.8 L521.8,144Z" fill="#222"/>
</g>
<circle cx="715.3" cy="229.7" r="11.2" fill="#00ff00"/>
<path d="M715.3,229.7 L715.3,218.5 A11.2,11.2 0 0 1 720.73,239.50Z" fill="#0000ff" stroke="#001a08" stroke-width="0.35" stroke-linejoin="round"/>
<circle cx="715.3" cy="229.7" r="11.2" fill="none" stroke="#0a2a0a" stroke-width=".4"/>
<circle cx="802" cy="219.2" r="11.2" fill="#00ff00"/>
<path d="M802,219.2 L802,208.0 A11.2,11.2 0 0 1 803.94,208.17Z" fill="#00264a" stroke="#001a08" stroke-width="0.45" stroke-linejoin="round"/>
<circle cx="802" cy="219.2" r="11.2" fill="none" stroke="#0a2a0a" stroke-width=".4"/>
<circle cx="858" cy="269.7" r="11.2" fill="#00ff00"/>
<path d="M858,269.7 L858,258.5 A11.2,11.2 0 0 1 859.17,258.56Z" fill="#00264a" stroke="#001a08" stroke-width="0.45" stroke-linejoin="round"/>
<circle cx="858" cy="269.7" r="11.2" fill="none" stroke="#0a2a0a" stroke-width=".4"/>
<circle cx="894.7" cy="273.3" r="11.2" fill="#00ff00"/>
<path d="M894.7,273.3 L894.7,262.1 A11.2,11.2 0 0 1 896.64,262.27Z" fill="#00264a" stroke="#001a08" stroke-width="0.45" stroke-linejoin="round"/>
<circle cx="894.7" cy="273.3" r="11.2" fill="none" stroke="#0a2a0a" stroke-width=".4"/>
<circle cx="592.5" cy="366.3" r="11.2" fill="#00ff00"/>
<path d="M592.5,366.3 L592.5,355.1 A11.2,11.2 0 0 1 594.83,377.26Z" fill="#0000ff" stroke="#001a08" stroke-width="0.35" stroke-linejoin="round"/>
<circle cx="592.5" cy="366.3" r="11.2" fill="none" stroke="#0a2a0a" stroke-width=".4"/>
<circle cx="846" cy="366.5" r="11.2" fill="#00ff00"/>
<path d="M846,366.5 L846,355.3 A11.2,11.2 0 0 1 847.56,355.41Z" fill="#00264a" stroke="#001a08" stroke-width="0.45" stroke-linejoin="round"/>
<circle cx="846" cy="366.5" r="11.2" fill="none" stroke="#0a2a0a" stroke-width=".4"/>
<circle cx="753.3" cy="395" r="11.2" fill="#00ff00"/>
<path d="M753.3,395 L753.3,383.8 A11.2,11.2 0 0 1 763.28,389.92Z" fill="#0000ff" stroke="#001a08" stroke-width="0.35" stroke-linejoin="round"/>
<circle cx="753.3" cy="395" r="11.2" fill="none" stroke="#0a2a0a" stroke-width=".4"/>
<circle cx="646.3" cy="463.3" r="11.2" fill="#00ff00"/>
<path d="M646.3,463.3 L646.3,452.1 A11.2,11.2 0 0 1 650.86,473.53Z" fill="#0000ff" stroke="#001a08" stroke-width="0.35" stroke-linejoin="round"/>
<circle cx="646.3" cy="463.3" r="11.2" fill="none" stroke="#0a2a0a" stroke-width=".4"/>
<circle cx="717.5" cy="549.7" r="11.2" fill="#00ff00"/>
<path d="M717.5,549.7 L717.5,538.5 A11.2,11.2 0 1 1 708.11,555.80Z" fill="#0000ff" stroke="#001a08" stroke-width="0.35" stroke-linejoin="round"/>
<circle cx="717.5" cy="549.7" r="11.2" fill="none" stroke="#0a2a0a" stroke-width=".4"/>
<circle cx="609.2" cy="632.5" r="11.2" fill="#00ff00"/>
<path d="M609.2,632.5 L609.2,621.3 A11.2,11.2 0 1 1 598.14,630.75Z" fill="#0000ff" stroke="#001a08" stroke-width="0.35" stroke-linejoin="round"/>
<circle cx="609.2" cy="632.5" r="11.2" fill="none" stroke="#0a2a0a" stroke-width=".4"/>
<rect x="516.5" y="129.5" width="437.5" height="573.5" fill="none" stroke="#9c9c9c" stroke-width=".7"/>
<path d="M514,233.5 h2.5" stroke="#333" stroke-width=".6"/>
<text x="512.6" y="235.9" font-size="6.7" fill="#e2434a" text-anchor="end">60°N</text>
<path d="M514,347.6 h2.5" stroke="#333" stroke-width=".6"/>
<text x="512.6" y="350.0" font-size="6.7" fill="#e2434a" text-anchor="end">55°N</text>
<path d="M514,461.4 h2.5" stroke="#333" stroke-width=".6"/>
<text x="512.6" y="463.79999999999995" font-size="6.7" fill="#e2434a" text-anchor="end">50°N</text>
<path d="M514,575.5 h2.5" stroke="#333" stroke-width=".6"/>
<text x="512.6" y="577.9" font-size="6.7" fill="#e2434a" text-anchor="end">45°N</text>
<path d="M514,689.5 h2.5" stroke="#333" stroke-width=".6"/>
<text x="512.6" y="691.9" font-size="6.7" fill="#e2434a" text-anchor="end">40°N</text>
<path d="M524.7,703 v2.5" stroke="#333" stroke-width=".6"/>
<text x="524.7" y="712.2" font-size="6.7" fill="#e2434a" text-anchor="middle">15°W</text>
<path d="M595,703 v2.5" stroke="#333" stroke-width=".6"/>
<text x="595" y="712.2" font-size="6.7" fill="#e2434a" text-anchor="middle">10°W</text>
<path d="M665.2,703 v2.5" stroke="#333" stroke-width=".6"/>
<text x="665.2" y="712.2" font-size="6.7" fill="#e2434a" text-anchor="middle">5°W</text>
<path d="M735.3,703 v2.5" stroke="#333" stroke-width=".6"/>
<text x="735.3" y="712.2" font-size="6.7" fill="#e2434a" text-anchor="middle">0°</text>
<path d="M805.5,703 v2.5" stroke="#333" stroke-width=".6"/>
<text x="805.5" y="712.2" font-size="6.7" fill="#e2434a" text-anchor="middle">5°E</text>
<path d="M875.7,703 v2.5" stroke="#333" stroke-width=".6"/>
<text x="875.7" y="712.2" font-size="6.7" fill="#e2434a" text-anchor="middle">10°E</text>
<path d="M945.5,703 v2.5" stroke="#333" stroke-width=".6"/>
<text x="945.5" y="712.2" font-size="6.7" fill="#e2434a" text-anchor="middle">15°E</text>
<text x="735.3" y="721.8" font-size="8.6" fill="#e2434a" text-anchor="middle">Longitude</text>
<text transform="translate(493.5,416) rotate(-90)" font-size="8.6" fill="#e2434a" text-anchor="middle">Latitude</text>
<text x="838" y="694.5" font-size="32" font-family="'Liberation Sans','Noto Sans CJK SC',sans-serif" fill="#000" fill-opacity=".42" transform="translate(1.8,2)"><tspan font-weight="700">知乎</tspan><tspan x="915.5" dy="-1" font-size="30.5">@</tspan><tspan x="945.6" letter-spacing=".45">EcoloJi</tspan></text>
<text x="838" y="694.5" font-size="32" font-family="'Liberation Sans','Noto Sans CJK SC',sans-serif" fill="#fff" fill-opacity=".92"><tspan font-weight="700">知乎</tspan><tspan x="915.5" dy="-1" font-size="30.5">@</tspan><tspan x="945.6" letter-spacing=".45">EcoloJi</tspan></text>
</svg>
</body></html>
